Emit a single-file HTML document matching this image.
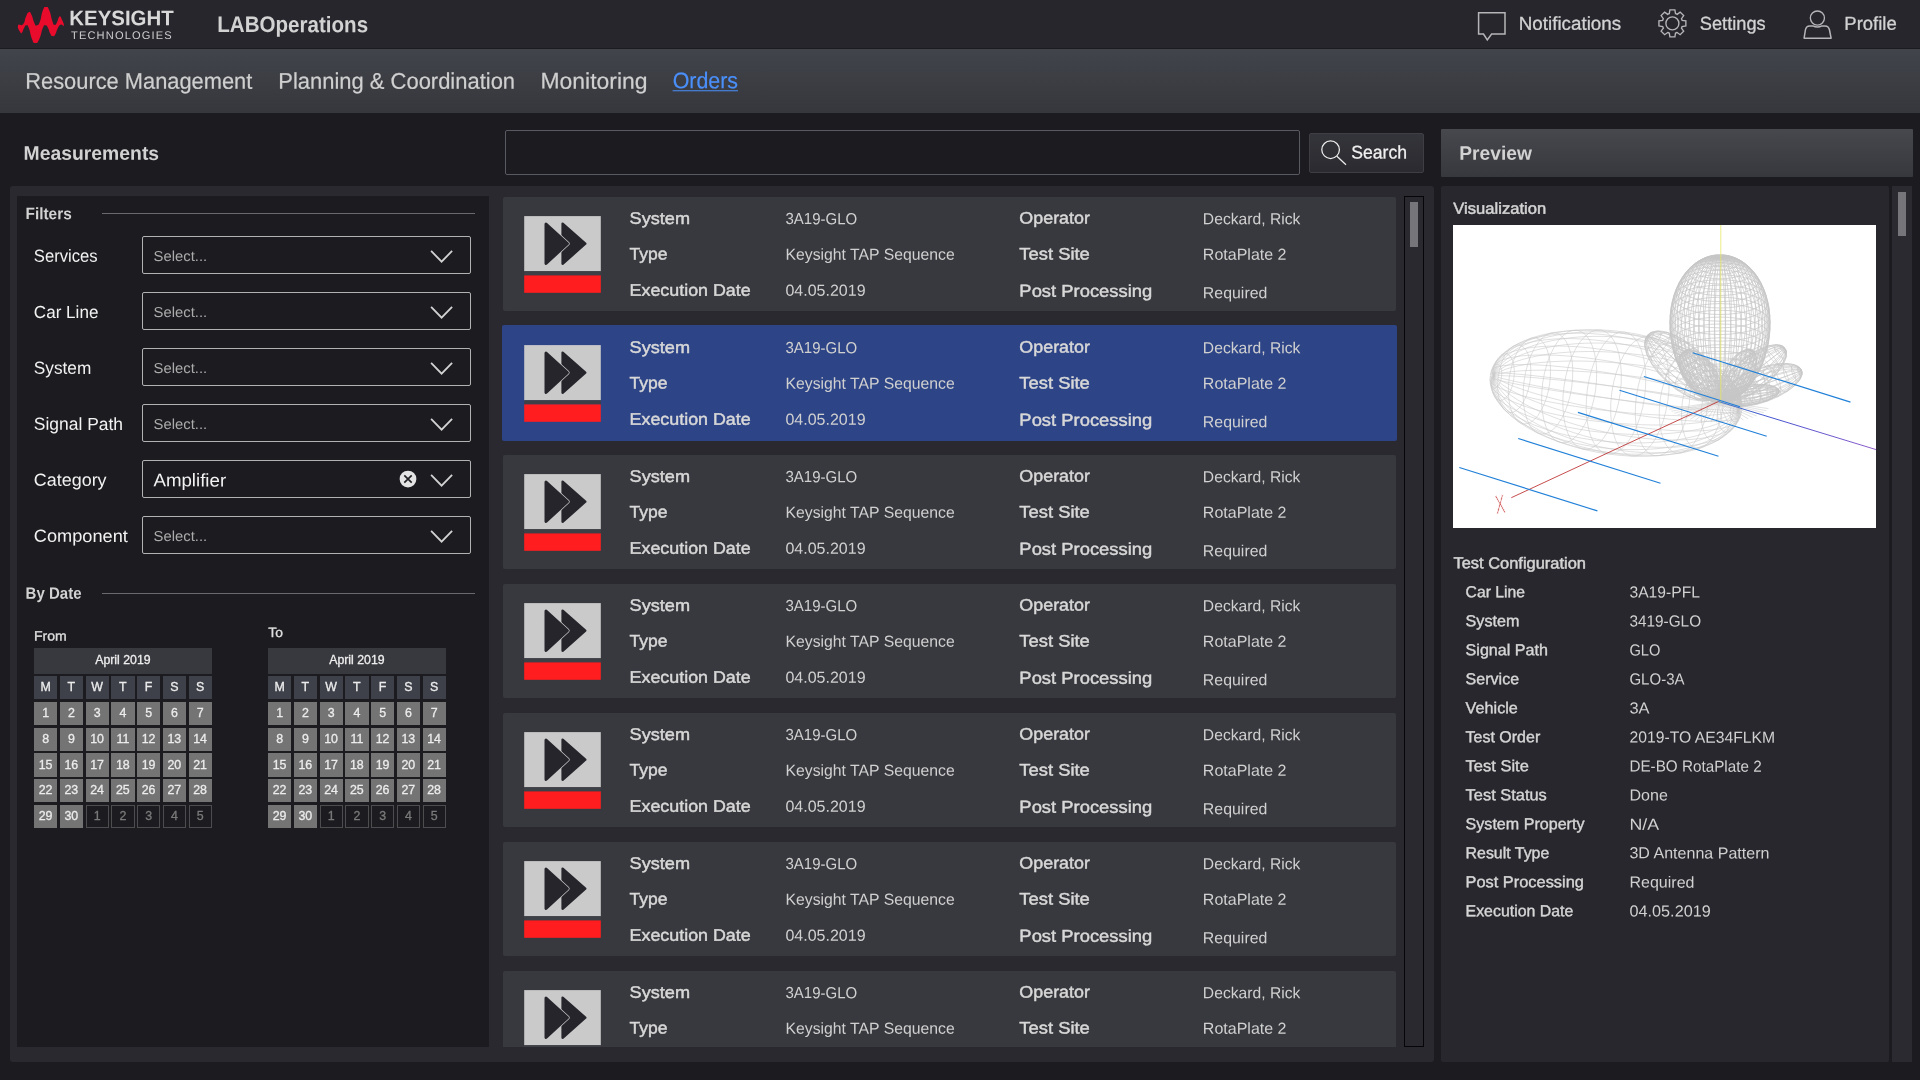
<!DOCTYPE html><html lang="en"><head><meta charset="utf-8"><title>LABOperations - Orders</title><style>
html,body{margin:0;padding:0}
body{width:1920px;height:1080px;background:#1c1b20;position:relative;overflow:hidden;font-family:"Liberation Sans",sans-serif;}
#app{position:absolute;left:0;top:0;width:1920px;height:1080px;will-change:transform;transform:translateZ(0)}
.a{position:absolute}
.t{position:absolute;white-space:pre;line-height:1;transform-origin:0 0;}
.sel{position:absolute;left:142px;width:327px;height:36px;border:1.2px solid #b2b2b2;border-radius:2px;box-sizing:content-box;background:#1c1b20}
.card{position:absolute;left:503px;width:893.3px;height:113.7px;background:#38393e;border-radius:2px}
.card.on{left:502px;width:895.2px;height:115.6px;background:#2d4486}
.cal{position:absolute;width:178px}
.cal .h{position:absolute;left:0;top:0;width:177.8px;height:25.8px;background:#38393e}
.cal .c{position:absolute;width:23.25px;height:23.25px;box-sizing:border-box}
.cal .w{background:#3e414a}
.cal .d{background:#747474}
.cal .o{background:#1c1b20;border:1px solid #4d4d50}
.cal span{position:absolute;left:-10px;right:-10px;text-align:center;top:5.3px;font-size:12.4px;line-height:1;color:#ececec;white-space:pre;-webkit-text-stroke:0.3px #ececec}
.cal .o span{color:#7a7a7a;top:4.3px;-webkit-text-stroke:0.3px #7a7a7a}
.cal .h span{top:6.2px;font-size:12.3px;color:#f0f0f0;left:0;right:0}
</style></head><body><div id="app">
<div class="a" style="left:0;top:0;width:1920px;height:48.4px;background:#27262d"></div>
<div class="a" style="left:0;top:48.4px;width:1920px;height:64.3px;background:linear-gradient(#1b1b20 0,#1b1b20 1px,#41444b 1.5px,#36373c 100%)"></div>
<svg class="a" style="left:0;top:0" width="70" height="48" viewBox="0 0 70 48"><path d="M17.97 25.50C18.81 23.05 20.73 26.77 23.12 24.19C25.52 21.60 24.25 20.42 25.94 16.87C27.62 13.33 27.12 13.08 28.75 12.37C30.38 11.67 29.63 11.21 31.37 14.53C33.12 17.85 32.82 20.20 34.56 23.44C36.31 26.67 35.56 25.93 37.19 25.31C38.82 24.69 38.31 25.82 40.00 21.37C41.69 16.93 40.98 14.80 42.81 10.50C44.64 6.20 44.12 7.03 46.09 7.03C48.06 7.03 47.49 6.20 49.37 10.50C51.26 14.80 50.83 17.07 52.37 21.37C53.92 25.68 53.18 24.51 54.53 24.84C55.88 25.18 55.61 24.66 56.87 22.50C58.14 20.33 57.76 19.45 58.75 17.62C59.73 15.80 59.31 16.07 60.15 16.41C61.00 16.74 60.44 16.02 61.56 18.75C62.69 21.48 64.19 23.70 63.90 25.50C63.62 27.30 62.45 23.91 60.62 24.75C58.80 25.59 59.44 25.39 57.81 28.31C56.18 31.24 56.73 32.16 55.19 34.50C53.64 36.83 54.12 36.32 52.65 36.09C51.19 35.87 51.80 36.36 50.31 33.75C48.82 31.13 49.23 29.91 47.69 27.37C46.14 24.84 46.62 25.09 45.16 25.31C43.69 25.54 44.58 23.96 42.81 28.12C41.04 32.29 41.50 34.74 39.25 39.19C37.00 43.63 37.48 42.88 35.31 42.94C33.15 42.99 33.94 43.76 32.03 39.37C30.12 34.99 30.62 32.53 28.94 28.31C27.25 24.09 27.87 25.42 26.41 25.31C24.94 25.20 25.38 25.74 24.06 27.94C22.74 30.13 23.12 31.30 22.00 32.62C20.87 33.95 21.52 34.48 20.31 32.34C19.10 30.21 17.12 27.95 17.97 25.50Z" fill="#e80b2c"/></svg>
<svg class="a" style="left:1470px;top:4px" width="60" height="42" viewBox="1470 4 60 42" fill="none" stroke="#b6b6b8" stroke-width="1.5" stroke-linejoin="miter"><path d="M1478.6 12.8H1505V34.1H1491.6L1487.3 40L1483.5 34.1H1478.6Z"/></svg>
<svg class="a" style="left:1650px;top:4px" width="60" height="42" viewBox="1650 4 60 42" fill="none" stroke="#b6b6b8" stroke-width="1.35" stroke-linejoin="miter"><path d="M1669.30 13.68L1669.90 9.93L1674.90 9.93L1675.50 13.68A10.2 10.2 0 0 1 1677.08 14.34L1680.16 12.11L1683.69 15.64L1681.46 18.72A10.2 10.2 0 0 1 1682.12 20.30L1685.87 20.90L1685.87 25.90L1682.12 26.50A10.2 10.2 0 0 1 1681.46 28.08L1683.69 31.16L1680.16 34.69L1677.08 32.46A10.2 10.2 0 0 1 1675.50 33.12L1674.90 36.87L1669.90 36.87L1669.30 33.12A10.2 10.2 0 0 1 1667.72 32.46L1664.64 34.69L1661.11 31.16L1663.34 28.08A10.2 10.2 0 0 1 1662.68 26.50L1658.93 25.90L1658.93 20.90L1662.68 20.30A10.2 10.2 0 0 1 1663.34 18.72L1661.11 15.64L1664.64 12.11L1667.72 14.34A10.2 10.2 0 0 1 1669.30 13.68Z"/><circle cx="1672.4" cy="23.4" r="6.5"/></svg>
<svg class="a" style="left:1790px;top:4px" width="60" height="42" viewBox="1790 4 60 42" fill="none" stroke="#b6b6b8" stroke-width="1.35" stroke-linejoin="round"><circle cx="1817.4" cy="18" r="7.05"/><path d="M1804.1 38.2H1831.1L1829.5 30C1828.9 27 1827.5 25.9 1825.1 25.9H1822C1819 27.4 1815.8 27.4 1812.8 25.9H1809.7C1807.3 25.9 1805.9 27 1805.4 30Z" stroke-width="1.5"/></svg>
<div class="a" style="left:9.5px;top:185.5px;width:1424px;height:876px;background:#2a292f;border-radius:3px"></div>
<div class="a" style="left:17px;top:196px;width:471.5px;height:850.5px;background:#1c1b20"></div>
<div class="a" style="left:505px;top:130px;width:793px;height:42.5px;border:1px solid #585963;border-radius:2px;background:#1c1b20"></div>
<div class="a" style="left:1309px;top:133px;width:113px;height:38px;border:1px solid #3e3e44;border-radius:2px;background:linear-gradient(#34353a,#2b2a30)"></div>
<svg class="a" style="left:1315px;top:136px" width="36" height="34" viewBox="1315 136 36 34" fill="none" stroke="#ededed" stroke-width="1.25"><circle cx="1330.6" cy="149.7" r="8.8"/><path d="M1336.9 156.2L1346 164.8" stroke-linecap="butt"/></svg>
<div class="a" style="left:1441px;top:128.7px;width:471.5px;height:48px;background:linear-gradient(#46484d,#37383d);border-radius:1px"></div>
<div class="a" style="left:1441px;top:185.5px;width:448px;height:876px;background:#28272d;border-radius:2px"></div>
<div class="a" style="left:1891.7px;top:185.5px;width:20.3px;height:876px;background:#2b2a30"></div>
<div class="a" style="left:1898.3px;top:192px;width:8px;height:44px;background:#76767a"></div>
<div class="a" style="left:102px;top:212.8px;width:373px;height:1px;background:#6a6a6e"></div>
<div class="a" style="left:102px;top:592.9px;width:373px;height:1px;background:#6a6a6e"></div>
<div class="sel" style="top:235.8px"></div>
<svg class="a" style="left:426px;top:246.4px" width="32" height="20" viewBox="0 0 32 20" fill="none" stroke="#d2d2d2" stroke-width="1.8"><path d="M5.1 4.9L15.6 15.7L26.1 4.9"/></svg>
<div class="sel" style="top:291.8px"></div>
<svg class="a" style="left:426px;top:302.4px" width="32" height="20" viewBox="0 0 32 20" fill="none" stroke="#d2d2d2" stroke-width="1.8"><path d="M5.1 4.9L15.6 15.7L26.1 4.9"/></svg>
<div class="sel" style="top:347.8px"></div>
<svg class="a" style="left:426px;top:358.4px" width="32" height="20" viewBox="0 0 32 20" fill="none" stroke="#d2d2d2" stroke-width="1.8"><path d="M5.1 4.9L15.6 15.7L26.1 4.9"/></svg>
<div class="sel" style="top:403.8px"></div>
<svg class="a" style="left:426px;top:414.4px" width="32" height="20" viewBox="0 0 32 20" fill="none" stroke="#d2d2d2" stroke-width="1.8"><path d="M5.1 4.9L15.6 15.7L26.1 4.9"/></svg>
<div class="sel" style="top:459.8px"></div>
<svg class="a" style="left:426px;top:470.4px" width="32" height="20" viewBox="0 0 32 20" fill="none" stroke="#d2d2d2" stroke-width="1.8"><path d="M5.1 4.9L15.6 15.7L26.1 4.9"/></svg>
<div class="sel" style="top:515.8px"></div>
<svg class="a" style="left:426px;top:526.4px" width="32" height="20" viewBox="0 0 32 20" fill="none" stroke="#d2d2d2" stroke-width="1.8"><path d="M5.1 4.9L15.6 15.7L26.1 4.9"/></svg>
<svg class="a" style="left:398px;top:469px" width="20" height="20" viewBox="398 469 20 20"><circle cx="408" cy="479.05" r="8.4" fill="#e4e4e4"/><path d="M404.3 475.4L411.7 482.7M411.7 475.4L404.3 482.7" stroke="#222126" stroke-width="1.7" fill="none"/></svg>
<div class="cal" style="left:34px;top:648px"><div class="h"><span>April 2019</span></div><div class="c w" style="left:0.00px;top:28.2px"><span>M</span></div><div class="c w" style="left:25.75px;top:28.2px"><span>T</span></div><div class="c w" style="left:51.50px;top:28.2px"><span>W</span></div><div class="c w" style="left:77.25px;top:28.2px"><span>T</span></div><div class="c w" style="left:103.00px;top:28.2px"><span>F</span></div><div class="c w" style="left:128.75px;top:28.2px"><span>S</span></div><div class="c w" style="left:154.50px;top:28.2px"><span>S</span></div><div class="c d" style="left:0.00px;top:53.95px"><span>1</span></div><div class="c d" style="left:25.75px;top:53.95px"><span>2</span></div><div class="c d" style="left:51.50px;top:53.95px"><span>3</span></div><div class="c d" style="left:77.25px;top:53.95px"><span>4</span></div><div class="c d" style="left:103.00px;top:53.95px"><span>5</span></div><div class="c d" style="left:128.75px;top:53.95px"><span>6</span></div><div class="c d" style="left:154.50px;top:53.95px"><span>7</span></div><div class="c d" style="left:0.00px;top:79.70px"><span>8</span></div><div class="c d" style="left:25.75px;top:79.70px"><span>9</span></div><div class="c d" style="left:51.50px;top:79.70px"><span>10</span></div><div class="c d" style="left:77.25px;top:79.70px"><span>11</span></div><div class="c d" style="left:103.00px;top:79.70px"><span>12</span></div><div class="c d" style="left:128.75px;top:79.70px"><span>13</span></div><div class="c d" style="left:154.50px;top:79.70px"><span>14</span></div><div class="c d" style="left:0.00px;top:105.45px"><span>15</span></div><div class="c d" style="left:25.75px;top:105.45px"><span>16</span></div><div class="c d" style="left:51.50px;top:105.45px"><span>17</span></div><div class="c d" style="left:77.25px;top:105.45px"><span>18</span></div><div class="c d" style="left:103.00px;top:105.45px"><span>19</span></div><div class="c d" style="left:128.75px;top:105.45px"><span>20</span></div><div class="c d" style="left:154.50px;top:105.45px"><span>21</span></div><div class="c d" style="left:0.00px;top:131.20px"><span>22</span></div><div class="c d" style="left:25.75px;top:131.20px"><span>23</span></div><div class="c d" style="left:51.50px;top:131.20px"><span>24</span></div><div class="c d" style="left:77.25px;top:131.20px"><span>25</span></div><div class="c d" style="left:103.00px;top:131.20px"><span>26</span></div><div class="c d" style="left:128.75px;top:131.20px"><span>27</span></div><div class="c d" style="left:154.50px;top:131.20px"><span>28</span></div><div class="c d" style="left:0.00px;top:156.95px"><span>29</span></div><div class="c d" style="left:25.75px;top:156.95px"><span>30</span></div><div class="c o" style="left:51.50px;top:156.95px"><span>1</span></div><div class="c o" style="left:77.25px;top:156.95px"><span>2</span></div><div class="c o" style="left:103.00px;top:156.95px"><span>3</span></div><div class="c o" style="left:128.75px;top:156.95px"><span>4</span></div><div class="c o" style="left:154.50px;top:156.95px"><span>5</span></div></div>
<div class="cal" style="left:268px;top:648px"><div class="h"><span>April 2019</span></div><div class="c w" style="left:0.00px;top:28.2px"><span>M</span></div><div class="c w" style="left:25.75px;top:28.2px"><span>T</span></div><div class="c w" style="left:51.50px;top:28.2px"><span>W</span></div><div class="c w" style="left:77.25px;top:28.2px"><span>T</span></div><div class="c w" style="left:103.00px;top:28.2px"><span>F</span></div><div class="c w" style="left:128.75px;top:28.2px"><span>S</span></div><div class="c w" style="left:154.50px;top:28.2px"><span>S</span></div><div class="c d" style="left:0.00px;top:53.95px"><span>1</span></div><div class="c d" style="left:25.75px;top:53.95px"><span>2</span></div><div class="c d" style="left:51.50px;top:53.95px"><span>3</span></div><div class="c d" style="left:77.25px;top:53.95px"><span>4</span></div><div class="c d" style="left:103.00px;top:53.95px"><span>5</span></div><div class="c d" style="left:128.75px;top:53.95px"><span>6</span></div><div class="c d" style="left:154.50px;top:53.95px"><span>7</span></div><div class="c d" style="left:0.00px;top:79.70px"><span>8</span></div><div class="c d" style="left:25.75px;top:79.70px"><span>9</span></div><div class="c d" style="left:51.50px;top:79.70px"><span>10</span></div><div class="c d" style="left:77.25px;top:79.70px"><span>11</span></div><div class="c d" style="left:103.00px;top:79.70px"><span>12</span></div><div class="c d" style="left:128.75px;top:79.70px"><span>13</span></div><div class="c d" style="left:154.50px;top:79.70px"><span>14</span></div><div class="c d" style="left:0.00px;top:105.45px"><span>15</span></div><div class="c d" style="left:25.75px;top:105.45px"><span>16</span></div><div class="c d" style="left:51.50px;top:105.45px"><span>17</span></div><div class="c d" style="left:77.25px;top:105.45px"><span>18</span></div><div class="c d" style="left:103.00px;top:105.45px"><span>19</span></div><div class="c d" style="left:128.75px;top:105.45px"><span>20</span></div><div class="c d" style="left:154.50px;top:105.45px"><span>21</span></div><div class="c d" style="left:0.00px;top:131.20px"><span>22</span></div><div class="c d" style="left:25.75px;top:131.20px"><span>23</span></div><div class="c d" style="left:51.50px;top:131.20px"><span>24</span></div><div class="c d" style="left:77.25px;top:131.20px"><span>25</span></div><div class="c d" style="left:103.00px;top:131.20px"><span>26</span></div><div class="c d" style="left:128.75px;top:131.20px"><span>27</span></div><div class="c d" style="left:154.50px;top:131.20px"><span>28</span></div><div class="c d" style="left:0.00px;top:156.95px"><span>29</span></div><div class="c d" style="left:25.75px;top:156.95px"><span>30</span></div><div class="c o" style="left:51.50px;top:156.95px"><span>1</span></div><div class="c o" style="left:77.25px;top:156.95px"><span>2</span></div><div class="c o" style="left:103.00px;top:156.95px"><span>3</span></div><div class="c o" style="left:128.75px;top:156.95px"><span>4</span></div><div class="c o" style="left:154.50px;top:156.95px"><span>5</span></div></div>
<div class="a" style="left:495px;top:190px;width:910px;height:857px;overflow:hidden">
<div class="card" style="left:8px;top:7px"></div>
<svg class="a" style="left:29px;top:26px" width="77" height="77" viewBox="0 0 77 77"><rect x="0.2" y="0.1" width="76.6" height="55.2" fill="#cacaca"/><rect x="0.2" y="55.2" width="76.6" height="4.3" fill="#3d4046"/><rect x="0.2" y="59.4" width="76.6" height="17.4" fill="#ff1d1f"/><path d="M38.6 7.6L61.3 27.7L38.6 47.8Z" fill="#26252c" stroke="#26252c" stroke-width="2.4" stroke-linejoin="round"/><path d="M22 8L43.4 27.7L22 47.4Z" fill="#26252c" stroke="#cacaca" stroke-width="4.4" stroke-linejoin="round"/><path d="M22 8L43.4 27.7L22 47.4Z" fill="#26252c" stroke="#26252c" stroke-width="3.0" stroke-linejoin="round"/></svg>
<div class="card on" style="left:7px;top:135px"></div>
<svg class="a" style="left:29px;top:155px" width="77" height="77" viewBox="0 0 77 77"><rect x="0.2" y="0.1" width="76.6" height="55.2" fill="#cacaca"/><rect x="0.2" y="55.2" width="76.6" height="4.3" fill="#3d4046"/><rect x="0.2" y="59.4" width="76.6" height="17.4" fill="#ff1d1f"/><path d="M38.6 7.6L61.3 27.7L38.6 47.8Z" fill="#26252c" stroke="#26252c" stroke-width="2.4" stroke-linejoin="round"/><path d="M22 8L43.4 27.7L22 47.4Z" fill="#26252c" stroke="#cacaca" stroke-width="4.4" stroke-linejoin="round"/><path d="M22 8L43.4 27.7L22 47.4Z" fill="#26252c" stroke="#26252c" stroke-width="3.0" stroke-linejoin="round"/></svg>
<div class="card" style="left:8px;top:265px"></div>
<svg class="a" style="left:29px;top:284px" width="77" height="77" viewBox="0 0 77 77"><rect x="0.2" y="0.1" width="76.6" height="55.2" fill="#cacaca"/><rect x="0.2" y="55.2" width="76.6" height="4.3" fill="#3d4046"/><rect x="0.2" y="59.4" width="76.6" height="17.4" fill="#ff1d1f"/><path d="M38.6 7.6L61.3 27.7L38.6 47.8Z" fill="#26252c" stroke="#26252c" stroke-width="2.4" stroke-linejoin="round"/><path d="M22 8L43.4 27.7L22 47.4Z" fill="#26252c" stroke="#cacaca" stroke-width="4.4" stroke-linejoin="round"/><path d="M22 8L43.4 27.7L22 47.4Z" fill="#26252c" stroke="#26252c" stroke-width="3.0" stroke-linejoin="round"/></svg>
<div class="card" style="left:8px;top:394px"></div>
<svg class="a" style="left:29px;top:413px" width="77" height="77" viewBox="0 0 77 77"><rect x="0.2" y="0.1" width="76.6" height="55.2" fill="#cacaca"/><rect x="0.2" y="55.2" width="76.6" height="4.3" fill="#3d4046"/><rect x="0.2" y="59.4" width="76.6" height="17.4" fill="#ff1d1f"/><path d="M38.6 7.6L61.3 27.7L38.6 47.8Z" fill="#26252c" stroke="#26252c" stroke-width="2.4" stroke-linejoin="round"/><path d="M22 8L43.4 27.7L22 47.4Z" fill="#26252c" stroke="#cacaca" stroke-width="4.4" stroke-linejoin="round"/><path d="M22 8L43.4 27.7L22 47.4Z" fill="#26252c" stroke="#26252c" stroke-width="3.0" stroke-linejoin="round"/></svg>
<div class="card" style="left:8px;top:523px"></div>
<svg class="a" style="left:29px;top:542px" width="77" height="77" viewBox="0 0 77 77"><rect x="0.2" y="0.1" width="76.6" height="55.2" fill="#cacaca"/><rect x="0.2" y="55.2" width="76.6" height="4.3" fill="#3d4046"/><rect x="0.2" y="59.4" width="76.6" height="17.4" fill="#ff1d1f"/><path d="M38.6 7.6L61.3 27.7L38.6 47.8Z" fill="#26252c" stroke="#26252c" stroke-width="2.4" stroke-linejoin="round"/><path d="M22 8L43.4 27.7L22 47.4Z" fill="#26252c" stroke="#cacaca" stroke-width="4.4" stroke-linejoin="round"/><path d="M22 8L43.4 27.7L22 47.4Z" fill="#26252c" stroke="#26252c" stroke-width="3.0" stroke-linejoin="round"/></svg>
<div class="card" style="left:8px;top:652px"></div>
<svg class="a" style="left:29px;top:671px" width="77" height="77" viewBox="0 0 77 77"><rect x="0.2" y="0.1" width="76.6" height="55.2" fill="#cacaca"/><rect x="0.2" y="55.2" width="76.6" height="4.3" fill="#3d4046"/><rect x="0.2" y="59.4" width="76.6" height="17.4" fill="#ff1d1f"/><path d="M38.6 7.6L61.3 27.7L38.6 47.8Z" fill="#26252c" stroke="#26252c" stroke-width="2.4" stroke-linejoin="round"/><path d="M22 8L43.4 27.7L22 47.4Z" fill="#26252c" stroke="#cacaca" stroke-width="4.4" stroke-linejoin="round"/><path d="M22 8L43.4 27.7L22 47.4Z" fill="#26252c" stroke="#26252c" stroke-width="3.0" stroke-linejoin="round"/></svg>
<div class="card" style="left:8px;top:781px"></div>
<svg class="a" style="left:29px;top:800px" width="77" height="77" viewBox="0 0 77 77"><rect x="0.2" y="0.1" width="76.6" height="55.2" fill="#cacaca"/><rect x="0.2" y="55.2" width="76.6" height="4.3" fill="#3d4046"/><rect x="0.2" y="59.4" width="76.6" height="17.4" fill="#ff1d1f"/><path d="M38.6 7.6L61.3 27.7L38.6 47.8Z" fill="#26252c" stroke="#26252c" stroke-width="2.4" stroke-linejoin="round"/><path d="M22 8L43.4 27.7L22 47.4Z" fill="#26252c" stroke="#cacaca" stroke-width="4.4" stroke-linejoin="round"/><path d="M22 8L43.4 27.7L22 47.4Z" fill="#26252c" stroke="#26252c" stroke-width="3.0" stroke-linejoin="round"/></svg>
<div class="t" style="left:134px;top:20px;font-size:16.6px;color:#d8d8d8;transform:matrix(1.0922,0.0006,0,1,0.58,0.87);-webkit-text-stroke:0.45px #d8d8d8;">System</div>
<div class="t" style="left:134px;top:56px;font-size:16.6px;color:#d8d8d8;transform:matrix(1.0573,0.0006,0,1,0.58,0.59);-webkit-text-stroke:0.45px #d8d8d8;">Type</div>
<div class="t" style="left:134px;top:92px;font-size:16.6px;color:#d8d8d8;transform:matrix(1.0762,0.0006,0,1,0.58,0.77);-webkit-text-stroke:0.45px #d8d8d8;">Execution Date</div>
<div class="t" style="left:290px;top:21px;font-size:16.0px;color:#d0d0d0;transform:matrix(0.9387,0.0006,0,1,0.47,0.11);">3A19-GLO</div>
<div class="t" style="left:290px;top:56px;font-size:16.0px;color:#d0d0d0;transform:matrix(0.9859,0.0006,0,1,0.47,0.75);">Keysight TAP Sequence</div>
<div class="t" style="left:290px;top:92px;font-size:16.0px;color:#d0d0d0;transform:matrix(0.9997,0.0006,0,1,0.47,0.71);">04.05.2019</div>
<div class="t" style="left:524px;top:20px;font-size:16.6px;color:#d8d8d8;transform:matrix(1.0768,0.0006,0,1,0.36,0.56);-webkit-text-stroke:0.45px #d8d8d8;">Operator</div>
<div class="t" style="left:524px;top:56px;font-size:16.6px;color:#d8d8d8;transform:matrix(1.1070,0.0006,0,1,0.36,0.49);-webkit-text-stroke:0.45px #d8d8d8;">Test Site</div>
<div class="t" style="left:524px;top:92px;font-size:17.0px;color:#d8d8d8;transform:matrix(1.0818,0.0006,0,1,0.36,0.62);-webkit-text-stroke:0.45px #d8d8d8;">Post Processing</div>
<div class="t" style="left:707px;top:21px;font-size:16.0px;color:#d0d0d0;transform:matrix(0.9793,0.0006,0,1,0.87,0.15);">Deckard, Rick</div>
<div class="t" style="left:707px;top:56px;font-size:16.0px;color:#d0d0d0;transform:matrix(1.0005,0.0006,0,1,0.87,0.75);">RotaPlate 2</div>
<div class="t" style="left:707px;top:95px;font-size:16.0px;color:#d0d0d0;transform:matrix(0.9931,0.0006,0,1,0.87,0.29);">Required</div>
<div class="t" style="left:134px;top:149px;font-size:16.6px;color:#d8d8d8;transform:matrix(1.0922,0.0006,0,1,0.58,0.87);-webkit-text-stroke:0.45px #d8d8d8;">System</div>
<div class="t" style="left:134px;top:185px;font-size:16.6px;color:#d8d8d8;transform:matrix(1.0573,0.0006,0,1,0.58,0.59);-webkit-text-stroke:0.45px #d8d8d8;">Type</div>
<div class="t" style="left:134px;top:221px;font-size:16.6px;color:#d8d8d8;transform:matrix(1.0762,0.0006,0,1,0.58,0.77);-webkit-text-stroke:0.45px #d8d8d8;">Execution Date</div>
<div class="t" style="left:290px;top:150px;font-size:16.0px;color:#d0d0d0;transform:matrix(0.9387,0.0006,0,1,0.47,0.11);">3A19-GLO</div>
<div class="t" style="left:290px;top:185px;font-size:16.0px;color:#d0d0d0;transform:matrix(0.9859,0.0006,0,1,0.47,0.75);">Keysight TAP Sequence</div>
<div class="t" style="left:290px;top:221px;font-size:16.0px;color:#d0d0d0;transform:matrix(0.9997,0.0006,0,1,0.47,0.71);">04.05.2019</div>
<div class="t" style="left:524px;top:149px;font-size:16.6px;color:#d8d8d8;transform:matrix(1.0768,0.0006,0,1,0.36,0.56);-webkit-text-stroke:0.45px #d8d8d8;">Operator</div>
<div class="t" style="left:524px;top:185px;font-size:16.6px;color:#d8d8d8;transform:matrix(1.1070,0.0006,0,1,0.36,0.49);-webkit-text-stroke:0.45px #d8d8d8;">Test Site</div>
<div class="t" style="left:524px;top:221px;font-size:17.0px;color:#d8d8d8;transform:matrix(1.0818,0.0006,0,1,0.36,0.62);-webkit-text-stroke:0.45px #d8d8d8;">Post Processing</div>
<div class="t" style="left:707px;top:150px;font-size:16.0px;color:#d0d0d0;transform:matrix(0.9793,0.0006,0,1,0.87,0.15);">Deckard, Rick</div>
<div class="t" style="left:707px;top:185px;font-size:16.0px;color:#d0d0d0;transform:matrix(1.0005,0.0006,0,1,0.87,0.75);">RotaPlate 2</div>
<div class="t" style="left:707px;top:224px;font-size:16.0px;color:#d0d0d0;transform:matrix(0.9931,0.0006,0,1,0.87,0.29);">Required</div>
<div class="t" style="left:134px;top:278px;font-size:16.6px;color:#d8d8d8;transform:matrix(1.0922,0.0006,0,1,0.58,0.87);-webkit-text-stroke:0.45px #d8d8d8;">System</div>
<div class="t" style="left:134px;top:314px;font-size:16.6px;color:#d8d8d8;transform:matrix(1.0573,0.0006,0,1,0.58,0.59);-webkit-text-stroke:0.45px #d8d8d8;">Type</div>
<div class="t" style="left:134px;top:350px;font-size:16.6px;color:#d8d8d8;transform:matrix(1.0762,0.0006,0,1,0.58,0.77);-webkit-text-stroke:0.45px #d8d8d8;">Execution Date</div>
<div class="t" style="left:290px;top:279px;font-size:16.0px;color:#d0d0d0;transform:matrix(0.9387,0.0006,0,1,0.47,0.11);">3A19-GLO</div>
<div class="t" style="left:290px;top:314px;font-size:16.0px;color:#d0d0d0;transform:matrix(0.9859,0.0006,0,1,0.47,0.75);">Keysight TAP Sequence</div>
<div class="t" style="left:290px;top:350px;font-size:16.0px;color:#d0d0d0;transform:matrix(0.9997,0.0006,0,1,0.47,0.71);">04.05.2019</div>
<div class="t" style="left:524px;top:278px;font-size:16.6px;color:#d8d8d8;transform:matrix(1.0768,0.0006,0,1,0.36,0.56);-webkit-text-stroke:0.45px #d8d8d8;">Operator</div>
<div class="t" style="left:524px;top:314px;font-size:16.6px;color:#d8d8d8;transform:matrix(1.1070,0.0006,0,1,0.36,0.49);-webkit-text-stroke:0.45px #d8d8d8;">Test Site</div>
<div class="t" style="left:524px;top:350px;font-size:17.0px;color:#d8d8d8;transform:matrix(1.0818,0.0006,0,1,0.36,0.62);-webkit-text-stroke:0.45px #d8d8d8;">Post Processing</div>
<div class="t" style="left:707px;top:279px;font-size:16.0px;color:#d0d0d0;transform:matrix(0.9793,0.0006,0,1,0.87,0.15);">Deckard, Rick</div>
<div class="t" style="left:707px;top:314px;font-size:16.0px;color:#d0d0d0;transform:matrix(1.0005,0.0006,0,1,0.87,0.75);">RotaPlate 2</div>
<div class="t" style="left:707px;top:353px;font-size:16.0px;color:#d0d0d0;transform:matrix(0.9931,0.0006,0,1,0.87,0.29);">Required</div>
<div class="t" style="left:134px;top:407px;font-size:16.6px;color:#d8d8d8;transform:matrix(1.0922,0.0006,0,1,0.58,0.87);-webkit-text-stroke:0.45px #d8d8d8;">System</div>
<div class="t" style="left:134px;top:443px;font-size:16.6px;color:#d8d8d8;transform:matrix(1.0573,0.0006,0,1,0.58,0.59);-webkit-text-stroke:0.45px #d8d8d8;">Type</div>
<div class="t" style="left:134px;top:479px;font-size:16.6px;color:#d8d8d8;transform:matrix(1.0762,0.0006,0,1,0.58,0.77);-webkit-text-stroke:0.45px #d8d8d8;">Execution Date</div>
<div class="t" style="left:290px;top:408px;font-size:16.0px;color:#d0d0d0;transform:matrix(0.9387,0.0006,0,1,0.47,0.11);">3A19-GLO</div>
<div class="t" style="left:290px;top:443px;font-size:16.0px;color:#d0d0d0;transform:matrix(0.9859,0.0006,0,1,0.47,0.75);">Keysight TAP Sequence</div>
<div class="t" style="left:290px;top:479px;font-size:16.0px;color:#d0d0d0;transform:matrix(0.9997,0.0006,0,1,0.47,0.71);">04.05.2019</div>
<div class="t" style="left:524px;top:407px;font-size:16.6px;color:#d8d8d8;transform:matrix(1.0768,0.0006,0,1,0.36,0.56);-webkit-text-stroke:0.45px #d8d8d8;">Operator</div>
<div class="t" style="left:524px;top:443px;font-size:16.6px;color:#d8d8d8;transform:matrix(1.1070,0.0006,0,1,0.36,0.49);-webkit-text-stroke:0.45px #d8d8d8;">Test Site</div>
<div class="t" style="left:524px;top:479px;font-size:17.0px;color:#d8d8d8;transform:matrix(1.0818,0.0006,0,1,0.36,0.62);-webkit-text-stroke:0.45px #d8d8d8;">Post Processing</div>
<div class="t" style="left:707px;top:408px;font-size:16.0px;color:#d0d0d0;transform:matrix(0.9793,0.0006,0,1,0.87,0.15);">Deckard, Rick</div>
<div class="t" style="left:707px;top:443px;font-size:16.0px;color:#d0d0d0;transform:matrix(1.0005,0.0006,0,1,0.87,0.75);">RotaPlate 2</div>
<div class="t" style="left:707px;top:482px;font-size:16.0px;color:#d0d0d0;transform:matrix(0.9931,0.0006,0,1,0.87,0.29);">Required</div>
<div class="t" style="left:134px;top:536px;font-size:16.6px;color:#d8d8d8;transform:matrix(1.0922,0.0006,0,1,0.58,0.87);-webkit-text-stroke:0.45px #d8d8d8;">System</div>
<div class="t" style="left:134px;top:572px;font-size:16.6px;color:#d8d8d8;transform:matrix(1.0573,0.0006,0,1,0.58,0.59);-webkit-text-stroke:0.45px #d8d8d8;">Type</div>
<div class="t" style="left:134px;top:608px;font-size:16.6px;color:#d8d8d8;transform:matrix(1.0762,0.0006,0,1,0.58,0.77);-webkit-text-stroke:0.45px #d8d8d8;">Execution Date</div>
<div class="t" style="left:290px;top:537px;font-size:16.0px;color:#d0d0d0;transform:matrix(0.9387,0.0006,0,1,0.47,0.11);">3A19-GLO</div>
<div class="t" style="left:290px;top:572px;font-size:16.0px;color:#d0d0d0;transform:matrix(0.9859,0.0006,0,1,0.47,0.75);">Keysight TAP Sequence</div>
<div class="t" style="left:290px;top:608px;font-size:16.0px;color:#d0d0d0;transform:matrix(0.9997,0.0006,0,1,0.47,0.71);">04.05.2019</div>
<div class="t" style="left:524px;top:536px;font-size:16.6px;color:#d8d8d8;transform:matrix(1.0768,0.0006,0,1,0.36,0.56);-webkit-text-stroke:0.45px #d8d8d8;">Operator</div>
<div class="t" style="left:524px;top:572px;font-size:16.6px;color:#d8d8d8;transform:matrix(1.1070,0.0006,0,1,0.36,0.49);-webkit-text-stroke:0.45px #d8d8d8;">Test Site</div>
<div class="t" style="left:524px;top:608px;font-size:17.0px;color:#d8d8d8;transform:matrix(1.0818,0.0006,0,1,0.36,0.62);-webkit-text-stroke:0.45px #d8d8d8;">Post Processing</div>
<div class="t" style="left:707px;top:537px;font-size:16.0px;color:#d0d0d0;transform:matrix(0.9793,0.0006,0,1,0.87,0.15);">Deckard, Rick</div>
<div class="t" style="left:707px;top:572px;font-size:16.0px;color:#d0d0d0;transform:matrix(1.0005,0.0006,0,1,0.87,0.75);">RotaPlate 2</div>
<div class="t" style="left:707px;top:611px;font-size:16.0px;color:#d0d0d0;transform:matrix(0.9931,0.0006,0,1,0.87,0.29);">Required</div>
<div class="t" style="left:134px;top:665px;font-size:16.6px;color:#d8d8d8;transform:matrix(1.0922,0.0006,0,1,0.58,0.87);-webkit-text-stroke:0.45px #d8d8d8;">System</div>
<div class="t" style="left:134px;top:701px;font-size:16.6px;color:#d8d8d8;transform:matrix(1.0573,0.0006,0,1,0.58,0.59);-webkit-text-stroke:0.45px #d8d8d8;">Type</div>
<div class="t" style="left:134px;top:737px;font-size:16.6px;color:#d8d8d8;transform:matrix(1.0762,0.0006,0,1,0.58,0.77);-webkit-text-stroke:0.45px #d8d8d8;">Execution Date</div>
<div class="t" style="left:290px;top:666px;font-size:16.0px;color:#d0d0d0;transform:matrix(0.9387,0.0006,0,1,0.47,0.11);">3A19-GLO</div>
<div class="t" style="left:290px;top:701px;font-size:16.0px;color:#d0d0d0;transform:matrix(0.9859,0.0006,0,1,0.47,0.75);">Keysight TAP Sequence</div>
<div class="t" style="left:290px;top:737px;font-size:16.0px;color:#d0d0d0;transform:matrix(0.9997,0.0006,0,1,0.47,0.71);">04.05.2019</div>
<div class="t" style="left:524px;top:665px;font-size:16.6px;color:#d8d8d8;transform:matrix(1.0768,0.0006,0,1,0.36,0.56);-webkit-text-stroke:0.45px #d8d8d8;">Operator</div>
<div class="t" style="left:524px;top:701px;font-size:16.6px;color:#d8d8d8;transform:matrix(1.1070,0.0006,0,1,0.36,0.49);-webkit-text-stroke:0.45px #d8d8d8;">Test Site</div>
<div class="t" style="left:524px;top:737px;font-size:17.0px;color:#d8d8d8;transform:matrix(1.0818,0.0006,0,1,0.36,0.62);-webkit-text-stroke:0.45px #d8d8d8;">Post Processing</div>
<div class="t" style="left:707px;top:666px;font-size:16.0px;color:#d0d0d0;transform:matrix(0.9793,0.0006,0,1,0.87,0.15);">Deckard, Rick</div>
<div class="t" style="left:707px;top:701px;font-size:16.0px;color:#d0d0d0;transform:matrix(1.0005,0.0006,0,1,0.87,0.75);">RotaPlate 2</div>
<div class="t" style="left:707px;top:740px;font-size:16.0px;color:#d0d0d0;transform:matrix(0.9931,0.0006,0,1,0.87,0.29);">Required</div>
<div class="t" style="left:134px;top:794px;font-size:16.6px;color:#d8d8d8;transform:matrix(1.0922,0.0006,0,1,0.58,0.87);-webkit-text-stroke:0.45px #d8d8d8;">System</div>
<div class="t" style="left:134px;top:830px;font-size:16.6px;color:#d8d8d8;transform:matrix(1.0573,0.0006,0,1,0.58,0.59);-webkit-text-stroke:0.45px #d8d8d8;">Type</div>
<div class="t" style="left:134px;top:866px;font-size:16.6px;color:#d8d8d8;transform:matrix(1.0762,0.0006,0,1,0.58,0.77);-webkit-text-stroke:0.45px #d8d8d8;">Execution Date</div>
<div class="t" style="left:290px;top:795px;font-size:16.0px;color:#d0d0d0;transform:matrix(0.9387,0.0006,0,1,0.47,0.11);">3A19-GLO</div>
<div class="t" style="left:290px;top:830px;font-size:16.0px;color:#d0d0d0;transform:matrix(0.9859,0.0006,0,1,0.47,0.75);">Keysight TAP Sequence</div>
<div class="t" style="left:290px;top:866px;font-size:16.0px;color:#d0d0d0;transform:matrix(0.9997,0.0006,0,1,0.47,0.71);">04.05.2019</div>
<div class="t" style="left:524px;top:794px;font-size:16.6px;color:#d8d8d8;transform:matrix(1.0768,0.0006,0,1,0.36,0.56);-webkit-text-stroke:0.45px #d8d8d8;">Operator</div>
<div class="t" style="left:524px;top:830px;font-size:16.6px;color:#d8d8d8;transform:matrix(1.1070,0.0006,0,1,0.36,0.49);-webkit-text-stroke:0.45px #d8d8d8;">Test Site</div>
<div class="t" style="left:524px;top:866px;font-size:17.0px;color:#d8d8d8;transform:matrix(1.0818,0.0006,0,1,0.36,0.62);-webkit-text-stroke:0.45px #d8d8d8;">Post Processing</div>
<div class="t" style="left:707px;top:795px;font-size:16.0px;color:#d0d0d0;transform:matrix(0.9793,0.0006,0,1,0.87,0.15);">Deckard, Rick</div>
<div class="t" style="left:707px;top:830px;font-size:16.0px;color:#d0d0d0;transform:matrix(1.0005,0.0006,0,1,0.87,0.75);">RotaPlate 2</div>
<div class="t" style="left:707px;top:869px;font-size:16.0px;color:#d0d0d0;transform:matrix(0.9931,0.0006,0,1,0.87,0.29);">Required</div>
</div>
<div class="a" style="left:1403.8px;top:196px;width:18px;height:848.6px;border:1px solid #060608;background:#2a292f"></div>
<div class="a" style="left:1409.6px;top:201.8px;width:8.5px;height:45px;background:#76767a"></div>
<div class="a" style="left:1453px;top:225px;width:423.3px;height:303px;overflow:hidden;background:#fff"><svg width="423.3" height="303" viewBox="0 0 423.3 303" style="position:absolute;left:0;top:0"><rect width="423.3" height="303" fill="#ffffff"/><path d="M281.4 196.8L280.4 196.4 279.6 195.8 278.8 194.8 278.2 193.5 277.7 191.9 277.4 190.1 277.2 188.2 277.3 186.2 277.5 184.1 277.9 182.0 278.4 180.1 279.1 178.3 279.9 176.6 280.8 175.3 281.7 174.2 282.7 173.4 283.7 173.0 284.7 173.0 285.7 173.3 286.5 174.0 287.3 175.0 287.9 176.3 288.4 177.8 288.7 179.6 288.9 181.5 288.8 183.6 288.6 185.7 288.3 187.7 287.7 189.7 287.1 191.5 286.3 193.1 285.4 194.5 284.4 195.6 283.4 196.3 282.4 196.7 281.4 196.8M272.8 207.2L271.0 206.6 269.3 205.3 267.8 203.3 266.5 200.8 265.6 197.7 265.0 194.2 264.7 190.4 264.7 186.4 265.2 182.4 265.9 178.3 266.9 174.5 268.3 170.9 269.8 167.7 271.6 165.1 273.5 162.9 275.4 161.5 277.4 160.7 279.4 160.6 281.2 161.2 282.9 162.5 284.4 164.5 285.6 167.0 286.6 170.1 287.2 173.6 287.5 177.4 287.4 181.4 287.0 185.4 286.3 189.5 285.3 193.3 283.9 196.9 282.4 200.1 280.6 202.7 278.7 204.8 276.8 206.3 274.8 207.1 272.8 207.2M260.0 216.1L257.3 215.2 254.9 213.3 252.7 210.5 250.9 206.8 249.6 202.3 248.6 197.3 248.2 191.8 248.3 186.0 248.9 180.1 250.0 174.2 251.5 168.6 253.4 163.5 255.7 158.8 258.2 155.0 261.0 151.9 263.8 149.7 266.7 148.6 269.5 148.5 272.2 149.4 274.7 151.3 276.8 154.1 278.6 157.8 280.0 162.3 280.9 167.3 281.3 172.8 281.2 178.6 280.7 184.5 279.6 190.4 278.1 196.0 276.2 201.2 273.9 205.8 271.3 209.7 268.6 212.7 265.7 214.9 262.9 216.0 260.0 216.1M243.5 223.2L240.1 222.1 237.0 219.7 234.2 216.0 231.9 211.3 230.2 205.7 229.0 199.2 228.5 192.2 228.6 184.8 229.3 177.3 230.7 169.9 232.6 162.8 235.1 156.2 238.0 150.3 241.2 145.3 244.7 141.4 248.3 138.7 252.0 137.3 255.6 137.1 259.0 138.2 262.2 140.7 264.9 144.3 267.2 149.0 268.9 154.7 270.1 161.1 270.6 168.1 270.5 175.5 269.8 183.0 268.4 190.4 266.5 197.6 264.0 204.2 261.2 210.0 257.9 215.0 254.4 218.9 250.8 221.6 247.1 223.1 243.5 223.2M223.9 228.2L219.9 226.8 216.2 224.0 213.0 219.7 210.3 214.2 208.2 207.5 206.9 200.0 206.2 191.7 206.4 183.1 207.2 174.2 208.8 165.5 211.1 157.1 214.0 149.3 217.4 142.4 221.2 136.6 225.3 132.0 229.6 128.8 233.9 127.1 238.1 126.9 242.1 128.3 245.8 131.1 249.1 135.4 251.7 140.9 253.8 147.6 255.2 155.1 255.8 163.4 255.7 172.1 254.8 180.9 253.2 189.6 250.9 198.0 248.0 205.8 244.6 212.7 240.8 218.5 236.7 223.1 232.5 226.3 228.1 228.0 223.9 228.2M201.9 230.8L197.5 229.3 193.4 226.2 189.8 221.5 186.8 215.3 184.5 207.9 183.0 199.5 182.3 190.3 182.5 180.7 183.4 170.9 185.2 161.2 187.7 151.9 190.9 143.2 194.7 135.6 198.9 129.1 203.5 124.0 208.2 120.4 213.0 118.5 217.8 118.3 222.2 119.8 226.3 123.0 229.9 127.7 232.9 133.9 235.2 141.3 236.7 149.7 237.4 158.8 237.2 168.5 236.3 178.3 234.5 188.0 232.0 197.3 228.8 205.9 225.0 213.6 220.8 220.1 216.2 225.2 211.4 228.7 206.6 230.6 201.9 230.8M178.5 231.1L173.7 229.5 169.4 226.1 165.6 221.1 162.4 214.6 160.0 206.7 158.4 197.8 157.7 188.1 157.8 177.8 158.8 167.4 160.7 157.1 163.4 147.2 166.8 138.1 170.8 129.9 175.3 123.1 180.1 117.7 185.2 113.9 190.3 111.8 195.3 111.6 200.0 113.2 204.4 116.6 208.2 121.6 211.3 128.1 213.8 136.0 215.4 144.9 216.1 154.6 216.0 164.9 214.9 175.3 213.0 185.6 210.4 195.5 207.0 204.6 203.0 212.8 198.5 219.6 193.6 225.1 188.6 228.8 183.5 230.9 178.5 231.1M154.4 228.9L149.6 227.3 145.2 223.9 141.3 218.7 138.1 212.1 135.6 204.1 134.0 195.0 133.2 185.1 133.4 174.6 134.4 164.0 136.3 153.5 139.1 143.4 142.5 134.1 146.6 125.8 151.2 118.8 156.1 113.2 161.3 109.4 166.5 107.3 171.6 107.1 176.4 108.7 180.8 112.1 184.7 117.3 187.9 123.9 190.4 131.9 192.0 141.0 192.8 150.9 192.6 161.4 191.6 172.0 189.7 182.5 186.9 192.6 183.5 201.9 179.4 210.2 174.8 217.2 169.9 222.8 164.7 226.6 159.5 228.7 154.4 228.9M130.7 224.4L126.0 222.8 121.6 219.4 117.8 214.4 114.7 207.9 112.2 200.0 110.6 191.1 109.9 181.4 110.0 171.1 111.1 160.7 113.0 150.4 115.6 140.5 119.0 131.4 123.0 123.2 127.5 116.4 132.4 110.9 137.4 107.2 142.5 105.1 147.5 104.9 152.3 106.5 156.6 109.9 160.4 114.9 163.6 121.4 166.0 129.3 167.6 138.2 168.3 147.9 168.2 158.2 167.2 168.6 165.3 178.9 162.6 188.8 159.2 197.9 155.2 206.1 150.7 212.9 145.9 218.3 140.8 222.1 135.7 224.2 130.7 224.4M108.2 217.7L103.8 216.2 99.7 213.0 96.1 208.3 93.1 202.1 90.8 194.7 89.3 186.3 88.6 177.2 88.8 167.5 89.7 157.7 91.5 148.0 94.0 138.7 97.2 130.1 101.0 122.4 105.2 115.9 109.8 110.8 114.6 107.3 119.4 105.4 124.1 105.2 128.5 106.7 132.6 109.8 136.2 114.5 139.2 120.7 141.5 128.1 143.0 136.5 143.7 145.7 143.5 155.3 142.6 165.1 140.8 174.8 138.3 184.1 135.1 192.8 131.3 200.4 127.1 206.9 122.5 212.0 117.8 215.6 113.0 217.5 108.2 217.7M87.9 209.1L83.9 207.7 80.2 204.9 76.9 200.6 74.3 195.1 72.2 188.4 70.8 180.9 70.2 172.6 70.3 163.9 71.2 155.1 72.8 146.4 75.1 138.0 78.0 130.2 81.4 123.3 85.2 117.5 89.3 112.9 93.5 109.7 97.9 108.0 102.1 107.8 106.1 109.2 109.8 112.0 113.0 116.3 115.7 121.8 117.8 128.5 119.1 136.0 119.8 144.3 119.6 152.9 118.8 161.8 117.2 170.5 114.9 178.9 112.0 186.7 108.6 193.6 104.8 199.4 100.7 204.0 96.4 207.2 92.1 208.9 87.9 209.1M70.4 198.9L67.0 197.8 63.8 195.3 61.1 191.7 58.8 187.0 57.1 181.3 55.9 174.9 55.4 167.9 55.5 160.5 56.2 153.0 57.6 145.6 59.5 138.4 62.0 131.8 64.8 126.0 68.1 121.0 71.6 117.1 75.2 114.4 78.9 112.9 82.5 112.8 85.9 113.9 89.0 116.3 91.8 120.0 94.1 124.7 95.8 130.3 97.0 136.8 97.5 143.8 97.4 151.2 96.7 158.7 95.3 166.1 93.4 173.2 90.9 179.8 88.0 185.7 84.8 190.7 81.3 194.6 77.7 197.3 74.0 198.7 70.4 198.9M56.5 187.5L53.8 186.6 51.3 184.7 49.2 181.9 47.4 178.2 46.0 173.7 45.1 168.7 44.7 163.2 44.8 157.4 45.3 151.5 46.4 145.6 47.9 140.0 49.8 134.8 52.1 130.2 54.7 126.3 57.4 123.3 60.3 121.1 63.1 120.0 66.0 119.9 68.7 120.8 71.1 122.7 73.3 125.5 75.1 129.2 76.4 133.7 77.4 138.7 77.8 144.2 77.7 150.0 77.1 155.9 76.0 161.8 74.5 167.4 72.6 172.5 70.3 177.2 67.8 181.0 65.0 184.1 62.2 186.3 59.3 187.4 56.5 187.5M46.6 175.4L44.8 174.8 43.1 173.5 41.6 171.5 40.4 169.0 39.4 165.9 38.8 162.4 38.5 158.6 38.6 154.6 39.0 150.6 39.7 146.5 40.7 142.7 42.1 139.1 43.6 135.9 45.4 133.3 47.3 131.2 49.2 129.7 51.2 128.9 53.2 128.8 55.0 129.4 56.7 130.7 58.2 132.7 59.5 135.2 60.4 138.3 61.0 141.8 61.3 145.6 61.3 149.6 60.8 153.6 60.1 157.7 59.1 161.5 57.7 165.1 56.2 168.3 54.4 170.9 52.5 173.1 50.6 174.5 48.6 175.3 46.6 175.4M41.3 163.0L40.3 162.7 39.5 162.0 38.7 161.0 38.1 159.7 37.6 158.2 37.3 156.4 37.1 154.5 37.2 152.4 37.4 150.3 37.7 148.3 38.3 146.3 38.9 144.5 39.7 142.9 40.6 141.5 41.6 140.4 42.6 139.7 43.6 139.3 44.6 139.2 45.6 139.6 46.4 140.2 47.2 141.2 47.8 142.5 48.3 144.1 48.6 145.9 48.8 147.8 48.7 149.8 48.5 151.9 48.1 154.0 47.6 155.9 46.9 157.7 46.1 159.4 45.2 160.7 44.3 161.8 43.3 162.6 42.3 163.0 41.3 163.0M285.4 185.2L284.2 190.4 282.1 195.5 279.0 200.4 275.1 205.0 270.3 209.3 264.7 213.3 258.4 217.0 251.3 220.3 243.5 223.2 235.1 225.7 226.2 227.8 216.8 229.3 207.0 230.5 196.8 231.1 186.4 231.3 175.8 231.0 165.1 230.2 154.4 228.9 143.8 227.2 133.3 225.0 123.1 222.4 113.1 219.3 103.5 215.9 94.4 212.1 85.8 208.0 77.8 203.6 70.4 198.9 63.7 194.0 57.8 188.8 52.7 183.6 48.4 178.1 45.0 172.7 42.5 167.1 41.0 161.6 40.3 156.2 40.6 150.8M285.4 185.2L283.7 190.3 281.1 195.1 277.5 199.8 273.1 204.3 267.9 208.4 261.9 212.3 255.1 215.8 247.6 218.9 239.4 221.7 230.7 224.1 221.5 226.0 211.8 227.5 201.8 228.5 191.4 229.1 180.9 229.2 170.2 228.8 159.4 228.0 148.7 226.7 138.1 225.0 127.6 222.9 117.5 220.3 107.7 217.3 98.3 214.0 89.4 210.3 81.1 206.2 73.3 201.9 66.3 197.4 60.0 192.6 54.5 187.6 49.8 182.5 46.0 177.2 43.1 171.9 41.1 166.6 40.0 161.3 39.8 156.0 40.6 150.8M285.4 185.2L283.2 189.8 280.2 194.3 276.2 198.6 271.4 202.6 265.7 206.4 259.3 209.9 252.1 213.1 244.3 215.9 235.8 218.3 226.8 220.4 217.3 222.1 207.4 223.4 197.1 224.2 186.6 224.6 175.9 224.6 165.1 224.2 154.3 223.3 143.6 222.0 133.0 220.3 122.6 218.2 112.5 215.7 102.9 212.9 93.6 209.7 85.0 206.2 76.9 202.4 69.4 198.3 62.7 194.0 56.7 189.5 51.6 184.9 47.3 180.1 43.8 175.2 41.3 170.3 39.7 165.4 39.1 160.4 39.4 155.6 40.6 150.8M285.4 185.2L282.9 189.2 279.4 193.1 275.1 196.8 269.9 200.2 263.9 203.4 257.1 206.4 249.7 209.0 241.5 211.3 232.8 213.3 223.5 215.0 213.8 216.3 203.7 217.2 193.2 217.8 182.6 218.0 171.8 217.8 160.9 217.2 150.0 216.2 139.3 214.9 128.7 213.2 118.4 211.2 108.4 208.9 98.8 206.2 89.8 203.2 81.2 200.0 73.4 196.6 66.1 192.9 59.7 189.0 54.0 185.0 49.1 180.8 45.1 176.6 42.0 172.2 39.9 167.9 38.6 163.5 38.3 159.2 39.0 155.0 40.6 150.8M285.4 185.2L282.6 188.4 278.9 191.5 274.3 194.4 268.8 197.1 262.5 199.6 255.5 201.8 247.8 203.8 239.4 205.5 230.5 206.9 221.0 208.0 211.1 208.8 200.8 209.3 190.3 209.5 179.5 209.4 168.6 208.9 157.7 208.2 146.8 207.1 136.0 205.8 125.5 204.1 115.2 202.2 105.3 200.0 95.8 197.6 86.8 195.0 78.4 192.1 70.7 189.1 63.7 185.9 57.4 182.5 51.9 179.1 47.3 175.6 43.5 172.0 40.7 168.4 38.7 164.8 37.8 161.2 37.8 157.6 38.7 154.2 40.6 150.8M285.4 185.2L282.4 187.5 278.5 189.6 273.7 191.6 268.1 193.4 261.7 195.0 254.5 196.4 246.6 197.6 238.1 198.5 229.0 199.2 219.4 199.7 209.4 200.0 199.1 200.0 188.4 199.7 177.6 199.2 166.6 198.5 155.7 197.5 144.7 196.4 134.0 195.0 123.4 193.4 113.1 191.6 103.3 189.6 93.8 187.5 84.9 185.2 76.6 182.8 69.0 180.2 62.1 177.6 55.9 174.9 50.6 172.2 46.1 169.4 42.5 166.6 39.8 163.8 38.0 161.1 37.2 158.4 37.4 155.7 38.5 153.2 40.6 150.8M285.4 185.2L282.3 186.4 278.4 187.5 273.5 188.5 267.8 189.3 261.3 189.9 254.1 190.4 246.2 190.7 237.6 190.8 228.5 190.8 218.8 190.5 208.8 190.2 198.4 189.6 187.7 188.9 176.8 188.0 165.9 186.9 154.9 185.8 143.9 184.4 133.2 183.0 122.6 181.4 112.4 179.8 102.5 178.0 93.1 176.2 84.2 174.3 76.0 172.4 68.3 170.4 61.5 168.4 55.3 166.4 50.0 164.5 45.6 162.5 42.1 160.6 39.4 158.7 37.8 157.0 37.0 155.3 37.3 153.7 38.5 152.2 40.6 150.8M285.4 185.2L282.4 185.3 278.5 185.4 273.6 185.2 268.0 185.0 261.5 184.6 254.3 184.1 246.4 183.5 237.9 182.7 228.8 181.8 219.2 180.9 209.2 179.8 198.8 178.7 188.2 177.4 177.3 176.1 166.4 174.7 155.4 173.3 144.5 171.9 133.7 170.4 123.1 168.9 112.9 167.3 103.0 165.8 93.6 164.3 84.7 162.9 76.4 161.5 68.8 160.1 61.8 158.8 55.7 157.5 50.4 156.3 45.9 155.3 42.3 154.3 39.7 153.4 37.9 152.6 37.2 152.0 37.4 151.5 38.5 151.1 40.6 150.8M285.4 185.2L282.5 184.2 278.8 183.1 274.1 181.9 268.6 180.6 262.3 179.2 255.2 177.7 247.5 176.1 239.1 174.5 230.1 172.8 220.6 171.1 210.7 169.4 200.4 167.6 189.8 165.9 179.0 164.1 168.1 162.4 157.1 160.8 146.2 159.2 135.5 157.6 124.9 156.2 114.6 154.8 104.7 153.5 95.3 152.4 86.3 151.3 77.9 150.4 70.2 149.6 63.2 149.0 57.0 148.5 51.5 148.2 46.9 148.0 43.2 147.9 40.4 148.0 38.6 148.3 37.6 148.7 37.7 149.3 38.7 150.0 40.6 150.8M285.4 185.2L282.8 183.2 279.3 181.0 274.9 178.8 269.6 176.4 263.6 174.0 256.7 171.6 249.2 169.1 241.0 166.6 232.2 164.2 222.9 161.7 213.1 159.3 202.9 157.0 192.5 154.8 181.8 152.6 171.0 150.6 160.1 148.7 149.2 146.9 138.5 145.4 127.9 143.9 117.6 142.7 107.6 141.7 98.1 140.8 89.0 140.2 80.5 139.8 72.7 139.6 65.5 139.6 59.1 139.8 53.5 140.3 48.6 140.9 44.7 141.8 41.7 142.8 39.6 144.1 38.4 145.5 38.2 147.1 38.9 148.9 40.6 150.8M285.4 185.2L283.2 182.2 280.0 179.1 275.9 175.8 271.0 172.6 265.3 169.3 258.8 165.9 251.5 162.6 243.6 159.4 235.1 156.2 226.0 153.1 216.4 150.1 206.5 147.2 196.2 144.5 185.6 142.0 174.9 139.7 164.1 137.6 153.3 135.7 142.5 134.1 131.9 132.7 121.6 131.6 111.5 130.8 101.9 130.2 92.7 130.0 84.1 130.0 76.0 130.3 68.6 130.9 62.0 131.8 56.1 133.0 51.0 134.4 46.7 136.1 43.4 138.1 41.0 140.2 39.5 142.6 38.9 145.2 39.3 147.9 40.6 150.8M285.4 185.2L283.6 181.3 280.9 177.3 277.2 173.3 272.7 169.2 267.4 165.1 261.2 161.0 254.4 157.0 246.8 153.1 238.6 149.2 229.8 145.6 220.5 142.0 210.8 138.7 200.7 135.6 190.3 132.8 179.7 130.2 169.0 127.9 158.2 125.9 147.5 124.3 136.9 122.9 126.5 121.9 116.3 121.3 106.5 121.0 97.2 121.1 88.4 121.5 80.1 122.3 72.4 123.4 65.5 124.9 59.3 126.7 53.8 128.8 49.2 131.2 45.5 133.9 42.7 136.9 40.7 140.1 39.8 143.5 39.7 147.0 40.6 150.8M285.4 185.2L284.1 180.6 281.8 176.0 278.7 171.3 274.6 166.5 269.8 161.8 264.1 157.1 257.6 152.5 250.4 148.0 242.6 143.7 234.1 139.5 225.1 135.6 215.6 131.9 205.8 128.5 195.6 125.4 185.1 122.6 174.5 120.1 163.8 118.1 153.1 116.4 142.5 115.1 132.0 114.2 121.8 113.7 111.8 113.6 102.3 113.9 93.2 114.7 84.7 115.8 76.7 117.4 69.5 119.3 62.9 121.6 57.1 124.3 52.0 127.3 47.9 130.6 44.6 134.2 42.2 138.0 40.7 142.1 40.2 146.4 40.6 150.8M285.4 185.2L284.6 180.1 282.9 175.0 280.3 169.8 276.7 164.6 272.3 159.4 267.1 154.3 261.1 149.2 254.3 144.4 246.9 139.7 238.8 135.2 230.1 131.0 220.9 127.0 211.3 123.4 201.3 120.1 191.0 117.1 180.5 114.6 169.9 112.4 159.2 110.7 148.5 109.4 138.0 108.6 127.6 108.2 117.6 108.3 107.8 108.8 98.5 109.8 89.7 111.2 81.4 113.1 73.7 115.3 66.8 118.0 60.5 121.1 55.1 124.5 50.4 128.2 46.7 132.2 43.8 136.6 41.8 141.1 40.7 145.9 40.6 150.8M285.4 185.2L285.2 179.9 284.0 174.5 281.9 169.0 278.9 163.5 275.0 158.1 270.2 152.7 264.7 147.4 258.3 142.4 251.3 137.5 243.5 132.8 235.2 128.4 226.3 124.3 216.9 120.5 207.1 117.1 197.0 114.1 186.6 111.5 176.1 109.3 165.4 107.6 154.7 106.3 144.1 105.5 133.7 105.2 123.4 105.4 113.5 106.0 103.9 107.1 94.8 108.7 86.2 110.7 78.2 113.1 70.8 116.0 64.1 119.3 58.2 122.9 53.1 126.9 48.8 131.2 45.4 135.7 42.9 140.6 41.3 145.6 40.6 150.8M285.4 185.2L285.7 179.8 285.0 174.4 283.5 168.9 281.0 163.3 277.6 157.9 273.3 152.4 268.2 147.2 262.3 142.0 255.6 137.1 248.2 132.4 240.2 128.0 231.6 123.9 222.5 120.1 212.9 116.7 202.9 113.6 192.7 111.0 182.2 108.8 171.6 107.1 160.9 105.8 150.2 105.0 139.6 104.7 129.2 104.9 119.0 105.5 109.2 106.7 99.8 108.2 90.9 110.3 82.5 112.8 74.7 115.7 67.6 119.0 61.3 122.7 55.7 126.7 50.9 131.0 47.0 135.6 43.9 140.5 41.8 145.6 40.6 150.8M285.4 185.2L286.2 180.0 286.0 174.7 284.9 169.4 282.9 164.1 280.0 158.8 276.2 153.5 271.5 148.4 266.0 143.4 259.7 138.6 252.7 134.1 244.9 129.8 236.6 125.7 227.7 122.0 218.3 118.7 208.5 115.7 198.4 113.1 187.9 111.0 177.3 109.3 166.6 108.0 155.8 107.2 145.1 106.8 134.6 106.9 124.2 107.5 114.2 108.5 104.5 110.0 95.3 111.9 86.6 114.3 78.4 117.1 70.9 120.2 64.1 123.7 58.1 127.6 52.9 131.7 48.5 136.2 44.9 140.9 42.3 145.7 40.6 150.8M285.4 185.2L286.6 180.4 286.9 175.6 286.3 170.6 284.7 165.7 282.2 160.8 278.7 155.9 274.4 151.1 269.3 146.5 263.3 142.0 256.6 137.7 249.1 133.6 241.0 129.8 232.4 126.3 223.1 123.1 213.5 120.3 203.4 117.8 193.0 115.7 182.4 114.0 171.7 112.7 160.9 111.8 150.1 111.4 139.4 111.4 128.9 111.8 118.6 112.6 108.7 113.9 99.2 115.6 90.2 117.7 81.7 120.1 73.9 122.9 66.7 126.1 60.3 129.6 54.6 133.4 49.8 137.4 45.8 141.7 42.8 146.2 40.6 150.8M285.4 185.2L287.0 181.0 287.7 176.8 287.4 172.5 286.1 168.1 284.0 163.8 280.9 159.4 276.9 155.2 272.0 151.0 266.3 147.0 259.9 143.1 252.6 139.4 244.8 136.0 236.2 132.8 227.2 129.8 217.6 127.1 207.6 124.8 197.3 122.8 186.7 121.1 176.0 119.8 165.1 118.8 154.2 118.2 143.4 118.0 132.8 118.2 122.3 118.8 112.2 119.7 102.5 121.0 93.2 122.7 84.5 124.7 76.3 127.0 68.9 129.6 62.1 132.6 56.1 135.8 50.9 139.2 46.6 142.9 43.1 146.8 40.6 150.8M285.4 185.2L287.3 181.8 288.2 178.4 288.2 174.8 287.3 171.2 285.3 167.6 282.5 164.0 278.7 160.4 274.1 156.9 268.6 153.5 262.3 150.1 255.3 146.9 247.6 143.9 239.2 141.0 230.2 138.4 220.7 136.0 210.8 133.8 200.5 131.9 190.0 130.2 179.2 128.9 168.3 127.8 157.4 127.1 146.5 126.6 135.7 126.5 125.2 126.7 114.9 127.2 105.0 128.0 95.5 129.1 86.6 130.5 78.2 132.2 70.5 134.2 63.5 136.4 57.2 138.9 51.7 141.6 47.1 144.5 43.4 147.6 40.6 150.8M285.4 185.2L287.5 182.8 288.6 180.3 288.8 177.6 288.0 174.9 286.2 172.2 283.5 169.4 279.9 166.6 275.4 163.8 270.1 161.1 263.9 158.4 257.0 155.8 249.4 153.2 241.1 150.8 232.2 148.5 222.7 146.4 212.9 144.4 202.6 142.6 192.0 141.0 181.3 139.6 170.3 138.5 159.4 137.5 148.4 136.8 137.6 136.3 126.9 136.0 116.6 136.0 106.6 136.3 97.0 136.8 87.9 137.5 79.4 138.4 71.5 139.6 64.3 141.0 57.9 142.6 52.3 144.4 47.5 146.4 43.6 148.5 40.6 150.8M285.4 185.2L287.5 183.8 288.7 182.3 289.0 180.7 288.2 179.0 286.6 177.3 283.9 175.4 280.4 173.5 276.0 171.5 270.7 169.6 264.5 167.6 257.7 165.6 250.0 163.6 241.8 161.7 232.9 159.8 223.5 158.0 213.6 156.2 203.4 154.6 192.8 153.0 182.1 151.6 171.1 150.2 160.1 149.1 149.2 148.0 138.3 147.1 127.6 146.4 117.2 145.8 107.2 145.5 97.5 145.2 88.4 145.2 79.8 145.3 71.9 145.6 64.7 146.1 58.2 146.7 52.5 147.5 47.6 148.5 43.7 149.6 40.6 150.8M285.4 185.2L287.5 184.9 288.6 184.5 288.8 184.0 288.1 183.4 286.3 182.6 283.7 181.7 280.1 180.7 275.6 179.7 270.3 178.5 264.2 177.2 257.2 175.9 249.6 174.5 241.3 173.1 232.4 171.7 223.0 170.2 213.1 168.7 202.9 167.1 192.3 165.6 181.5 164.1 170.6 162.7 159.6 161.3 148.7 159.9 137.8 158.6 127.2 157.3 116.8 156.2 106.8 155.1 97.2 154.2 88.1 153.3 79.6 152.5 71.7 151.9 64.5 151.4 58.0 151.0 52.4 150.8 47.5 150.6 43.6 150.7 40.6 150.8M285.4 185.2L287.3 186.0 288.3 186.7 288.4 187.3 287.4 187.7 285.6 188.0 282.8 188.1 279.1 188.0 274.5 187.8 269.0 187.5 262.8 187.0 255.8 186.4 248.1 185.6 239.7 184.7 230.7 183.6 221.3 182.5 211.4 181.2 201.1 179.8 190.5 178.4 179.8 176.8 168.9 175.2 157.9 173.6 147.0 171.9 136.2 170.1 125.6 168.4 115.3 166.6 105.4 164.9 95.9 163.2 86.9 161.5 78.5 159.9 70.8 158.3 63.7 156.8 57.4 155.4 51.9 154.1 47.2 152.9 43.5 151.8 40.6 150.8M285.4 185.2L287.1 187.1 287.8 188.9 287.6 190.5 286.4 191.9 284.3 193.2 281.3 194.2 277.4 195.1 272.5 195.7 266.9 196.2 260.5 196.4 253.3 196.4 245.5 196.2 237.0 195.8 227.9 195.2 218.4 194.3 208.4 193.3 198.1 192.1 187.5 190.6 176.8 189.1 165.9 187.3 155.0 185.4 144.2 183.4 133.5 181.2 123.1 179.0 112.9 176.7 103.1 174.3 93.8 171.8 85.0 169.4 76.8 166.9 69.3 164.4 62.4 162.0 56.4 159.6 51.1 157.2 46.7 155.0 43.2 152.8 40.6 150.8M285.4 185.2L286.7 188.1 287.1 190.8 286.5 193.4 285.0 195.8 282.6 197.9 279.3 199.9 275.0 201.6 269.9 203.0 264.0 204.2 257.4 205.1 250.0 205.7 241.9 206.0 233.3 206.0 224.1 205.8 214.5 205.2 204.4 204.4 194.1 203.3 183.5 201.9 172.7 200.3 161.9 198.4 151.1 196.3 140.4 194.0 129.8 191.5 119.5 188.8 109.6 185.9 100.0 182.9 90.9 179.8 82.4 176.6 74.5 173.4 67.2 170.1 60.7 166.7 55.0 163.4 50.1 160.2 46.0 156.9 42.8 153.8 40.6 150.8M285.4 185.2L286.3 189.0 286.2 192.5 285.3 195.9 283.3 199.1 280.5 202.1 276.8 204.8 272.2 207.2 266.7 209.3 260.5 211.1 253.6 212.6 245.9 213.7 237.6 214.5 228.8 214.9 219.5 215.0 209.7 214.7 199.5 214.1 189.1 213.1 178.5 211.7 167.8 210.1 157.0 208.1 146.3 205.8 135.7 203.2 125.3 200.4 115.2 197.3 105.5 194.0 96.2 190.4 87.4 186.8 79.2 182.9 71.6 179.0 64.8 175.0 58.6 170.9 53.3 166.8 48.8 162.7 45.1 158.7 42.4 154.7 40.6 150.8M285.4 185.2L285.8 189.6 285.3 193.9 283.8 198.0 281.4 201.8 278.1 205.4 274.0 208.7 268.9 211.7 263.1 214.4 256.5 216.7 249.3 218.6 241.3 220.2 232.8 221.3 223.7 222.1 214.2 222.4 204.2 222.3 194.0 221.8 183.5 220.9 172.9 219.6 162.2 217.9 151.5 215.9 140.9 213.4 130.4 210.6 120.2 207.5 110.4 204.1 100.9 200.4 91.9 196.5 83.4 192.3 75.6 188.0 68.4 183.5 61.9 178.9 56.2 174.2 51.4 169.5 47.3 164.7 44.2 160.0 41.9 155.4 40.6 150.8M285.4 185.2L285.3 190.1 284.2 194.9 282.2 199.4 279.3 203.8 275.6 207.8 270.9 211.5 265.5 214.9 259.2 218.0 252.3 220.7 244.6 222.9 236.3 224.8 227.5 226.2 218.2 227.2 208.4 227.7 198.4 227.8 188.0 227.4 177.5 226.6 166.8 225.3 156.1 223.6 145.5 221.4 135.0 218.9 124.7 215.9 114.7 212.6 105.1 209.0 95.9 205.0 87.2 200.8 79.1 196.3 71.7 191.6 64.9 186.8 58.9 181.7 53.7 176.6 49.3 171.4 45.7 166.2 43.1 161.0 41.4 155.9 40.6 150.8M285.4 185.2L284.7 190.4 283.1 195.4 280.6 200.3 277.2 204.8 272.9 209.1 267.8 213.1 261.9 216.7 255.2 220.0 247.8 222.9 239.8 225.3 231.2 227.3 222.1 228.9 212.5 230.0 202.6 230.6 192.3 230.8 181.9 230.5 171.3 229.7 160.6 228.4 149.9 226.7 139.4 224.5 129.0 221.9 118.9 218.9 109.1 215.5 99.7 211.7 90.8 207.6 82.5 203.2 74.7 198.5 67.7 193.6 61.3 188.6 55.8 183.3 51.0 177.9 47.1 172.5 44.1 167.0 42.0 161.5 40.8 156.1 40.6 150.8" fill="none" stroke="#cbcbcb" stroke-width="0.6"/><path d="M262.8 175.1L262.8 174.8 263.1 174.5 263.5 174.2 264.0 174.0 264.6 173.8 265.4 173.6 266.2 173.5 267.0 173.5 267.8 173.5 268.6 173.6 269.4 173.8 270.0 174.0 270.5 174.2 270.9 174.5 271.2 174.8 271.2 175.1 271.2 175.4 270.9 175.7 270.5 176.0 270.0 176.2 269.4 176.4 268.6 176.6 267.8 176.6 267.0 176.7 266.2 176.6 265.4 176.6 264.6 176.4 264.0 176.2 263.5 176.0 263.1 175.7 262.8 175.4 262.8 175.1M258.5 174.2L258.7 173.6 259.2 173.0 260.0 172.4 261.0 171.9 262.3 171.5 263.8 171.2 265.3 171.1 267.0 171.0 268.7 171.1 270.2 171.2 271.7 171.5 273.0 171.9 274.0 172.4 274.8 173.0 275.3 173.6 275.5 174.2 275.3 174.8 274.8 175.4 274.0 175.9 273.0 176.4 271.7 176.8 270.2 177.1 268.7 177.3 267.0 177.3 265.3 177.3 263.8 177.1 262.3 176.8 261.0 176.4 260.0 175.9 259.2 175.4 258.7 174.8 258.5 174.2M254.4 172.7L254.6 171.7 255.3 170.9 256.5 170.0 258.1 169.3 260.0 168.7 262.2 168.3 264.5 168.0 267.0 167.9 269.5 168.0 271.8 168.3 274.0 168.7 275.9 169.3 277.5 170.0 278.7 170.9 279.4 171.7 279.6 172.7 279.4 173.6 278.7 174.5 277.5 175.3 275.9 176.0 274.0 176.6 271.8 177.0 269.5 177.3 267.0 177.4 264.5 177.3 262.2 177.0 260.0 176.6 258.1 176.0 256.5 175.3 255.3 174.5 254.6 173.6 254.4 172.7M250.3 170.6L250.6 169.4 251.6 168.2 253.1 167.1 255.2 166.1 257.7 165.4 260.6 164.8 263.7 164.4 267.0 164.3 270.3 164.4 273.4 164.8 276.3 165.4 278.8 166.1 280.9 167.1 282.4 168.2 283.4 169.4 283.7 170.6 283.4 171.8 282.4 173.0 280.9 174.1 278.8 175.0 276.3 175.8 273.4 176.4 270.3 176.7 267.0 176.8 263.7 176.7 260.6 176.4 257.7 175.8 255.2 175.0 253.1 174.1 251.6 173.0 250.6 171.8 250.3 170.6M246.3 167.9L246.7 166.4 247.9 164.9 249.8 163.6 252.4 162.4 255.5 161.5 259.1 160.7 263.0 160.3 267.0 160.2 271.0 160.3 274.9 160.7 278.5 161.5 281.6 162.4 284.2 163.6 286.1 164.9 287.3 166.4 287.7 167.9 287.3 169.4 286.1 170.9 284.2 172.2 281.6 173.4 278.5 174.4 274.9 175.1 271.0 175.5 267.0 175.7 263.0 175.5 259.1 175.1 255.5 174.4 252.4 173.4 249.8 172.2 247.9 170.9 246.7 169.4 246.3 167.9M242.5 164.7L242.9 162.9 244.3 161.2 246.6 159.6 249.7 158.2 253.4 157.1 257.6 156.2 262.2 155.7 267.0 155.5 271.8 155.7 276.4 156.2 280.6 157.1 284.3 158.2 287.4 159.6 289.7 161.2 291.1 162.9 291.5 164.7 291.1 166.5 289.7 168.2 287.4 169.8 284.3 171.2 280.6 172.3 276.4 173.2 271.8 173.7 267.0 173.9 262.2 173.7 257.6 173.2 253.4 172.3 249.7 171.2 246.6 169.8 244.3 168.2 242.9 166.5 242.5 164.7M238.8 161.0L239.3 158.9 240.9 156.9 243.5 155.1 247.1 153.5 251.3 152.2 256.2 151.2 261.5 150.6 267.0 150.4 272.5 150.6 277.8 151.2 282.7 152.2 286.9 153.5 290.5 155.1 293.1 156.9 294.7 158.9 295.2 161.0 294.7 163.0 293.1 165.0 290.5 166.8 286.9 168.4 282.7 169.8 277.8 170.7 272.5 171.3 267.0 171.5 261.5 171.3 256.2 170.7 251.3 169.8 247.1 168.4 243.5 166.8 240.9 165.0 239.3 163.0 238.8 161.0M235.3 156.8L235.9 154.4 237.7 152.2 240.6 150.2 244.6 148.4 249.4 146.9 254.9 145.8 260.8 145.1 267.0 144.9 273.2 145.1 279.1 145.8 284.6 146.9 289.4 148.4 293.4 150.2 296.3 152.2 298.1 154.4 298.7 156.8 298.1 159.1 296.3 161.3 293.4 163.4 289.4 165.2 284.6 166.6 279.1 167.7 273.2 168.4 267.0 168.6 260.8 168.4 254.9 167.7 249.4 166.6 244.6 165.2 240.6 163.4 237.7 161.3 235.9 159.1 235.3 156.8M232.0 152.1L232.7 149.5 234.7 147.1 237.9 144.8 242.3 142.8 247.6 141.2 253.6 140.0 260.2 139.3 267.0 139.0 273.8 139.3 280.4 140.0 286.4 141.2 291.7 142.8 296.1 144.8 299.3 147.1 301.3 149.5 302.0 152.1 301.3 154.7 299.3 157.1 296.1 159.4 291.7 161.4 286.4 163.0 280.4 164.2 273.8 164.9 267.0 165.2 260.2 164.9 253.6 164.2 247.6 163.0 242.3 161.4 237.9 159.4 234.7 157.1 232.7 154.7 232.0 152.1M229.0 147.0L229.8 144.2 231.9 141.6 235.4 139.1 240.1 137.0 245.9 135.2 252.5 133.9 259.6 133.1 267.0 132.8 274.4 133.1 281.5 133.9 288.1 135.2 293.9 137.0 298.6 139.1 302.1 141.6 304.2 144.2 305.0 147.0 304.2 149.8 302.1 152.5 298.6 154.9 293.9 157.1 288.1 158.9 281.5 160.2 274.4 161.0 267.0 161.3 259.6 161.0 252.5 160.2 245.9 158.9 240.1 157.1 235.4 154.9 231.9 152.5 229.8 149.8 229.0 147.0M226.3 141.6L227.1 138.6 229.4 135.7 233.1 133.1 238.2 130.8 244.4 128.9 251.4 127.5 259.1 126.6 267.0 126.3 274.9 126.6 282.6 127.5 289.6 128.9 295.8 130.8 300.9 133.1 304.6 135.7 306.9 138.6 307.7 141.6 306.9 144.6 304.6 147.4 300.9 150.1 295.8 152.4 289.6 154.3 282.6 155.7 274.9 156.5 267.0 156.8 259.1 156.5 251.4 155.7 244.4 154.3 238.2 152.4 233.1 150.1 229.4 147.4 227.1 144.6 226.3 141.6M223.8 135.8L224.7 132.7 227.1 129.6 231.1 126.8 236.5 124.4 243.0 122.4 250.5 120.9 258.6 120.0 267.0 119.7 275.4 120.0 283.5 120.9 291.0 122.4 297.5 124.4 302.9 126.8 306.9 129.6 309.3 132.7 310.2 135.8 309.3 139.0 306.9 142.0 302.9 144.8 297.5 147.3 291.0 149.3 283.5 150.8 275.4 151.7 267.0 152.0 258.6 151.7 250.5 150.8 243.0 149.3 236.5 147.3 231.1 144.8 227.1 142.0 224.7 139.0 223.8 135.8M221.7 129.8L222.6 126.5 225.2 123.3 229.4 120.4 235.0 117.8 241.8 115.7 249.7 114.1 258.2 113.2 267.0 112.8 275.8 113.2 284.3 114.1 292.2 115.7 299.0 117.8 304.6 120.4 308.8 123.3 311.4 126.5 312.3 129.8 311.4 133.1 308.8 136.3 304.6 139.2 299.0 141.8 292.2 143.9 284.3 145.5 275.8 146.4 267.0 146.8 258.2 146.4 249.7 145.5 241.8 143.9 235.0 141.8 229.4 139.2 225.2 136.3 222.6 133.1 221.7 129.8M220.0 123.5L220.9 120.1 223.5 116.8 227.9 113.7 233.7 111.1 240.9 108.9 249.0 107.3 257.8 106.3 267.0 105.9 276.2 106.3 285.0 107.3 293.1 108.9 300.3 111.1 306.1 113.7 310.5 116.8 313.1 120.1 314.0 123.5 313.1 127.0 310.5 130.3 306.1 133.3 300.3 136.0 293.1 138.2 285.0 139.8 276.2 140.8 267.0 141.2 257.8 140.8 249.0 139.8 240.9 138.2 233.7 136.0 227.9 133.3 223.5 130.3 220.9 127.0 220.0 123.5M218.6 117.1L219.5 113.6 222.3 110.2 226.7 107.0 232.8 104.3 240.1 102.0 248.5 100.4 257.6 99.3 267.0 99.0 276.4 99.3 285.5 100.4 293.9 102.0 301.2 104.3 307.3 107.0 311.7 110.2 314.5 113.6 315.4 117.1 314.5 120.7 311.7 124.1 307.3 127.2 301.2 129.9 293.9 132.2 285.5 133.9 276.4 134.9 267.0 135.3 257.6 134.9 248.5 133.9 240.1 132.2 232.8 129.9 226.7 127.2 222.3 124.1 219.5 120.7 218.6 117.1M217.6 110.6L218.5 107.0 221.3 103.5 225.9 100.3 232.1 97.5 239.5 95.2 248.1 93.5 257.4 92.4 267.0 92.1 276.6 92.4 285.9 93.5 294.5 95.2 301.9 97.5 308.1 100.3 312.7 103.5 315.5 107.0 316.4 110.6 315.5 114.2 312.7 117.7 308.1 120.9 301.9 123.7 294.5 126.0 285.9 127.7 276.6 128.7 267.0 129.1 257.4 128.7 248.1 127.7 239.5 126.0 232.1 123.7 225.9 120.9 221.3 117.7 218.5 114.2 217.6 110.6M217.0 104.0L218.0 100.3 220.8 96.8 225.4 93.6 231.6 90.8 239.2 88.4 247.9 86.7 257.2 85.6 267.0 85.3 276.8 85.6 286.1 86.7 294.8 88.4 302.4 90.8 308.6 93.6 313.2 96.8 316.0 100.3 317.0 104.0 316.0 107.7 313.2 111.2 308.6 114.4 302.4 117.2 294.8 119.6 286.1 121.3 276.8 122.4 267.0 122.7 257.2 122.4 247.9 121.3 239.2 119.6 231.6 117.2 225.4 114.4 220.8 111.2 218.0 107.7 217.0 104.0M216.8 97.4L217.8 93.7 220.7 90.2 225.3 87.0 231.5 84.1 239.1 81.8 247.8 80.1 257.2 79.0 267.0 78.6 276.8 79.0 286.2 80.1 294.9 81.8 302.5 84.1 308.7 87.0 313.3 90.2 316.2 93.7 317.2 97.4 316.2 101.1 313.3 104.6 308.7 107.9 302.5 110.7 294.9 113.0 286.2 114.8 276.8 115.8 267.0 116.2 257.2 115.8 247.8 114.8 239.1 113.0 231.5 110.7 225.3 107.9 220.7 104.6 217.8 101.1 216.8 97.4M217.1 90.9L218.1 87.2 220.9 83.7 225.5 80.5 231.7 77.7 239.3 75.3 247.9 73.6 257.3 72.6 267.0 72.2 276.7 72.6 286.1 73.6 294.7 75.3 302.3 77.7 308.5 80.5 313.1 83.7 315.9 87.2 316.9 90.9 315.9 94.5 313.1 98.0 308.5 101.3 302.3 104.1 294.7 106.4 286.1 108.1 276.7 109.2 267.0 109.6 257.3 109.2 247.9 108.1 239.3 106.4 231.7 104.1 225.5 101.3 220.9 98.0 218.1 94.5 217.1 90.9M217.9 84.5L218.8 80.9 221.6 77.4 226.1 74.2 232.2 71.4 239.7 69.2 248.2 67.5 257.4 66.4 267.0 66.1 276.6 66.4 285.8 67.5 294.3 69.2 301.8 71.4 307.9 74.2 312.4 77.4 315.2 80.9 316.1 84.5 315.2 88.1 312.4 91.5 307.9 94.7 301.8 97.5 294.3 99.8 285.8 101.5 276.6 102.5 267.0 102.9 257.4 102.5 248.2 101.5 239.7 99.8 232.2 97.5 226.1 94.7 221.6 91.5 218.8 88.1 217.9 84.5M219.0 78.2L220.0 74.7 222.7 71.3 227.1 68.2 233.1 65.5 240.3 63.3 248.6 61.6 257.6 60.6 267.0 60.2 276.4 60.6 285.4 61.6 293.7 63.3 300.9 65.5 306.9 68.2 311.3 71.3 314.0 74.7 315.0 78.2 314.0 81.7 311.3 85.1 306.9 88.2 300.9 90.9 293.7 93.2 285.4 94.8 276.4 95.8 267.0 96.2 257.6 95.8 248.6 94.8 240.3 93.2 233.1 90.9 227.1 88.2 222.7 85.1 220.0 81.7 219.0 78.2M220.6 72.2L221.5 68.8 224.2 65.5 228.5 62.5 234.2 59.9 241.2 57.7 249.3 56.1 258.0 55.1 267.0 54.8 276.0 55.1 284.7 56.1 292.8 57.7 299.8 59.9 305.5 62.5 309.8 65.5 312.5 68.8 313.4 72.2 312.5 75.6 309.8 78.8 305.5 81.8 299.8 84.5 292.8 86.6 284.7 88.2 276.0 89.2 267.0 89.5 258.0 89.2 249.3 88.2 241.2 86.6 234.2 84.5 228.5 81.8 224.2 78.8 221.5 75.6 220.6 72.2M222.7 66.4L223.6 63.2 226.1 60.1 230.2 57.2 235.7 54.7 242.4 52.6 250.0 51.1 258.4 50.1 267.0 49.8 275.6 50.1 284.0 51.1 291.6 52.6 298.3 54.7 303.8 57.2 307.9 60.1 310.4 63.2 311.3 66.4 310.4 69.7 307.9 72.8 303.8 75.6 298.3 78.2 291.6 80.2 284.0 81.7 275.6 82.7 267.0 83.0 258.4 82.7 250.0 81.7 242.4 80.2 235.7 78.2 230.2 75.6 226.1 72.8 223.6 69.7 222.7 66.4M225.2 61.0L226.0 57.9 228.4 55.0 232.2 52.3 237.4 49.9 243.8 47.9 251.0 46.5 258.8 45.6 267.0 45.3 275.2 45.6 283.0 46.5 290.2 47.9 296.6 49.9 301.8 52.3 305.6 55.0 308.0 57.9 308.8 61.0 308.0 64.0 305.6 67.0 301.8 69.7 296.6 72.1 290.2 74.0 283.0 75.5 275.2 76.3 267.0 76.6 258.8 76.3 251.0 75.5 243.8 74.0 237.4 72.1 232.2 69.7 228.4 67.0 226.0 64.0 225.2 61.0M228.1 55.9L228.8 53.1 231.0 50.3 234.6 47.8 239.5 45.6 245.4 43.8 252.1 42.4 259.4 41.6 267.0 41.3 274.6 41.6 281.9 42.4 288.6 43.8 294.5 45.6 299.4 47.8 303.0 50.3 305.2 53.1 305.9 55.9 305.2 58.7 303.0 61.5 299.4 64.0 294.5 66.2 288.6 68.0 281.9 69.4 274.6 70.2 267.0 70.5 259.4 70.2 252.1 69.4 245.4 68.0 239.5 66.2 234.6 64.0 231.0 61.5 228.8 58.7 228.1 55.9M231.3 51.2L232.0 48.6 234.0 46.1 237.3 43.8 241.8 41.8 247.2 40.1 253.3 38.9 260.0 38.1 267.0 37.9 274.0 38.1 280.7 38.9 286.8 40.1 292.2 41.8 296.7 43.8 300.0 46.1 302.0 48.6 302.7 51.2 302.0 53.8 300.0 56.4 296.7 58.7 292.2 60.7 286.8 62.4 280.7 63.6 274.0 64.3 267.0 64.6 260.0 64.3 253.3 63.6 247.2 62.4 241.8 60.7 237.3 58.7 234.0 56.4 232.0 53.8 231.3 51.2M234.9 47.0L235.6 44.7 237.4 42.4 240.3 40.4 244.3 38.5 249.2 37.0 254.7 35.9 260.7 35.2 267.0 35.0 273.3 35.2 279.3 35.9 284.8 37.0 289.7 38.5 293.7 40.4 296.6 42.4 298.4 44.7 299.1 47.0 298.4 49.4 296.6 51.6 293.7 53.7 289.7 55.5 284.8 57.0 279.3 58.1 273.3 58.8 267.0 59.0 260.7 58.8 254.7 58.1 249.2 57.0 244.3 55.5 240.3 53.7 237.4 51.6 235.6 49.4 234.9 47.0M238.9 43.3L239.4 41.2 241.0 39.3 243.6 37.4 247.1 35.9 251.4 34.5 256.2 33.6 261.5 33.0 267.0 32.8 272.5 33.0 277.8 33.6 282.6 34.5 286.9 35.9 290.4 37.4 293.0 39.3 294.6 41.2 295.1 43.3 294.6 45.4 293.0 47.3 290.4 49.2 286.9 50.7 282.6 52.1 277.8 53.0 272.5 53.6 267.0 53.8 261.5 53.6 256.2 53.0 251.4 52.1 247.1 50.7 243.6 49.2 241.0 47.3 239.4 45.4 238.9 43.3M243.1 40.1L243.6 38.3 244.9 36.7 247.1 35.1 250.1 33.8 253.7 32.7 257.9 31.8 262.3 31.3 267.0 31.1 271.7 31.3 276.1 31.8 280.3 32.7 283.9 33.8 286.9 35.1 289.1 36.7 290.4 38.3 290.9 40.1 290.4 41.8 289.1 43.5 286.9 45.1 283.9 46.4 280.3 47.5 276.1 48.4 271.7 48.9 267.0 49.0 262.3 48.9 257.9 48.4 253.7 47.5 250.1 46.4 247.1 45.1 244.9 43.5 243.6 41.8 243.1 40.1M247.6 37.4L248.0 36.0 249.1 34.6 250.9 33.4 253.3 32.3 256.2 31.4 259.6 30.7 263.2 30.3 267.0 30.2 270.8 30.3 274.4 30.7 277.8 31.4 280.7 32.3 283.1 33.4 284.9 34.6 286.0 36.0 286.4 37.4 286.0 38.8 284.9 40.2 283.1 41.5 280.7 42.6 277.8 43.5 274.4 44.1 270.8 44.6 267.0 44.7 263.2 44.6 259.6 44.1 256.2 43.5 253.3 42.6 250.9 41.5 249.1 40.2 248.0 38.8 247.6 37.4M252.3 35.3L252.5 34.3 253.4 33.2 254.7 32.3 256.6 31.4 258.8 30.7 261.4 30.2 264.1 29.9 267.0 29.8 269.9 29.9 272.6 30.2 275.2 30.7 277.4 31.4 279.3 32.3 280.6 33.2 281.5 34.3 281.7 35.3 281.5 36.4 280.6 37.4 279.3 38.4 277.4 39.2 275.2 39.9 272.6 40.4 269.9 40.7 267.0 40.9 264.1 40.7 261.4 40.4 258.8 39.9 256.6 39.2 254.7 38.4 253.4 37.4 252.5 36.4 252.3 35.3M257.1 33.8L257.3 33.1 257.8 32.4 258.8 31.8 260.0 31.2 261.5 30.7 263.2 30.4 265.1 30.2 267.0 30.1 268.9 30.2 270.8 30.4 272.5 30.7 274.0 31.2 275.2 31.8 276.2 32.4 276.7 33.1 276.9 33.8 276.7 34.5 276.2 35.2 275.2 35.9 274.0 36.4 272.5 36.9 270.8 37.3 268.9 37.5 267.0 37.5 265.1 37.5 263.2 37.3 261.5 36.9 260.0 36.4 258.8 35.9 257.8 35.2 257.3 34.5 257.1 33.8M262.0 32.9L262.1 32.5 262.4 32.2 262.9 31.9 263.5 31.6 264.2 31.4 265.1 31.2 266.0 31.1 267.0 31.0 268.0 31.1 268.9 31.2 269.8 31.4 270.5 31.6 271.1 31.9 271.6 32.2 271.9 32.5 272.0 32.9 271.9 33.3 271.6 33.6 271.1 33.9 270.5 34.2 269.8 34.5 268.9 34.6 268.0 34.7 267.0 34.8 266.0 34.7 265.1 34.6 264.2 34.5 263.5 34.2 262.9 33.9 262.4 33.6 262.1 33.3 262.0 32.9M267.0 175.4L262.5 175.0 258.0 174.0 253.6 172.3 249.3 170.0 245.1 167.0 241.1 163.4 237.2 159.2 233.6 154.5 230.3 149.3 227.3 143.7 224.6 137.7 222.2 131.3 220.3 124.7 218.7 117.9 217.6 111.0 217.0 104.0 216.9 97.0 217.2 90.1 218.0 83.3 219.4 76.7 221.2 70.3 223.6 64.3 226.4 58.7 229.6 53.5 233.3 48.8 237.4 44.6 241.8 41.0 246.5 38.0 251.4 35.7 256.5 34.0 261.7 33.0 267.0 32.6M267.0 175.4L262.5 174.9 258.1 173.6 253.7 171.8 249.4 169.2 245.2 166.0 241.2 162.3 237.4 157.9 233.9 153.1 230.5 147.8 227.5 142.0 224.8 135.9 222.5 129.4 220.6 122.8 219.0 115.9 217.9 108.9 217.3 101.9 217.2 94.9 217.5 88.0 218.3 81.2 219.7 74.7 221.5 68.4 223.9 62.5 226.6 57.0 229.9 52.0 233.5 47.4 237.6 43.4 241.9 40.0 246.6 37.2 251.5 35.0 256.5 33.5 261.7 32.7 267.0 32.6M267.0 175.4L262.6 174.7 258.2 173.3 253.9 171.2 249.7 168.5 245.6 165.1 241.7 161.2 238.0 156.7 234.5 151.7 231.2 146.2 228.3 140.4 225.6 134.1 223.3 127.6 221.4 120.8 219.9 113.9 218.9 106.9 218.3 99.8 218.1 92.8 218.4 85.9 219.3 79.2 220.6 72.7 222.4 66.5 224.7 60.7 227.4 55.3 230.6 50.4 234.2 46.0 238.1 42.2 242.4 38.9 247.0 36.3 251.8 34.4 256.7 33.1 261.8 32.5 267.0 32.6M267.0 175.4L262.7 174.5 258.5 172.9 254.3 170.7 250.3 167.8 246.3 164.3 242.5 160.2 238.9 155.5 235.5 150.4 232.4 144.8 229.5 138.7 226.9 132.4 224.7 125.8 222.9 118.9 221.4 112.0 220.4 104.9 219.8 97.8 219.7 90.8 220.0 83.9 220.8 77.2 222.1 70.8 223.8 64.7 226.0 59.0 228.7 53.7 231.7 48.9 235.2 44.6 239.0 41.0 243.2 37.9 247.6 35.5 252.3 33.7 257.1 32.7 262.0 32.3 267.0 32.6M267.0 175.4L262.9 174.3 258.9 172.6 254.9 170.1 251.0 167.1 247.3 163.4 243.6 159.1 240.2 154.4 236.9 149.1 233.9 143.3 231.2 137.2 228.8 130.8 226.7 124.0 224.9 117.1 223.5 110.1 222.5 103.0 222.0 95.9 221.8 88.9 222.1 82.0 222.9 75.3 224.1 68.9 225.8 62.9 227.9 57.3 230.4 52.1 233.3 47.4 236.7 43.3 240.3 39.8 244.3 36.9 248.5 34.7 252.9 33.1 257.5 32.3 262.2 32.1 267.0 32.6M267.0 175.4L263.2 174.2 259.4 172.2 255.7 169.6 252.0 166.4 248.5 162.6 245.0 158.2 241.8 153.3 238.8 147.8 235.9 142.0 233.4 135.7 231.1 129.2 229.1 122.4 227.4 115.4 226.1 108.3 225.2 101.2 224.7 94.0 224.5 87.0 224.8 80.1 225.5 73.5 226.7 67.2 228.3 61.2 230.2 55.7 232.6 50.6 235.4 46.1 238.5 42.1 241.9 38.7 245.6 36.0 249.6 33.9 253.8 32.6 258.1 31.9 262.5 31.9 267.0 32.6M267.0 175.4L263.5 174.0 260.0 171.9 256.5 169.2 253.1 165.8 249.9 161.8 246.7 157.3 243.7 152.2 240.9 146.7 238.3 140.7 235.9 134.4 233.8 127.7 232.0 120.9 230.5 113.8 229.3 106.7 228.4 99.5 227.9 92.3 227.8 85.3 228.1 78.4 228.7 71.8 229.8 65.6 231.2 59.7 233.1 54.2 235.2 49.2 237.8 44.8 240.7 40.9 243.8 37.7 247.3 35.1 250.9 33.2 254.8 32.0 258.8 31.5 262.9 31.7 267.0 32.6M267.0 175.4L263.8 173.9 260.6 171.6 257.5 168.8 254.5 165.3 251.5 161.2 248.7 156.5 246.0 151.3 243.4 145.6 241.1 139.6 238.9 133.1 237.0 126.4 235.3 119.5 234.0 112.3 232.9 105.1 232.1 97.9 231.6 90.8 231.5 83.7 231.8 76.9 232.4 70.3 233.3 64.1 234.6 58.2 236.3 52.8 238.3 48.0 240.6 43.6 243.2 39.9 246.1 36.8 249.2 34.4 252.5 32.6 256.0 31.5 259.6 31.2 263.3 31.5 267.0 32.6M267.0 175.4L264.2 173.7 261.4 171.4 258.6 168.4 256.0 164.8 253.3 160.5 250.8 155.8 248.4 150.5 246.2 144.7 244.1 138.5 242.2 132.0 240.5 125.2 239.1 118.2 237.9 111.0 236.9 103.8 236.2 96.5 235.8 89.4 235.7 82.3 235.9 75.5 236.5 68.9 237.3 62.7 238.5 56.9 239.9 51.6 241.7 46.8 243.7 42.6 246.0 38.9 248.5 36.0 251.3 33.6 254.2 32.0 257.3 31.1 260.4 30.9 263.7 31.4 267.0 32.6M267.0 175.4L264.6 173.6 262.2 171.2 259.9 168.1 257.6 164.3 255.3 160.0 253.2 155.1 251.2 149.7 249.3 143.9 247.5 137.7 245.9 131.1 244.4 124.2 243.2 117.1 242.1 109.9 241.3 102.6 240.7 95.3 240.4 88.1 240.3 81.1 240.5 74.3 241.0 67.7 241.7 61.6 242.7 55.8 243.9 50.6 245.4 45.8 247.1 41.7 249.1 38.1 251.2 35.2 253.6 33.0 256.1 31.5 258.7 30.7 261.4 30.6 264.2 31.3 267.0 32.6M267.0 175.4L265.0 173.5 263.1 171.0 261.2 167.8 259.3 164.0 257.5 159.6 255.7 154.6 254.1 149.1 252.5 143.2 251.1 136.9 249.8 130.3 248.6 123.3 247.6 116.2 246.7 109.0 246.1 101.6 245.6 94.3 245.3 87.1 245.2 80.1 245.4 73.3 245.8 66.8 246.3 60.6 247.1 54.9 248.2 49.7 249.4 45.0 250.8 40.9 252.4 37.4 254.1 34.6 256.1 32.5 258.1 31.1 260.2 30.4 262.4 30.4 264.7 31.2 267.0 32.6M267.0 175.4L265.5 173.5 264.0 170.8 262.6 167.6 261.1 163.7 259.8 159.2 258.4 154.2 257.2 148.7 256.0 142.7 254.9 136.3 253.9 129.6 253.0 122.7 252.2 115.5 251.6 108.2 251.1 100.9 250.7 93.5 250.5 86.3 250.4 79.3 250.6 72.5 250.8 66.0 251.3 59.8 251.9 54.2 252.7 49.0 253.6 44.3 254.7 40.3 255.9 36.9 257.2 34.2 258.7 32.1 260.2 30.8 261.8 30.2 263.5 30.3 265.3 31.1 267.0 32.6M267.0 175.4L266.0 173.4 265.0 170.7 264.0 167.4 263.1 163.5 262.1 159.0 261.2 153.9 260.4 148.3 259.6 142.3 258.8 135.9 258.2 129.2 257.6 122.2 257.0 115.0 256.6 107.7 256.3 100.3 256.0 93.0 255.9 85.7 255.8 78.7 255.9 71.9 256.1 65.4 256.4 59.3 256.8 53.6 257.3 48.5 258.0 43.9 258.7 39.9 259.5 36.5 260.4 33.8 261.4 31.8 262.4 30.5 263.5 30.0 264.7 30.1 265.8 31.0 267.0 32.6M267.0 175.4L266.5 173.4 266.0 170.7 265.5 167.3 265.0 163.4 264.5 158.8 264.1 153.7 263.7 148.1 263.3 142.1 262.9 135.6 262.6 128.9 262.2 121.9 262.0 114.7 261.8 107.3 261.6 100.0 261.5 92.6 261.4 85.4 261.4 78.3 261.4 71.5 261.5 65.1 261.7 59.0 261.9 53.3 262.1 48.2 262.5 43.6 262.8 39.6 263.2 36.3 263.7 33.6 264.2 31.6 264.7 30.4 265.3 29.9 265.8 30.1 266.4 31.0 267.0 32.6M267.0 175.4L267.0 173.4 267.0 170.7 267.0 167.3 267.0 163.3 267.0 158.8 267.0 153.6 267.0 148.0 267.0 142.0 267.0 135.5 267.0 128.8 267.0 121.8 267.0 114.5 267.0 107.2 267.0 99.8 267.0 92.5 267.0 85.3 267.0 78.2 267.0 71.4 267.0 64.9 267.0 58.8 267.0 53.2 267.0 48.1 267.0 43.5 267.0 39.5 267.0 36.2 267.0 33.5 267.0 31.6 267.0 30.3 267.0 29.8 267.0 30.0 267.0 31.0 267.0 32.6M267.0 175.4L267.5 173.4 268.0 170.7 268.5 167.3 269.0 163.4 269.5 158.8 269.9 153.7 270.3 148.1 270.7 142.1 271.1 135.6 271.4 128.9 271.8 121.9 272.0 114.7 272.2 107.3 272.4 100.0 272.5 92.6 272.6 85.4 272.6 78.3 272.6 71.5 272.5 65.1 272.3 59.0 272.1 53.3 271.9 48.2 271.5 43.6 271.2 39.6 270.8 36.3 270.3 33.6 269.8 31.6 269.3 30.4 268.7 29.9 268.2 30.1 267.6 31.0 267.0 32.6M267.0 175.4L268.0 173.4 269.0 170.7 270.0 167.4 270.9 163.5 271.9 159.0 272.8 153.9 273.6 148.3 274.4 142.3 275.2 135.9 275.8 129.2 276.4 122.2 277.0 115.0 277.4 107.7 277.7 100.3 278.0 93.0 278.1 85.7 278.2 78.7 278.1 71.9 277.9 65.4 277.6 59.3 277.2 53.6 276.7 48.5 276.0 43.9 275.3 39.9 274.5 36.5 273.6 33.8 272.6 31.8 271.6 30.5 270.5 30.0 269.3 30.1 268.2 31.0 267.0 32.6M267.0 175.4L268.5 173.5 270.0 170.8 271.4 167.6 272.9 163.7 274.2 159.2 275.6 154.2 276.8 148.7 278.0 142.7 279.1 136.3 280.1 129.6 281.0 122.7 281.8 115.5 282.4 108.2 282.9 100.9 283.3 93.5 283.5 86.3 283.6 79.3 283.4 72.5 283.2 66.0 282.7 59.8 282.1 54.2 281.3 49.0 280.4 44.3 279.3 40.3 278.1 36.9 276.8 34.2 275.3 32.1 273.8 30.8 272.2 30.2 270.5 30.3 268.7 31.1 267.0 32.6M267.0 175.4L269.0 173.5 270.9 171.0 272.8 167.8 274.7 164.0 276.5 159.6 278.3 154.6 279.9 149.1 281.5 143.2 282.9 136.9 284.2 130.3 285.4 123.3 286.4 116.2 287.3 109.0 287.9 101.6 288.4 94.3 288.7 87.1 288.8 80.1 288.6 73.3 288.2 66.8 287.7 60.6 286.9 54.9 285.8 49.7 284.6 45.0 283.2 40.9 281.6 37.4 279.9 34.6 277.9 32.5 275.9 31.1 273.8 30.4 271.6 30.4 269.3 31.2 267.0 32.6M267.0 175.4L269.4 173.6 271.8 171.2 274.1 168.1 276.4 164.3 278.7 160.0 280.8 155.1 282.8 149.7 284.7 143.9 286.5 137.7 288.1 131.1 289.6 124.2 290.8 117.1 291.9 109.9 292.7 102.6 293.3 95.3 293.6 88.1 293.7 81.1 293.5 74.3 293.0 67.7 292.3 61.6 291.3 55.8 290.1 50.6 288.6 45.8 286.9 41.7 284.9 38.1 282.8 35.2 280.4 33.0 277.9 31.5 275.3 30.7 272.6 30.6 269.8 31.3 267.0 32.6M267.0 175.4L269.8 173.7 272.6 171.4 275.4 168.4 278.0 164.8 280.7 160.5 283.2 155.8 285.6 150.5 287.8 144.7 289.9 138.5 291.8 132.0 293.5 125.2 294.9 118.2 296.1 111.0 297.1 103.8 297.8 96.5 298.2 89.4 298.3 82.3 298.1 75.5 297.5 68.9 296.7 62.7 295.5 56.9 294.1 51.6 292.3 46.8 290.3 42.6 288.0 38.9 285.5 36.0 282.7 33.6 279.8 32.0 276.7 31.1 273.6 30.9 270.3 31.4 267.0 32.6M267.0 175.4L270.2 173.9 273.4 171.6 276.5 168.8 279.5 165.3 282.5 161.2 285.3 156.5 288.0 151.3 290.6 145.6 292.9 139.6 295.1 133.1 297.0 126.4 298.7 119.5 300.0 112.3 301.1 105.1 301.9 97.9 302.4 90.8 302.5 83.7 302.2 76.9 301.6 70.3 300.7 64.1 299.4 58.2 297.7 52.8 295.7 48.0 293.4 43.6 290.8 39.9 287.9 36.8 284.8 34.4 281.5 32.6 278.0 31.5 274.4 31.2 270.7 31.5 267.0 32.6M267.0 175.4L270.5 174.0 274.0 171.9 277.5 169.2 280.9 165.8 284.1 161.8 287.3 157.3 290.3 152.2 293.1 146.7 295.7 140.7 298.1 134.4 300.2 127.7 302.0 120.9 303.5 113.8 304.7 106.7 305.6 99.5 306.1 92.3 306.2 85.3 305.9 78.4 305.3 71.8 304.2 65.6 302.8 59.7 300.9 54.2 298.8 49.2 296.2 44.8 293.3 40.9 290.2 37.7 286.7 35.1 283.1 33.2 279.2 32.0 275.2 31.5 271.1 31.7 267.0 32.6M267.0 175.4L270.8 174.2 274.6 172.2 278.3 169.6 282.0 166.4 285.5 162.6 289.0 158.2 292.2 153.3 295.2 147.8 298.1 142.0 300.6 135.7 302.9 129.2 304.9 122.4 306.6 115.4 307.9 108.3 308.8 101.2 309.3 94.0 309.5 87.0 309.2 80.1 308.5 73.5 307.3 67.2 305.7 61.2 303.8 55.7 301.4 50.6 298.6 46.1 295.5 42.1 292.1 38.7 288.4 36.0 284.4 33.9 280.2 32.6 275.9 31.9 271.5 31.9 267.0 32.6M267.0 175.4L271.1 174.3 275.1 172.6 279.1 170.1 283.0 167.1 286.7 163.4 290.4 159.1 293.8 154.4 297.1 149.1 300.1 143.3 302.8 137.2 305.2 130.8 307.3 124.0 309.1 117.1 310.5 110.1 311.5 103.0 312.0 95.9 312.2 88.9 311.9 82.0 311.1 75.3 309.9 68.9 308.2 62.9 306.1 57.3 303.6 52.1 300.7 47.4 297.3 43.3 293.7 39.8 289.7 36.9 285.5 34.7 281.1 33.1 276.5 32.3 271.8 32.1 267.0 32.6M267.0 175.4L271.3 174.5 275.5 172.9 279.7 170.7 283.7 167.8 287.7 164.3 291.5 160.2 295.1 155.5 298.5 150.4 301.6 144.8 304.5 138.7 307.1 132.4 309.3 125.8 311.1 118.9 312.6 112.0 313.6 104.9 314.2 97.8 314.3 90.8 314.0 83.9 313.2 77.2 311.9 70.8 310.2 64.7 308.0 59.0 305.3 53.7 302.3 48.9 298.8 44.6 295.0 41.0 290.8 37.9 286.4 35.5 281.7 33.7 276.9 32.7 272.0 32.3 267.0 32.6M267.0 175.4L271.4 174.7 275.8 173.3 280.1 171.2 284.3 168.5 288.4 165.1 292.3 161.2 296.0 156.7 299.5 151.7 302.8 146.2 305.7 140.4 308.4 134.1 310.7 127.6 312.6 120.8 314.1 113.9 315.1 106.9 315.7 99.8 315.9 92.8 315.6 85.9 314.7 79.2 313.4 72.7 311.6 66.5 309.3 60.7 306.6 55.3 303.4 50.4 299.8 46.0 295.9 42.2 291.6 38.9 287.0 36.3 282.2 34.4 277.3 33.1 272.2 32.5 267.0 32.6M267.0 175.4L271.5 174.9 275.9 173.6 280.3 171.8 284.6 169.2 288.8 166.0 292.8 162.3 296.6 157.9 300.1 153.1 303.5 147.8 306.5 142.0 309.2 135.9 311.5 129.4 313.4 122.8 315.0 115.9 316.1 108.9 316.7 101.9 316.8 94.9 316.5 88.0 315.7 81.2 314.3 74.7 312.5 68.4 310.1 62.5 307.4 57.0 304.1 52.0 300.5 47.4 296.4 43.4 292.1 40.0 287.4 37.2 282.5 35.0 277.5 33.5 272.3 32.7 267.0 32.6M267.0 175.4L271.5 175.0 276.0 174.0 280.4 172.3 284.7 170.0 288.9 167.0 292.9 163.4 296.8 159.2 300.4 154.5 303.7 149.3 306.7 143.7 309.4 137.7 311.8 131.3 313.7 124.7 315.3 117.9 316.4 111.0 317.0 104.0 317.1 97.0 316.8 90.1 316.0 83.3 314.6 76.7 312.8 70.3 310.4 64.3 307.6 58.7 304.4 53.5 300.7 48.8 296.6 44.6 292.2 41.0 287.5 38.0 282.6 35.7 277.5 34.0 272.3 33.0 267.0 32.6M267.0 175.4L271.5 175.2 275.9 174.4 280.3 172.9 284.6 170.7 288.8 167.9 292.8 164.4 296.6 160.4 300.1 155.9 303.5 150.8 306.5 145.3 309.2 139.4 311.5 133.2 313.4 126.7 315.0 120.0 316.1 113.1 316.7 106.1 316.8 99.1 316.5 92.2 315.7 85.3 314.3 78.7 312.5 72.3 310.1 66.2 307.4 60.4 304.1 55.1 300.5 50.2 296.4 45.9 292.1 42.1 287.4 38.9 282.5 36.3 277.5 34.4 272.3 33.2 267.0 32.6M267.0 175.4L271.4 175.4 275.8 174.8 280.1 173.4 284.3 171.4 288.4 168.8 292.3 165.5 296.0 161.7 299.5 157.3 302.8 152.3 305.7 147.0 308.4 141.2 310.7 135.1 312.6 128.6 314.1 122.0 315.1 115.1 315.7 108.2 315.9 101.2 315.6 94.2 314.7 87.4 313.4 80.6 311.6 74.2 309.3 68.0 306.6 62.1 303.4 56.6 299.8 51.6 295.9 47.1 291.6 43.1 287.0 39.8 282.2 37.0 277.3 34.9 272.2 33.4 267.0 32.6M267.0 175.4L271.3 175.6 275.5 175.1 279.7 174.0 283.7 172.2 287.7 169.7 291.5 166.6 295.1 162.9 298.5 158.6 301.6 153.8 304.5 148.6 307.1 142.9 309.3 136.9 311.1 130.5 312.6 123.9 313.6 117.1 314.2 110.2 314.3 103.2 314.0 96.2 313.2 89.3 311.9 82.6 310.2 76.0 308.0 69.7 305.3 63.7 302.3 58.1 298.8 53.0 295.0 48.3 290.8 44.2 286.4 40.6 281.7 37.6 276.9 35.3 272.0 33.6 267.0 32.6M267.0 175.4L271.1 175.8 275.1 175.5 279.1 174.5 283.0 172.8 286.7 170.5 290.4 167.6 293.8 164.0 297.1 159.9 300.1 155.3 302.8 150.1 305.2 144.6 307.3 138.6 309.1 132.3 310.5 125.8 311.5 119.0 312.0 112.1 312.2 105.2 311.9 98.2 311.1 91.2 309.9 84.4 308.2 77.8 306.1 71.4 303.6 65.3 300.7 59.6 297.3 54.3 293.7 49.5 289.7 45.1 285.5 41.4 281.1 38.2 276.5 35.7 271.8 33.8 267.0 32.6M267.0 175.4L270.8 175.9 274.6 175.8 278.3 175.0 282.0 173.5 285.5 171.3 289.0 168.5 292.2 165.1 295.2 161.1 298.1 156.6 300.6 151.6 302.9 146.1 304.9 140.2 306.6 134.0 307.9 127.5 308.8 120.8 309.3 114.0 309.5 107.0 309.2 100.0 308.5 93.0 307.3 86.2 305.7 79.5 303.8 73.0 301.4 66.8 298.6 61.0 295.5 55.5 292.1 50.5 288.4 46.1 284.4 42.1 280.2 38.8 275.9 36.1 271.5 34.0 267.0 32.6M267.0 175.4L270.5 176.1 274.0 176.1 277.5 175.4 280.9 174.1 284.1 172.1 287.3 169.4 290.3 166.1 293.1 162.3 295.7 157.9 298.1 152.9 300.2 147.6 302.0 141.8 303.5 135.6 304.7 129.2 305.6 122.5 306.1 115.7 306.2 108.7 305.9 101.7 305.3 94.7 304.2 87.8 302.8 81.0 300.9 74.5 298.8 68.2 296.2 62.2 293.3 56.7 290.2 51.6 286.7 46.9 283.1 42.8 279.2 39.3 275.2 36.4 271.1 34.2 267.0 32.6M267.0 175.4L270.2 176.2 273.4 176.4 276.5 175.9 279.5 174.7 282.5 172.8 285.3 170.2 288.0 167.1 290.6 163.3 292.9 159.0 295.1 154.2 297.0 148.9 298.7 143.2 300.0 137.1 301.1 130.7 301.9 124.1 302.4 117.2 302.5 110.3 302.2 103.3 301.6 96.2 300.7 89.3 299.4 82.5 297.7 75.8 295.7 69.5 293.4 63.4 290.8 57.7 287.9 52.5 284.8 47.7 281.5 43.5 278.0 39.8 274.4 36.8 270.7 34.4 267.0 32.6M267.0 175.4L269.8 176.4 272.6 176.7 275.4 176.2 278.0 175.1 280.7 173.4 283.2 171.0 285.6 167.9 287.8 164.3 289.9 160.0 291.8 155.3 293.5 150.1 294.9 144.4 296.1 138.4 297.1 132.1 297.8 125.5 298.2 118.6 298.3 111.7 298.1 104.7 297.5 97.6 296.7 90.6 295.5 83.7 294.1 77.1 292.3 70.6 290.3 64.5 288.0 58.7 285.5 53.3 282.7 48.4 279.8 44.1 276.7 40.3 273.6 37.1 270.3 34.5 267.0 32.6M267.0 175.4L269.4 176.5 271.8 176.9 274.1 176.6 276.4 175.6 278.7 173.9 280.8 171.6 282.8 168.6 284.7 165.1 286.5 160.9 288.1 156.3 289.6 151.1 290.8 145.5 291.9 139.5 292.7 133.2 293.3 126.7 293.6 119.9 293.7 112.9 293.5 105.9 293.0 98.8 292.3 91.8 291.3 84.9 290.1 78.1 288.6 71.6 286.9 65.4 284.9 59.5 282.8 54.0 280.4 49.0 277.9 44.6 275.3 40.6 272.6 37.3 269.8 34.6 267.0 32.6M267.0 175.4L269.0 176.6 270.9 177.1 272.8 176.8 274.7 175.9 276.5 174.4 278.3 172.1 279.9 169.2 281.5 165.7 282.9 161.7 284.2 157.1 285.4 152.0 286.4 146.4 287.3 140.5 287.9 134.2 288.4 127.7 288.7 120.9 288.8 113.9 288.6 106.9 288.2 99.8 287.7 92.7 286.9 85.8 285.8 79.0 284.6 72.4 283.2 66.1 281.6 60.2 279.9 54.6 277.9 49.6 275.9 45.0 273.8 41.0 271.6 37.5 269.3 34.7 267.0 32.6M267.0 175.4L268.5 176.6 270.0 177.2 271.4 177.1 272.9 176.2 274.2 174.7 275.6 172.5 276.8 169.7 278.0 166.3 279.1 162.3 280.1 157.7 281.0 152.7 281.8 147.2 282.4 141.2 282.9 135.0 283.3 128.5 283.5 121.7 283.6 114.7 283.4 107.7 283.2 100.6 282.7 93.5 282.1 86.5 281.3 79.7 280.4 73.1 279.3 66.7 278.1 60.7 276.8 55.1 275.3 50.0 273.8 45.3 272.2 41.2 270.5 37.7 268.7 34.8 267.0 32.6M267.0 175.4L268.0 176.7 269.0 177.3 270.0 177.2 270.9 176.4 271.9 175.0 272.8 172.8 273.6 170.1 274.4 166.7 275.2 162.7 275.8 158.2 276.4 153.2 277.0 147.7 277.4 141.8 277.7 135.6 278.0 129.0 278.1 122.3 278.2 115.3 278.1 108.3 277.9 101.2 277.6 94.1 277.2 87.1 276.7 80.2 276.0 73.5 275.3 67.2 274.5 61.1 273.6 55.5 272.6 50.3 271.6 45.5 270.5 41.4 269.3 37.8 268.2 34.9 267.0 32.6M267.0 175.4L267.5 176.7 268.0 177.4 268.5 177.3 269.0 176.6 269.5 175.1 269.9 173.0 270.3 170.3 270.7 166.9 271.1 162.9 271.4 158.5 271.8 153.5 272.0 148.0 272.2 142.1 272.4 135.9 272.5 129.4 272.6 122.6 272.6 115.7 272.6 108.6 272.5 101.5 272.3 94.4 272.1 87.4 271.9 80.5 271.5 73.8 271.2 67.4 270.8 61.4 270.3 55.7 269.8 50.4 269.3 45.7 268.7 41.5 268.2 37.9 267.6 34.9 267.0 32.6M267.0 175.4L267.0 176.7 267.0 177.4 267.0 177.3 267.0 176.6 267.0 175.2 267.0 173.1 267.0 170.3 267.0 167.0 267.0 163.0 267.0 158.5 267.0 153.6 267.0 148.1 267.0 142.2 267.0 136.0 267.0 129.5 267.0 122.7 267.0 115.8 267.0 108.7 267.0 101.6 267.0 94.5 267.0 87.5 267.0 80.6 267.0 73.9 267.0 67.5 267.0 61.4 267.0 55.7 267.0 50.5 267.0 45.7 267.0 41.5 267.0 37.9 267.0 34.9 267.0 32.6M267.0 175.4L266.5 176.7 266.0 177.4 265.5 177.3 265.0 176.6 264.5 175.1 264.1 173.0 263.7 170.3 263.3 166.9 262.9 162.9 262.6 158.5 262.2 153.5 262.0 148.0 261.8 142.1 261.6 135.9 261.5 129.4 261.4 122.6 261.4 115.7 261.4 108.6 261.5 101.5 261.7 94.4 261.9 87.4 262.1 80.5 262.5 73.8 262.8 67.4 263.2 61.4 263.7 55.7 264.2 50.4 264.7 45.7 265.3 41.5 265.8 37.9 266.4 34.9 267.0 32.6M267.0 175.4L266.0 176.7 265.0 177.3 264.0 177.2 263.1 176.4 262.1 175.0 261.2 172.8 260.4 170.1 259.6 166.7 258.8 162.7 258.2 158.2 257.6 153.2 257.0 147.7 256.6 141.8 256.3 135.6 256.0 129.0 255.9 122.3 255.8 115.3 255.9 108.3 256.1 101.2 256.4 94.1 256.8 87.1 257.3 80.2 258.0 73.5 258.7 67.2 259.5 61.1 260.4 55.5 261.4 50.3 262.4 45.5 263.5 41.4 264.7 37.8 265.8 34.9 267.0 32.6M267.0 175.4L265.5 176.6 264.0 177.2 262.6 177.1 261.1 176.2 259.8 174.7 258.4 172.5 257.2 169.7 256.0 166.3 254.9 162.3 253.9 157.7 253.0 152.7 252.2 147.2 251.6 141.2 251.1 135.0 250.7 128.5 250.5 121.7 250.4 114.7 250.6 107.7 250.8 100.6 251.3 93.5 251.9 86.5 252.7 79.7 253.6 73.1 254.7 66.7 255.9 60.7 257.2 55.1 258.7 50.0 260.2 45.3 261.8 41.2 263.5 37.7 265.3 34.8 267.0 32.6M267.0 175.4L265.0 176.6 263.1 177.1 261.2 176.8 259.3 175.9 257.5 174.4 255.7 172.1 254.1 169.2 252.5 165.7 251.1 161.7 249.8 157.1 248.6 152.0 247.6 146.4 246.7 140.5 246.1 134.2 245.6 127.7 245.3 120.9 245.2 113.9 245.4 106.9 245.8 99.8 246.3 92.7 247.1 85.8 248.2 79.0 249.4 72.4 250.8 66.1 252.4 60.2 254.1 54.6 256.1 49.6 258.1 45.0 260.2 41.0 262.4 37.5 264.7 34.7 267.0 32.6M267.0 175.4L264.6 176.5 262.2 176.9 259.9 176.6 257.6 175.6 255.3 173.9 253.2 171.6 251.2 168.6 249.3 165.1 247.5 160.9 245.9 156.3 244.4 151.1 243.2 145.5 242.1 139.5 241.3 133.2 240.7 126.7 240.4 119.9 240.3 112.9 240.5 105.9 241.0 98.8 241.7 91.8 242.7 84.9 243.9 78.1 245.4 71.6 247.1 65.4 249.1 59.5 251.2 54.0 253.6 49.0 256.1 44.6 258.7 40.6 261.4 37.3 264.2 34.6 267.0 32.6M267.0 175.4L264.2 176.4 261.4 176.7 258.6 176.2 256.0 175.1 253.3 173.4 250.8 171.0 248.4 167.9 246.2 164.3 244.1 160.0 242.2 155.3 240.5 150.1 239.1 144.4 237.9 138.4 236.9 132.1 236.2 125.5 235.8 118.6 235.7 111.7 235.9 104.7 236.5 97.6 237.3 90.6 238.5 83.7 239.9 77.1 241.7 70.6 243.7 64.5 246.0 58.7 248.5 53.3 251.3 48.4 254.2 44.1 257.3 40.3 260.4 37.1 263.7 34.5 267.0 32.6M267.0 175.4L263.8 176.2 260.6 176.4 257.5 175.9 254.5 174.7 251.5 172.8 248.7 170.2 246.0 167.1 243.4 163.3 241.1 159.0 238.9 154.2 237.0 148.9 235.3 143.2 234.0 137.1 232.9 130.7 232.1 124.1 231.6 117.2 231.5 110.3 231.8 103.3 232.4 96.2 233.3 89.3 234.6 82.5 236.3 75.8 238.3 69.5 240.6 63.4 243.2 57.7 246.1 52.5 249.2 47.7 252.5 43.5 256.0 39.8 259.6 36.8 263.3 34.4 267.0 32.6M267.0 175.4L263.5 176.1 260.0 176.1 256.5 175.4 253.1 174.1 249.9 172.1 246.7 169.4 243.7 166.1 240.9 162.3 238.3 157.9 235.9 152.9 233.8 147.6 232.0 141.8 230.5 135.6 229.3 129.2 228.4 122.5 227.9 115.7 227.8 108.7 228.1 101.7 228.7 94.7 229.8 87.8 231.2 81.0 233.1 74.5 235.2 68.2 237.8 62.2 240.7 56.7 243.8 51.6 247.3 46.9 250.9 42.8 254.8 39.3 258.8 36.4 262.9 34.2 267.0 32.6M267.0 175.4L263.2 175.9 259.4 175.8 255.7 175.0 252.0 173.5 248.5 171.3 245.0 168.5 241.8 165.1 238.8 161.1 235.9 156.6 233.4 151.6 231.1 146.1 229.1 140.2 227.4 134.0 226.1 127.5 225.2 120.8 224.7 114.0 224.5 107.0 224.8 100.0 225.5 93.0 226.7 86.2 228.3 79.5 230.2 73.0 232.6 66.8 235.4 61.0 238.5 55.5 241.9 50.5 245.6 46.1 249.6 42.1 253.8 38.8 258.1 36.1 262.5 34.0 267.0 32.6M267.0 175.4L262.9 175.8 258.9 175.5 254.9 174.5 251.0 172.8 247.3 170.5 243.6 167.6 240.2 164.0 236.9 159.9 233.9 155.3 231.2 150.1 228.8 144.6 226.7 138.6 224.9 132.3 223.5 125.8 222.5 119.0 222.0 112.1 221.8 105.2 222.1 98.2 222.9 91.2 224.1 84.4 225.8 77.8 227.9 71.4 230.4 65.3 233.3 59.6 236.7 54.3 240.3 49.5 244.3 45.1 248.5 41.4 252.9 38.2 257.5 35.7 262.2 33.8 267.0 32.6M267.0 175.4L262.7 175.6 258.5 175.1 254.3 174.0 250.3 172.2 246.3 169.7 242.5 166.6 238.9 162.9 235.5 158.6 232.4 153.8 229.5 148.6 226.9 142.9 224.7 136.9 222.9 130.5 221.4 123.9 220.4 117.1 219.8 110.2 219.7 103.2 220.0 96.2 220.8 89.3 222.1 82.6 223.8 76.0 226.0 69.7 228.7 63.7 231.7 58.1 235.2 53.0 239.0 48.3 243.2 44.2 247.6 40.6 252.3 37.6 257.1 35.3 262.0 33.6 267.0 32.6M267.0 175.4L262.6 175.4 258.2 174.8 253.9 173.4 249.7 171.4 245.6 168.8 241.7 165.5 238.0 161.7 234.5 157.3 231.2 152.3 228.3 147.0 225.6 141.2 223.3 135.1 221.4 128.6 219.9 122.0 218.9 115.1 218.3 108.2 218.1 101.2 218.4 94.2 219.3 87.4 220.6 80.6 222.4 74.2 224.7 68.0 227.4 62.1 230.6 56.6 234.2 51.6 238.1 47.1 242.4 43.1 247.0 39.8 251.8 37.0 256.7 34.9 261.8 33.4 267.0 32.6M267.0 175.4L262.5 175.2 258.1 174.4 253.7 172.9 249.4 170.7 245.2 167.9 241.2 164.4 237.4 160.4 233.9 155.9 230.5 150.8 227.5 145.3 224.8 139.4 222.5 133.2 220.6 126.7 219.0 120.0 217.9 113.1 217.3 106.1 217.2 99.1 217.5 92.2 218.3 85.3 219.7 78.7 221.5 72.3 223.9 66.2 226.6 60.4 229.9 55.1 233.5 50.2 237.6 45.9 241.9 42.1 246.6 38.9 251.5 36.3 256.5 34.4 261.7 33.2 267.0 32.6" fill="none" stroke="#c6c6c6" stroke-width="0.7"/><path d="M200.3 107.5L200.6 107.9 200.7 108.6 200.6 109.4 200.2 110.3 199.7 111.3 199.1 112.3 198.3 113.3 197.4 114.2 196.4 115.0 195.5 115.6 194.6 116.0 193.8 116.2 193.2 116.2 192.7 115.9 192.4 115.5 192.3 114.8 192.4 114.0 192.7 113.1 193.2 112.1 193.9 111.1 194.7 110.1 195.6 109.2 196.5 108.4 197.4 107.8 198.3 107.4 199.1 107.2 199.8 107.2 200.3 107.5M207.2 106.6L207.8 107.5 208.0 108.7 207.7 110.3 207.1 112.1 206.1 114.0 204.8 116.0 203.3 117.9 201.6 119.6 199.8 121.1 197.9 122.3 196.2 123.1 194.7 123.5 193.4 123.4 192.5 122.9 191.9 122.0 191.7 120.8 191.9 119.2 192.5 117.4 193.5 115.5 194.8 113.5 196.4 111.6 198.1 109.9 199.9 108.4 201.7 107.2 203.4 106.4 205.0 106.0 206.2 106.1 207.2 106.6M215.6 108.0L216.4 109.3 216.7 111.1 216.4 113.3 215.5 115.8 214.1 118.5 212.3 121.3 210.1 124.0 207.6 126.4 205.1 128.5 202.5 130.2 200.1 131.3 197.9 131.9 196.1 131.8 194.8 131.1 194.0 129.9 193.7 128.1 194.0 125.9 194.9 123.3 196.3 120.6 198.1 117.8 200.3 115.2 202.7 112.7 205.3 110.6 207.9 108.9 210.3 107.8 212.4 107.2 214.2 107.3 215.6 108.0M224.9 111.7L225.9 113.2 226.2 115.4 225.9 118.1 224.8 121.2 223.1 124.6 220.8 127.9 218.1 131.2 215.2 134.2 212.0 136.8 208.9 138.9 205.9 140.3 203.3 140.9 201.1 140.8 199.4 140.0 198.4 138.4 198.1 136.3 198.5 133.5 199.5 130.5 201.2 127.1 203.5 123.7 206.2 120.5 209.2 117.4 212.3 114.8 215.4 112.8 218.4 111.4 221.1 110.7 223.3 110.8 224.9 111.7M234.5 117.4L235.6 119.1 236.0 121.5 235.6 124.6 234.4 128.0 232.5 131.7 230.0 135.5 227.0 139.2 223.6 142.5 220.1 145.4 216.6 147.7 213.3 149.2 210.4 150.0 207.9 149.9 206.1 148.9 204.9 147.2 204.6 144.8 205.0 141.8 206.2 138.3 208.1 134.6 210.6 130.8 213.6 127.1 216.9 123.8 220.4 120.9 223.9 118.6 227.2 117.1 230.2 116.3 232.7 116.4 234.5 117.4M243.7 124.7L244.9 126.4 245.3 129.0 244.8 132.1 243.6 135.7 241.6 139.5 239.0 143.4 235.9 147.2 232.5 150.7 228.8 153.7 225.2 156.1 221.8 157.7 218.7 158.4 216.2 158.3 214.3 157.3 213.1 155.6 212.7 153.0 213.2 149.9 214.4 146.3 216.4 142.5 219.0 138.6 222.1 134.8 225.5 131.3 229.2 128.3 232.8 125.9 236.2 124.3 239.3 123.6 241.8 123.7 243.7 124.7M251.9 133.1L253.1 134.8 253.4 137.2 253.0 140.2 251.8 143.7 249.9 147.4 247.4 151.2 244.4 154.9 241.1 158.2 237.6 161.1 234.1 163.4 230.8 164.9 227.8 165.7 225.3 165.6 223.5 164.6 222.4 162.9 222.0 160.5 222.4 157.4 223.6 154.0 225.5 150.3 228.0 146.5 231.0 142.8 234.4 139.5 237.9 136.6 241.4 134.3 244.7 132.8 247.6 132.0 250.1 132.1 251.9 133.1M258.6 142.0L259.6 143.6 259.9 145.7 259.5 148.5 258.5 151.5 256.8 154.9 254.5 158.3 251.8 161.5 248.8 164.6 245.7 167.2 242.6 169.2 239.6 170.6 236.9 171.3 234.7 171.2 233.1 170.3 232.1 168.8 231.8 166.6 232.1 163.9 233.2 160.8 234.9 157.4 237.2 154.1 239.9 150.8 242.8 147.8 246.0 145.2 249.1 143.1 252.1 141.7 254.7 141.1 256.9 141.2 258.6 142.0M263.2 150.9L264.0 152.1 264.3 153.9 264.0 156.1 263.1 158.7 261.7 161.4 259.9 164.2 257.7 166.8 255.3 169.3 252.7 171.4 250.1 173.1 247.7 174.2 245.6 174.8 243.8 174.7 242.4 174.0 241.6 172.7 241.3 170.9 241.6 168.7 242.5 166.2 243.9 163.5 245.7 160.7 247.9 158.0 250.4 155.6 252.9 153.5 255.5 151.8 257.9 150.7 260.1 150.1 261.9 150.2 263.2 150.9M265.5 159.1L266.1 160.0 266.3 161.2 266.1 162.8 265.5 164.6 264.5 166.5 263.2 168.5 261.6 170.4 259.9 172.1 258.1 173.6 256.3 174.8 254.6 175.6 253.0 176.0 251.8 175.9 250.8 175.4 250.2 174.5 250.0 173.3 250.3 171.7 250.9 169.9 251.9 168.0 253.2 166.0 254.7 164.1 256.4 162.4 258.2 160.9 260.1 159.7 261.8 158.9 263.3 158.5 264.6 158.6 265.5 159.1M265.3 166.1L265.6 166.5 265.7 167.2 265.6 168.0 265.3 168.9 264.8 169.9 264.1 170.9 263.3 171.9 262.4 172.8 261.5 173.6 260.6 174.2 259.7 174.6 258.9 174.8 258.2 174.8 257.7 174.5 257.4 174.1 257.3 173.4 257.4 172.6 257.8 171.7 258.3 170.7 258.9 169.7 259.7 168.7 260.6 167.8 261.6 167.0 262.5 166.4 263.4 166.0 264.2 165.8 264.8 165.8 265.3 166.1M195.3 110.7L197.2 109.0 199.4 107.8 202.1 107.0 205.0 106.6 208.3 106.6 211.8 107.1 215.6 108.0 219.5 109.3 223.5 111.0 227.7 113.1 231.8 115.6 235.9 118.3 239.9 121.4 243.7 124.7 247.4 128.1 250.8 131.8 254.0 135.6 256.9 139.4 259.4 143.3 261.5 147.1 263.2 150.9 264.5 154.5 265.3 158.0 265.7 161.2 265.6 164.2 265.1 166.9 264.1 169.3 262.7 171.3M195.3 110.7L197.3 109.3 199.8 108.4 202.5 107.9 205.7 107.8 209.1 108.1 212.7 108.8 216.6 109.9 220.6 111.4 224.7 113.3 228.9 115.6 233.1 118.1 237.2 121.0 241.3 124.1 245.1 127.4 248.8 130.9 252.2 134.5 255.4 138.2 258.1 141.9 260.6 145.6 262.6 149.3 264.2 152.8 265.4 156.2 266.1 159.4 266.3 162.4 266.1 165.1 265.4 167.5 264.3 169.6 262.7 171.3M195.3 110.7L197.3 109.8 199.7 109.3 202.5 109.2 205.6 109.5 209.0 110.2 212.6 111.3 216.5 112.8 220.5 114.6 224.6 116.8 228.8 119.2 233.0 122.0 237.1 124.9 241.1 128.1 245.0 131.4 248.6 134.9 252.1 138.4 255.2 142.0 258.0 145.5 260.4 149.0 262.5 152.4 264.1 155.7 265.3 158.7 266.0 161.6 266.3 164.2 266.1 166.5 265.4 168.4 264.3 170.1 262.7 171.3M195.3 110.7L197.1 110.4 199.3 110.4 201.9 110.9 204.8 111.7 208.1 112.9 211.6 114.4 215.3 116.3 219.1 118.5 223.1 121.0 227.2 123.7 231.3 126.7 235.4 129.8 239.4 133.1 243.2 136.4 246.9 139.8 250.4 143.3 253.6 146.7 256.4 150.0 259.0 153.3 261.1 156.3 262.9 159.2 264.2 161.9 265.1 164.2 265.5 166.3 265.5 168.1 265.0 169.5 264.1 170.6 262.7 171.3M195.3 110.7L196.8 111.0 198.6 111.6 200.9 112.7 203.5 114.1 206.4 115.8 209.6 117.8 213.1 120.2 216.7 122.8 220.5 125.6 224.4 128.6 228.4 131.8 232.3 135.1 236.3 138.5 240.1 141.9 243.8 145.3 247.3 148.6 250.6 151.8 253.6 154.9 256.3 157.9 258.7 160.6 260.7 163.1 262.3 165.2 263.4 167.1 264.2 168.7 264.5 169.9 264.3 170.8 263.7 171.2 262.7 171.3M195.3 110.7L196.3 111.6 197.7 112.8 199.5 114.4 201.7 116.4 204.2 118.6 207.0 121.2 210.1 124.0 213.4 127.0 216.9 130.1 220.6 133.4 224.4 136.9 228.2 140.3 232.1 143.8 235.9 147.2 239.6 150.6 243.2 153.8 246.6 156.9 249.8 159.8 252.8 162.4 255.4 164.8 257.7 166.8 259.6 168.6 261.2 170.0 262.3 171.0 263.1 171.7 263.4 171.9 263.2 171.8 262.7 171.3M195.3 110.7L195.8 112.1 196.6 113.9 197.9 116.0 199.5 118.4 201.6 121.2 203.9 124.1 206.6 127.3 209.6 130.7 212.8 134.2 216.2 137.7 219.8 141.3 223.5 144.9 227.2 148.5 231.0 152.0 234.8 155.3 238.5 158.4 242.0 161.4 245.4 164.0 248.6 166.4 251.6 168.5 254.2 170.2 256.6 171.5 258.6 172.5 260.2 173.1 261.5 173.2 262.3 173.0 262.7 172.4 262.7 171.3M195.3 110.7L195.2 112.5 195.5 114.7 196.2 117.2 197.3 120.0 198.9 123.1 200.8 126.4 203.0 129.9 205.6 133.5 208.5 137.3 211.6 141.0 215.0 144.8 218.5 148.5 222.2 152.2 225.9 155.6 229.7 158.9 233.5 162.0 237.2 164.8 240.9 167.3 244.3 169.5 247.6 171.4 250.6 172.8 253.4 173.8 255.9 174.5 258.0 174.7 259.8 174.5 261.2 173.8 262.1 172.8 262.7 171.3M195.3 110.7L194.7 112.8 194.4 115.2 194.6 118.0 195.3 121.0 196.3 124.3 197.8 127.8 199.6 131.5 201.9 135.3 204.4 139.2 207.3 143.1 210.5 146.9 213.9 150.7 217.4 154.4 221.2 157.9 225.0 161.2 228.8 164.2 232.7 167.0 236.5 169.4 240.3 171.4 243.9 173.1 247.3 174.4 250.4 175.2 253.3 175.7 255.9 175.6 258.2 175.2 260.1 174.3 261.6 173.0 262.7 171.3M195.3 110.7L194.2 112.8 193.5 115.3 193.3 118.2 193.5 121.3 194.2 124.6 195.3 128.2 196.8 131.9 198.7 135.8 201.0 139.7 203.7 143.6 206.7 147.5 209.9 151.3 213.4 155.0 217.1 158.5 221.0 161.8 224.9 164.8 228.9 167.5 232.9 169.9 236.9 171.9 240.7 173.6 244.4 174.8 247.9 175.6 251.2 176.0 254.2 175.9 256.9 175.4 259.2 174.4 261.1 173.1 262.7 171.3M195.3 110.7L193.9 112.7 192.9 115.1 192.4 117.8 192.3 120.8 192.7 124.0 193.5 127.5 194.8 131.1 196.5 134.9 198.6 138.7 201.1 142.6 204.0 146.4 207.2 150.2 210.6 153.9 214.3 157.3 218.1 160.6 222.1 163.7 226.2 166.4 230.3 168.9 234.5 171.0 238.5 172.7 242.4 174.0 246.2 174.9 249.7 175.4 253.0 175.4 255.9 175.0 258.6 174.2 260.8 173.0 262.7 171.3M195.3 110.7L193.7 112.4 192.6 114.5 191.9 116.9 191.7 119.6 191.9 122.6 192.6 125.8 193.8 129.2 195.4 132.7 197.4 136.4 199.9 140.1 202.6 143.8 205.8 147.5 209.2 151.1 212.9 154.6 216.7 157.9 220.8 161.0 224.9 163.9 229.1 166.4 233.3 168.7 237.4 170.6 241.4 172.1 245.3 173.2 248.9 173.9 252.3 174.2 255.5 174.1 258.2 173.6 260.7 172.7 262.7 171.3M195.3 110.7L193.7 111.9 192.6 113.6 191.9 115.5 191.7 117.8 192.0 120.4 192.7 123.3 193.9 126.3 195.5 129.6 197.6 133.0 200.0 136.5 202.8 140.0 205.9 143.6 209.4 147.1 213.0 150.6 216.9 153.9 220.9 157.1 225.0 160.0 229.2 162.8 233.4 165.2 237.5 167.4 241.5 169.2 245.4 170.7 249.0 171.8 252.4 172.5 255.5 172.8 258.3 172.7 260.7 172.2 262.7 171.3M195.3 110.7L193.9 111.4 193.0 112.5 192.5 113.9 192.5 115.7 192.9 117.8 193.8 120.1 195.1 122.8 196.9 125.7 199.0 128.7 201.6 132.0 204.4 135.3 207.6 138.7 211.1 142.2 214.8 145.6 218.6 148.9 222.6 152.2 226.7 155.3 230.8 158.3 234.9 161.0 238.9 163.5 242.7 165.7 246.4 167.6 249.9 169.1 253.2 170.3 256.1 171.1 258.7 171.6 260.9 171.6 262.7 171.3M195.3 110.7L194.3 110.8 193.7 111.2 193.5 112.1 193.8 113.3 194.6 114.9 195.7 116.8 197.3 118.9 199.3 121.4 201.7 124.1 204.4 127.1 207.4 130.2 210.7 133.4 214.2 136.7 217.9 140.1 221.7 143.5 225.7 146.9 229.6 150.2 233.6 153.4 237.5 156.4 241.3 159.2 244.9 161.8 248.4 164.2 251.6 166.2 254.5 167.9 257.1 169.3 259.4 170.4 261.2 171.0 262.7 171.3M195.3 110.7L194.8 110.2 194.6 110.1 194.9 110.3 195.7 111.0 196.8 112.0 198.4 113.4 200.3 115.2 202.6 117.2 205.2 119.6 208.2 122.2 211.4 125.1 214.8 128.2 218.4 131.4 222.1 134.8 225.9 138.2 229.8 141.7 233.6 145.1 237.4 148.6 241.1 151.9 244.6 155.0 247.9 158.0 251.0 160.8 253.8 163.4 256.3 165.6 258.5 167.6 260.3 169.2 261.7 170.4 262.7 171.3M195.3 110.7L195.3 109.6 195.7 109.0 196.5 108.8 197.8 108.9 199.4 109.5 201.4 110.5 203.8 111.8 206.4 113.5 209.4 115.6 212.6 118.0 216.0 120.6 219.5 123.6 223.2 126.7 227.0 130.0 230.8 133.5 234.5 137.1 238.2 140.7 241.8 144.3 245.2 147.8 248.4 151.3 251.4 154.7 254.1 157.9 256.4 160.8 258.5 163.6 260.1 166.0 261.4 168.1 262.2 169.9 262.7 171.3M195.3 110.7L195.9 109.2 196.8 108.2 198.2 107.5 200.0 107.3 202.1 107.5 204.6 108.2 207.4 109.2 210.4 110.6 213.7 112.5 217.1 114.7 220.8 117.2 224.5 120.0 228.3 123.1 232.1 126.4 235.8 129.8 239.5 133.5 243.0 137.2 246.4 141.0 249.5 144.7 252.4 148.5 255.0 152.1 257.2 155.6 259.1 158.9 260.7 162.0 261.8 164.8 262.5 167.3 262.8 169.5 262.7 171.3M195.3 110.7L196.4 109.0 197.9 107.7 199.8 106.8 202.1 106.4 204.7 106.3 207.6 106.8 210.7 107.6 214.1 108.9 217.7 110.6 221.5 112.6 225.3 115.0 229.2 117.8 233.0 120.8 236.8 124.1 240.6 127.6 244.1 131.3 247.5 135.1 250.7 138.9 253.6 142.8 256.1 146.7 258.4 150.5 260.2 154.2 261.7 157.7 262.7 161.0 263.4 164.0 263.6 166.8 263.3 169.2 262.7 171.3M195.3 110.7L196.9 108.9 198.8 107.6 201.1 106.6 203.8 106.1 206.8 106.0 210.1 106.4 213.6 107.2 217.3 108.4 221.1 110.1 225.1 112.1 229.1 114.5 233.1 117.2 237.0 120.2 240.9 123.5 244.6 127.0 248.1 130.7 251.3 134.5 254.3 138.4 257.0 142.3 259.3 146.2 261.2 150.1 262.7 153.8 263.8 157.4 264.5 160.7 264.7 163.8 264.5 166.7 263.8 169.2 262.7 171.3" fill="none" stroke="#c6c6c6" stroke-width="0.6"/><path d="M266.9 168.2L267.3 168.1 267.8 168.1 268.4 168.3 269.1 168.7 269.8 169.2 270.5 169.8 271.1 170.6 271.7 171.4 272.1 172.2 272.5 173.0 272.7 173.7 272.7 174.3 272.6 174.8 272.4 175.2 272.0 175.3 271.5 175.3 270.9 175.1 270.2 174.8 269.5 174.3 268.8 173.6 268.2 172.9 267.6 172.1 267.2 171.2 266.8 170.4 266.6 169.7 266.6 169.1 266.7 168.6 266.9 168.2M267.6 162.6L268.3 162.2 269.3 162.3 270.5 162.6 271.7 163.4 273.1 164.4 274.4 165.6 275.6 167.1 276.7 168.6 277.6 170.2 278.3 171.7 278.6 173.1 278.7 174.3 278.5 175.3 278.0 176.0 277.3 176.3 276.3 176.3 275.1 175.9 273.8 175.2 272.5 174.2 271.2 172.9 270.0 171.5 268.9 169.9 268.0 168.3 267.3 166.8 266.9 165.4 266.8 164.2 267.1 163.2 267.6 162.6M270.4 155.9L271.5 155.4 272.8 155.5 274.5 156.0 276.3 157.0 278.2 158.4 280.0 160.2 281.8 162.2 283.3 164.4 284.6 166.7 285.5 168.8 286.1 170.8 286.2 172.5 285.9 173.9 285.2 174.8 284.1 175.3 282.7 175.3 281.1 174.7 279.3 173.7 277.4 172.3 275.5 170.5 273.8 168.5 272.2 166.3 271.0 164.1 270.0 161.9 269.5 159.9 269.4 158.2 269.7 156.8 270.4 155.9M275.2 148.7L276.5 148.1 278.2 148.2 280.3 148.8 282.5 150.0 284.8 151.8 287.1 154.0 289.2 156.4 291.1 159.1 292.6 161.9 293.8 164.5 294.4 167.0 294.6 169.1 294.2 170.7 293.4 171.9 292.0 172.4 290.3 172.4 288.3 171.7 286.1 170.5 283.8 168.8 281.5 166.6 279.4 164.1 277.5 161.4 275.9 158.7 274.8 156.0 274.1 153.6 274.0 151.5 274.4 149.8 275.2 148.7M281.8 141.4L283.2 140.8 285.1 140.8 287.4 141.6 289.8 142.9 292.4 144.9 294.9 147.3 297.3 150.1 299.4 153.1 301.2 156.1 302.4 159.1 303.2 161.8 303.3 164.2 302.9 166.0 302.0 167.3 300.5 167.9 298.6 167.9 296.4 167.1 293.9 165.8 291.3 163.8 288.8 161.4 286.4 158.6 284.3 155.6 282.6 152.6 281.3 149.6 280.6 146.9 280.4 144.5 280.8 142.7 281.8 141.4M289.5 134.6L291.1 134.0 293.0 134.0 295.3 134.8 297.9 136.2 300.6 138.2 303.2 140.7 305.7 143.6 307.8 146.7 309.6 149.8 311.0 152.9 311.7 155.7 311.9 158.2 311.5 160.1 310.5 161.4 308.9 162.0 307.0 162.0 304.7 161.2 302.1 159.8 299.4 157.8 296.8 155.3 294.3 152.4 292.2 149.3 290.4 146.2 289.0 143.1 288.3 140.3 288.1 137.8 288.5 135.9 289.5 134.6M298.0 128.7L299.5 128.1 301.4 128.1 303.6 128.9 306.1 130.2 308.7 132.2 311.2 134.6 313.6 137.4 315.7 140.4 317.4 143.4 318.7 146.4 319.4 149.1 319.6 151.5 319.2 153.3 318.2 154.6 316.8 155.2 314.9 155.2 312.6 154.4 310.2 153.1 307.6 151.1 305.1 148.7 302.7 145.9 300.6 142.9 298.8 139.9 297.6 136.9 296.8 134.2 296.7 131.8 297.1 130.0 298.0 128.7M306.6 124.1L308.0 123.6 309.7 123.6 311.7 124.3 313.9 125.5 316.2 127.2 318.5 129.4 320.6 131.9 322.5 134.6 324.1 137.3 325.2 140.0 325.9 142.4 326.0 144.5 325.6 146.2 324.8 147.3 323.5 147.9 321.8 147.8 319.7 147.2 317.5 146.0 315.2 144.2 312.9 142.0 310.8 139.6 308.9 136.9 307.4 134.1 306.2 131.5 305.6 129.0 305.4 126.9 305.8 125.3 306.6 124.1M314.8 121.2L315.9 120.7 317.3 120.7 318.9 121.3 320.7 122.3 322.6 123.7 324.5 125.5 326.2 127.5 327.8 129.7 329.0 131.9 330.0 134.1 330.5 136.1 330.6 137.8 330.3 139.2 329.6 140.1 328.5 140.6 327.2 140.5 325.5 140.0 323.7 139.0 321.8 137.6 320.0 135.8 318.2 133.8 316.7 131.6 315.4 129.3 314.5 127.2 313.9 125.2 313.8 123.5 314.1 122.1 314.8 121.2M322.0 120.0L322.7 119.7 323.7 119.7 324.9 120.1 326.2 120.8 327.5 121.8 328.8 123.1 330.0 124.5 331.1 126.1 332.0 127.7 332.7 129.2 333.1 130.6 333.2 131.8 332.9 132.8 332.4 133.4 331.7 133.8 330.7 133.7 329.5 133.4 328.3 132.6 326.9 131.6 325.6 130.4 324.4 128.9 323.3 127.4 322.4 125.8 321.7 124.3 321.4 122.9 321.3 121.7 321.5 120.7 322.0 120.0M327.6 120.8L328.0 120.7 328.5 120.7 329.1 120.9 329.8 121.2 330.5 121.7 331.2 122.4 331.8 123.1 332.4 123.9 332.8 124.8 333.2 125.6 333.4 126.3 333.4 126.9 333.3 127.4 333.1 127.8 332.7 127.9 332.2 127.9 331.6 127.7 330.9 127.3 330.2 126.8 329.5 126.2 328.9 125.4 328.3 124.6 327.9 123.8 327.5 123.0 327.3 122.3 327.3 121.7 327.4 121.2 327.6 120.8M268.6 172.6L267.6 170.9 267.0 169.0 266.9 166.7 267.1 164.3 267.8 161.7 268.9 158.8 270.4 155.9 272.2 152.8 274.4 149.7 276.9 146.6 279.7 143.5 282.8 140.4 286.1 137.4 289.5 134.6 293.1 131.9 296.8 129.5 300.5 127.2 304.2 125.3 307.9 123.6 311.4 122.2 314.8 121.2 318.0 120.5 321.0 120.1 323.8 120.1 326.2 120.4 328.3 121.1 330.1 122.1 331.4 123.4M268.6 172.6L267.9 170.8 267.5 168.8 267.6 166.5 268.1 164.0 269.0 161.3 270.3 158.4 272.0 155.4 274.0 152.3 276.3 149.1 279.0 145.9 281.9 142.8 285.0 139.7 288.3 136.7 291.8 133.9 295.4 131.2 299.0 128.8 302.6 126.6 306.2 124.6 309.8 123.0 313.2 121.7 316.4 120.7 319.5 120.0 322.2 119.7 324.8 119.8 327.0 120.2 328.8 120.9 330.3 122.0 331.4 123.4M268.6 172.6L268.2 170.9 268.2 168.9 268.6 166.7 269.5 164.3 270.7 161.6 272.2 158.8 274.1 155.9 276.4 152.8 278.9 149.7 281.7 146.5 284.8 143.4 288.0 140.4 291.4 137.4 294.9 134.6 298.4 131.9 302.0 129.4 305.5 127.2 309.0 125.2 312.4 123.6 315.6 122.2 318.6 121.1 321.4 120.4 323.9 120.1 326.1 120.0 328.0 120.4 329.5 121.1 330.7 122.1 331.4 123.4M268.6 172.6L268.6 171.1 269.0 169.4 269.8 167.4 271.0 165.2 272.6 162.7 274.5 160.1 276.7 157.3 279.2 154.4 282.0 151.4 284.9 148.3 288.1 145.3 291.5 142.3 294.9 139.4 298.4 136.5 302.0 133.9 305.5 131.4 308.9 129.1 312.2 127.0 315.4 125.2 318.4 123.7 321.1 122.5 323.6 121.7 325.8 121.1 327.6 120.9 329.1 121.0 330.3 121.5 331.1 122.3 331.4 123.4M268.6 172.6L269.0 171.5 269.8 170.1 271.0 168.4 272.6 166.5 274.5 164.3 276.8 162.0 279.3 159.5 282.1 156.8 285.1 154.0 288.3 151.1 291.7 148.2 295.1 145.3 298.6 142.5 302.2 139.7 305.7 137.0 309.1 134.4 312.4 132.0 315.6 129.8 318.5 127.9 321.3 126.2 323.7 124.7 325.9 123.6 327.8 122.8 329.2 122.3 330.4 122.1 331.1 122.2 331.5 122.7 331.4 123.4M268.6 172.6L269.4 171.9 270.6 171.0 272.2 169.7 274.1 168.2 276.4 166.4 279.0 164.4 281.8 162.2 284.8 159.8 288.1 157.3 291.5 154.7 295.0 151.9 298.5 149.2 302.1 146.4 305.7 143.6 309.1 140.9 312.5 138.2 315.7 135.7 318.7 133.4 321.5 131.2 324.0 129.2 326.2 127.5 328.1 126.0 329.6 124.9 330.8 124.0 331.5 123.4 331.9 123.1 331.9 123.1 331.4 123.4M268.6 172.6L269.7 172.4 271.3 171.9 273.2 171.2 275.4 170.1 278.0 168.8 280.8 167.2 283.9 165.3 287.1 163.3 290.6 161.0 294.1 158.6 297.8 156.0 301.4 153.4 305.0 150.7 308.6 147.9 312.1 145.2 315.4 142.5 318.5 139.8 321.4 137.3 324.0 134.9 326.3 132.6 328.3 130.6 329.9 128.8 331.2 127.2 332.1 125.9 332.5 124.8 332.6 124.0 332.2 123.6 331.4 123.4M268.6 172.6L270.0 172.9 271.8 172.9 273.9 172.6 276.3 172.0 279.1 171.1 282.1 169.9 285.4 168.4 288.8 166.7 292.4 164.7 296.0 162.5 299.8 160.2 303.5 157.7 307.1 155.0 310.7 152.3 314.2 149.5 317.5 146.7 320.5 143.9 323.3 141.2 325.8 138.6 328.0 136.1 329.8 133.7 331.3 131.5 332.3 129.5 333.0 127.7 333.2 126.2 333.0 125.0 332.4 124.1 331.4 123.4M268.6 172.6L270.1 173.3 272.0 173.8 274.2 173.9 276.8 173.7 279.7 173.2 282.8 172.3 286.1 171.2 289.6 169.7 293.3 168.0 297.0 166.1 300.8 163.9 304.5 161.5 308.2 158.9 311.8 156.2 315.2 153.4 318.5 150.6 321.5 147.7 324.3 144.8 326.7 141.9 328.8 139.1 330.6 136.5 331.9 133.9 332.9 131.6 333.4 129.5 333.6 127.5 333.3 125.9 332.5 124.5 331.4 123.4M268.6 172.6L270.1 173.7 272.0 174.5 274.2 174.9 276.8 175.1 279.6 174.8 282.7 174.3 286.1 173.4 289.6 172.2 293.2 170.7 296.9 168.9 300.7 166.8 304.4 164.6 308.1 162.1 311.7 159.4 315.1 156.6 318.4 153.6 321.4 150.6 324.2 147.6 326.6 144.6 328.7 141.6 330.5 138.7 331.9 135.9 332.8 133.3 333.4 130.8 333.5 128.6 333.2 126.6 332.5 124.9 331.4 123.4M268.6 172.6L269.9 173.9 271.7 174.9 273.8 175.6 276.2 175.9 279.0 175.9 282.0 175.5 285.2 174.8 288.6 173.8 292.1 172.4 295.8 170.7 299.5 168.8 303.2 166.5 306.9 164.1 310.5 161.4 313.9 158.6 317.2 155.6 320.3 152.5 323.1 149.4 325.6 146.3 327.8 143.2 329.6 140.1 331.1 137.2 332.2 134.3 332.9 131.7 333.1 129.3 333.0 127.0 332.4 125.1 331.4 123.4M268.6 172.6L269.7 174.0 271.2 175.1 273.0 175.8 275.2 176.2 277.8 176.3 280.5 176.0 283.6 175.3 286.8 174.3 290.2 173.0 293.8 171.4 297.4 169.4 301.0 167.2 304.6 164.8 308.2 162.1 311.7 159.3 315.0 156.3 318.1 153.2 321.0 150.1 323.7 146.9 326.0 143.7 328.0 140.6 329.7 137.6 331.0 134.7 331.9 132.0 332.4 129.5 332.5 127.2 332.1 125.2 331.4 123.4M268.6 172.6L269.3 173.9 270.5 174.9 272.0 175.6 273.9 176.0 276.1 175.9 278.6 175.6 281.4 174.9 284.4 173.8 287.6 172.4 291.0 170.8 294.5 168.8 298.0 166.6 301.6 164.1 305.1 161.4 308.6 158.6 312.0 155.6 315.2 152.6 318.3 149.5 321.1 146.3 323.6 143.2 325.9 140.1 327.8 137.2 329.3 134.4 330.5 131.7 331.4 129.3 331.8 127.1 331.8 125.1 331.4 123.4M268.6 172.6L268.9 173.7 269.7 174.5 270.9 175.0 272.4 175.1 274.2 174.9 276.4 174.3 278.9 173.5 281.6 172.3 284.6 170.8 287.8 169.0 291.1 166.9 294.5 164.6 298.0 162.1 301.6 159.5 305.1 156.6 308.5 153.7 311.9 150.7 315.1 147.7 318.0 144.6 320.8 141.6 323.3 138.7 325.5 135.9 327.4 133.3 329.0 130.8 330.2 128.6 331.0 126.6 331.4 124.9 331.4 123.4M268.6 172.6L268.5 173.3 268.9 173.8 269.6 173.9 270.8 173.7 272.2 173.2 274.1 172.4 276.3 171.3 278.7 169.8 281.5 168.1 284.4 166.2 287.6 164.0 290.9 161.6 294.3 159.0 297.8 156.3 301.4 153.5 304.9 150.7 308.3 147.8 311.7 144.9 314.9 142.0 317.9 139.2 320.7 136.5 323.2 134.0 325.5 131.7 327.4 129.5 329.0 127.6 330.2 125.9 331.0 124.5 331.4 123.4M268.6 172.6L268.1 172.9 268.1 172.9 268.5 172.6 269.2 172.0 270.4 171.1 271.9 170.0 273.8 168.5 276.0 166.8 278.5 164.8 281.3 162.6 284.3 160.3 287.5 157.8 290.9 155.1 294.3 152.4 297.9 149.6 301.5 146.8 305.0 144.1 308.5 141.3 311.9 138.7 315.2 136.2 318.2 133.8 321.0 131.6 323.6 129.6 325.9 127.8 327.8 126.3 329.4 125.0 330.6 124.1 331.4 123.4M268.6 172.6L267.8 172.4 267.4 172.0 267.5 171.2 267.9 170.1 268.8 168.8 270.1 167.2 271.7 165.4 273.7 163.4 276.0 161.1 278.6 158.7 281.5 156.2 284.6 153.5 287.9 150.8 291.4 148.1 295.0 145.3 298.6 142.6 302.2 140.0 305.9 137.4 309.4 135.0 312.9 132.7 316.1 130.7 319.2 128.8 322.0 127.2 324.6 125.9 326.8 124.8 328.7 124.1 330.3 123.6 331.4 123.4M268.6 172.6L267.6 171.9 267.0 171.0 266.8 169.8 267.0 168.3 267.7 166.5 268.7 164.5 270.2 162.3 272.0 159.9 274.2 157.4 276.7 154.8 279.5 152.1 282.5 149.3 285.8 146.5 289.3 143.7 292.9 141.0 296.5 138.3 300.2 135.8 304.0 133.5 307.6 131.3 311.2 129.3 314.6 127.6 317.9 126.1 320.9 124.9 323.7 124.0 326.1 123.4 328.2 123.1 330.0 123.1 331.4 123.4M268.6 172.6L267.5 171.5 266.7 170.1 266.4 168.5 266.6 166.5 267.1 164.4 268.1 162.1 269.4 159.5 271.2 156.9 273.3 154.1 275.7 151.2 278.5 148.3 281.5 145.4 284.8 142.6 288.2 139.8 291.8 137.1 295.5 134.5 299.2 132.1 303.0 129.9 306.7 128.0 310.4 126.3 313.9 124.8 317.2 123.7 320.3 122.8 323.2 122.3 325.8 122.1 328.0 122.2 329.9 122.7 331.4 123.4M268.6 172.6L267.5 171.1 266.8 169.4 266.5 167.4 266.6 165.2 267.2 162.7 268.1 160.1 269.5 157.3 271.3 154.4 273.4 151.4 275.8 148.4 278.6 145.4 281.6 142.4 284.9 139.4 288.3 136.6 291.9 133.9 295.6 131.4 299.3 129.2 303.1 127.1 306.8 125.3 310.4 123.8 313.9 122.6 317.3 121.7 320.4 121.2 323.2 120.9 325.8 121.1 328.0 121.5 329.9 122.3 331.4 123.4" fill="none" stroke="#c6c6c6" stroke-width="0.6"/><path d="M269.7 169.6L270.1 169.6 270.6 169.8 271.1 170.1 271.6 170.7 272.1 171.4 272.5 172.2 272.9 173.1 273.2 174.1 273.4 175.0 273.5 175.9 273.4 176.6 273.3 177.2 273.0 177.7 272.7 177.9 272.2 177.9 271.8 177.8 271.2 177.4 270.7 176.8 270.2 176.1 269.8 175.3 269.4 174.4 269.1 173.5 268.9 172.6 268.9 171.7 268.9 170.9 269.0 170.3 269.3 169.9 269.7 169.6M272.2 164.4L273.0 164.3 273.9 164.6 274.9 165.3 275.9 166.4 276.9 167.8 277.7 169.4 278.4 171.1 279.0 172.9 279.4 174.7 279.5 176.4 279.5 177.8 279.2 179.0 278.7 179.9 278.0 180.3 277.2 180.4 276.2 180.1 275.2 179.4 274.2 178.3 273.3 176.9 272.4 175.3 271.7 173.6 271.1 171.8 270.8 170.0 270.6 168.3 270.7 166.9 271.0 165.7 271.5 164.8 272.2 164.4M277.2 158.8L278.4 158.7 279.7 159.2 281.1 160.2 282.5 161.7 283.8 163.6 285.0 165.9 286.1 168.3 286.9 170.9 287.4 173.4 287.6 175.8 287.5 177.8 287.1 179.5 286.4 180.7 285.4 181.4 284.2 181.5 282.9 181.0 281.5 180.0 280.1 178.5 278.8 176.5 277.6 174.3 276.5 171.8 275.7 169.3 275.2 166.7 275.0 164.4 275.1 162.3 275.5 160.7 276.2 159.5 277.2 158.8M284.4 153.3L285.8 153.2 287.4 153.7 289.1 155.0 290.8 156.8 292.5 159.2 294.0 162.0 295.3 165.0 296.2 168.1 296.9 171.2 297.1 174.1 297.0 176.6 296.5 178.7 295.6 180.1 294.4 181.0 293.0 181.1 291.4 180.5 289.7 179.3 288.0 177.4 286.3 175.0 284.8 172.3 283.6 169.3 282.6 166.1 282.0 163.0 281.7 160.2 281.8 157.6 282.3 155.6 283.2 154.1 284.4 153.3M293.2 148.3L294.8 148.1 296.6 148.8 298.5 150.1 300.5 152.2 302.3 154.9 304.0 157.9 305.4 161.3 306.5 164.8 307.2 168.2 307.5 171.5 307.3 174.3 306.8 176.6 305.8 178.2 304.5 179.1 302.9 179.3 301.1 178.6 299.2 177.2 297.3 175.2 295.4 172.5 293.8 169.4 292.3 166.1 291.3 162.6 290.5 159.1 290.3 155.9 290.4 153.1 291.0 150.8 291.9 149.2 293.2 148.3M303.2 144.0L304.8 143.9 306.7 144.5 308.7 146.0 310.7 148.1 312.6 150.9 314.3 154.0 315.8 157.5 316.9 161.2 317.6 164.7 317.9 168.0 317.8 171.0 317.2 173.3 316.2 175.0 314.8 176.0 313.2 176.1 311.3 175.5 309.3 174.0 307.3 171.9 305.4 169.1 303.7 166.0 302.2 162.5 301.1 158.8 300.4 155.3 300.1 152.0 300.2 149.0 300.8 146.7 301.8 145.0 303.2 144.0M313.5 140.9L315.1 140.7 316.9 141.4 318.8 142.8 320.7 144.8 322.6 147.5 324.2 150.6 325.7 153.9 326.7 157.4 327.5 160.9 327.7 164.1 327.6 166.9 327.0 169.2 326.1 170.8 324.8 171.7 323.2 171.9 321.4 171.2 319.5 169.9 317.5 167.8 315.7 165.1 314.0 162.1 312.6 158.7 311.5 155.2 310.8 151.8 310.5 148.5 310.7 145.7 311.2 143.4 312.2 141.8 313.5 140.9M323.6 139.0L325.0 138.9 326.6 139.5 328.3 140.7 330.0 142.6 331.7 145.0 333.2 147.7 334.4 150.7 335.4 153.9 336.0 157.0 336.3 159.8 336.2 162.4 335.7 164.4 334.8 165.9 333.6 166.7 332.2 166.8 330.6 166.3 328.9 165.0 327.2 163.2 325.5 160.8 324.0 158.0 322.7 155.0 321.8 151.9 321.1 148.8 320.9 145.9 321.0 143.4 321.5 141.3 322.4 139.9 323.6 139.0M332.6 138.6L333.8 138.5 335.1 139.0 336.5 140.0 337.9 141.5 339.2 143.5 340.4 145.7 341.5 148.2 342.3 150.7 342.8 153.3 343.0 155.6 342.9 157.7 342.5 159.3 341.8 160.5 340.8 161.2 339.6 161.3 338.3 160.8 336.9 159.8 335.5 158.3 334.2 156.4 333.0 154.1 331.9 151.7 331.1 149.1 330.6 146.6 330.4 144.2 330.5 142.2 330.9 140.5 331.6 139.3 332.6 138.6M340.0 139.7L340.8 139.6 341.8 139.9 342.8 140.6 343.8 141.7 344.7 143.1 345.6 144.7 346.3 146.4 346.9 148.2 347.2 150.0 347.4 151.7 347.3 153.1 347.0 154.3 346.5 155.2 345.8 155.6 345.0 155.7 344.1 155.4 343.1 154.7 342.1 153.6 341.1 152.2 340.3 150.6 339.6 148.9 339.0 147.1 338.6 145.3 338.5 143.6 338.5 142.2 338.8 141.0 339.3 140.1 340.0 139.7M345.3 142.1L345.8 142.1 346.2 142.2 346.8 142.6 347.3 143.2 347.8 143.9 348.2 144.7 348.6 145.6 348.9 146.5 349.1 147.4 349.1 148.3 349.1 149.1 349.0 149.7 348.7 150.1 348.3 150.4 347.9 150.4 347.4 150.2 346.9 149.9 346.4 149.3 345.9 148.6 345.5 147.8 345.1 146.9 344.8 145.9 344.6 145.0 344.5 144.1 344.6 143.4 344.7 142.8 345.0 142.3 345.3 142.1M269.8 174.3L269.4 172.4 269.5 170.3 270.1 168.2 271.2 165.9 272.7 163.6 274.7 161.2 277.2 158.8 280.0 156.4 283.2 154.1 286.8 151.8 290.6 149.6 294.6 147.6 298.8 145.7 303.2 144.0 307.6 142.5 312.0 141.3 316.5 140.2 320.8 139.4 324.9 138.9 328.9 138.6 332.6 138.6 336.0 138.9 339.1 139.4 341.8 140.2 344.1 141.3 345.9 142.5 347.3 144.0 348.2 145.7M269.8 174.3L269.7 172.4 270.0 170.4 270.9 168.2 272.2 165.9 274.0 163.6 276.2 161.2 278.9 158.8 281.9 156.4 285.2 154.1 288.9 151.8 292.8 149.7 296.9 147.6 301.2 145.7 305.6 144.0 310.0 142.6 314.4 141.3 318.7 140.2 322.9 139.4 326.9 138.9 330.7 138.6 334.3 138.6 337.5 138.9 340.3 139.4 342.8 140.2 344.8 141.3 346.4 142.5 347.5 144.0 348.2 145.7M269.8 174.3L270.0 172.6 270.6 170.7 271.8 168.7 273.4 166.6 275.4 164.4 277.9 162.2 280.8 159.9 284.0 157.7 287.5 155.4 291.3 153.2 295.4 151.1 299.6 149.2 303.9 147.3 308.3 145.6 312.7 144.1 317.0 142.8 321.2 141.7 325.3 140.9 329.2 140.2 332.9 139.9 336.2 139.8 339.2 139.9 341.8 140.3 344.0 140.9 345.7 141.8 347.0 142.9 347.8 144.2 348.2 145.7M269.8 174.3L270.3 172.9 271.3 171.4 272.7 169.7 274.6 167.9 276.9 166.0 279.6 164.1 282.7 162.0 286.2 160.0 289.9 158.0 293.8 155.9 298.0 154.0 302.3 152.1 306.6 150.3 311.0 148.6 315.4 147.1 319.7 145.7 323.9 144.6 327.8 143.6 331.6 142.8 335.0 142.2 338.1 141.9 340.9 141.8 343.3 141.9 345.2 142.2 346.7 142.8 347.6 143.6 348.2 144.6 348.2 145.7M269.8 174.3L270.6 173.4 271.8 172.3 273.5 171.1 275.7 169.7 278.3 168.2 281.3 166.6 284.6 164.9 288.2 163.2 292.1 161.4 296.2 159.6 300.4 157.8 304.8 156.1 309.2 154.4 313.6 152.7 318.0 151.2 322.2 149.7 326.3 148.4 330.2 147.3 333.8 146.3 337.0 145.4 340.0 144.8 342.5 144.3 344.6 144.1 346.3 144.0 347.5 144.1 348.2 144.5 348.4 145.0 348.2 145.7M269.8 174.3L270.8 173.9 272.3 173.4 274.3 172.6 276.6 171.8 279.4 170.8 282.6 169.6 286.1 168.3 289.9 167.0 293.9 165.5 298.1 164.0 302.4 162.4 306.9 160.8 311.3 159.2 315.8 157.5 320.1 156.0 324.3 154.4 328.3 153.0 332.1 151.6 335.6 150.3 338.7 149.2 341.5 148.2 343.8 147.3 345.8 146.6 347.2 146.1 348.2 145.7 348.7 145.6 348.7 145.6 348.2 145.7M269.8 174.3L271.0 174.5 272.6 174.5 274.7 174.3 277.3 174.0 280.2 173.5 283.5 172.8 287.1 171.9 291.0 170.9 295.1 169.8 299.4 168.5 303.8 167.2 308.3 165.7 312.8 164.2 317.2 162.6 321.6 161.0 325.7 159.4 329.7 157.7 333.4 156.2 336.8 154.6 339.9 153.1 342.5 151.8 344.8 150.5 346.5 149.3 347.9 148.3 348.7 147.4 349.0 146.7 348.8 146.1 348.2 145.7M269.8 174.3L271.1 175.0 272.8 175.5 275.0 175.9 277.6 176.1 280.6 176.0 283.9 175.8 287.6 175.3 291.5 174.7 295.7 173.9 300.0 172.9 304.4 171.7 308.9 170.4 313.4 169.0 317.9 167.4 322.2 165.8 326.4 164.0 330.3 162.3 334.0 160.5 337.4 158.7 340.4 156.9 343.0 155.2 345.2 153.5 346.9 151.9 348.1 150.4 348.9 149.0 349.2 147.7 348.9 146.7 348.2 145.7M269.8 174.3L271.0 175.5 272.7 176.5 274.9 177.3 277.5 177.8 280.4 178.2 283.8 178.3 287.4 178.2 291.4 177.9 295.5 177.3 299.8 176.5 304.2 175.5 308.7 174.4 313.2 173.0 317.7 171.5 322.0 169.8 326.2 168.0 330.1 166.1 333.8 164.2 337.2 162.1 340.2 160.1 342.8 158.0 345.0 156.0 346.8 154.0 348.1 152.1 348.8 150.3 349.1 148.7 348.9 147.1 348.2 145.7M269.8 174.3L270.9 175.8 272.5 177.1 274.5 178.2 277.0 179.1 279.9 179.8 283.1 180.1 286.7 180.3 290.5 180.2 294.6 179.8 298.9 179.2 303.2 178.3 307.7 177.2 312.2 175.9 316.6 174.4 321.0 172.7 325.1 170.9 329.1 168.9 332.9 166.8 336.3 164.6 339.4 162.4 342.1 160.1 344.4 157.9 346.2 155.6 347.6 153.4 348.5 151.3 348.9 149.3 348.8 147.4 348.2 145.7M269.8 174.3L270.7 176.0 272.1 177.5 273.9 178.7 276.2 179.8 278.9 180.6 282.0 181.1 285.4 181.4 289.1 181.4 293.1 181.1 297.2 180.6 301.5 179.8 306.0 178.7 310.4 177.5 314.8 176.0 319.2 174.3 323.4 172.4 327.4 170.4 331.2 168.2 334.8 165.9 338.0 163.6 340.8 161.2 343.3 158.8 345.3 156.4 346.8 154.1 347.9 151.8 348.5 149.7 348.6 147.6 348.2 145.7M269.8 174.3L270.5 176.0 271.6 177.5 273.2 178.7 275.2 179.8 277.7 180.6 280.5 181.1 283.7 181.4 287.3 181.4 291.1 181.1 295.1 180.6 299.3 179.8 303.6 178.7 308.0 177.4 312.4 176.0 316.8 174.3 321.1 172.4 325.2 170.3 329.1 168.2 332.8 165.9 336.1 163.6 339.1 161.2 341.8 158.8 344.0 156.4 345.8 154.1 347.1 151.8 348.0 149.6 348.3 147.6 348.2 145.7M269.8 174.3L270.2 175.8 271.0 177.1 272.3 178.2 274.0 179.1 276.2 179.7 278.8 180.1 281.8 180.2 285.1 180.1 288.8 179.8 292.7 179.1 296.8 178.3 301.0 177.2 305.3 175.9 309.7 174.4 314.1 172.7 318.4 170.8 322.6 168.9 326.7 166.8 330.5 164.6 334.0 162.3 337.2 160.1 340.1 157.8 342.6 155.6 344.6 153.4 346.2 151.3 347.4 149.3 348.0 147.4 348.2 145.7M269.8 174.3L269.8 175.4 270.4 176.4 271.3 177.2 272.8 177.8 274.7 178.1 277.1 178.2 279.9 178.1 283.0 177.8 286.4 177.2 290.2 176.4 294.1 175.4 298.3 174.3 302.6 172.9 307.0 171.4 311.4 169.7 315.7 167.9 320.0 166.0 324.2 164.1 328.1 162.0 331.8 160.0 335.3 158.0 338.4 155.9 341.1 154.0 343.4 152.1 345.3 150.3 346.7 148.6 347.7 147.1 348.2 145.7M269.8 174.3L269.6 175.0 269.8 175.5 270.5 175.9 271.7 176.0 273.4 175.9 275.5 175.7 278.0 175.2 281.0 174.6 284.2 173.7 287.8 172.7 291.7 171.6 295.8 170.3 300.0 168.8 304.4 167.3 308.8 165.6 313.2 163.9 317.6 162.2 321.8 160.4 325.9 158.6 329.8 156.8 333.4 155.1 336.7 153.4 339.7 151.8 342.3 150.3 344.5 148.9 346.2 147.7 347.4 146.6 348.2 145.7M269.8 174.3L269.3 174.4 269.3 174.4 269.8 174.3 270.8 173.9 272.2 173.4 274.2 172.7 276.5 171.8 279.3 170.8 282.4 169.7 285.9 168.4 289.7 167.0 293.7 165.6 297.9 164.0 302.2 162.5 306.7 160.8 311.1 159.2 315.6 157.6 319.9 156.0 324.1 154.5 328.1 153.0 331.9 151.7 335.4 150.4 338.6 149.2 341.4 148.2 343.7 147.4 345.7 146.6 347.2 146.1 348.2 145.7M269.8 174.3L269.2 173.9 269.0 173.3 269.3 172.6 270.1 171.7 271.5 170.7 273.2 169.5 275.5 168.2 278.1 166.9 281.2 165.4 284.6 163.8 288.3 162.3 292.3 160.6 296.4 159.0 300.8 157.4 305.2 155.8 309.7 154.3 314.2 152.8 318.6 151.5 322.9 150.2 327.0 149.1 330.9 148.1 334.5 147.2 337.8 146.5 340.7 146.0 343.3 145.7 345.4 145.5 347.0 145.5 348.2 145.7M269.8 174.3L269.1 173.3 268.8 172.3 269.1 171.0 269.9 169.6 271.1 168.1 272.8 166.5 275.0 164.8 277.6 163.1 280.6 161.3 284.0 159.5 287.7 157.7 291.6 156.0 295.8 154.2 300.1 152.6 304.6 151.0 309.1 149.6 313.6 148.3 318.0 147.1 322.3 146.1 326.5 145.3 330.4 144.7 334.1 144.2 337.4 144.0 340.4 143.9 343.0 144.1 345.2 144.5 346.9 145.0 348.2 145.7M269.8 174.3L269.1 172.9 268.9 171.3 269.2 169.7 269.9 167.9 271.2 166.0 273.0 164.0 275.2 162.0 277.8 159.9 280.8 157.9 284.2 155.8 287.9 153.9 291.8 152.0 296.0 150.2 300.3 148.5 304.8 147.0 309.3 145.6 313.8 144.5 318.2 143.5 322.5 142.7 326.6 142.1 330.6 141.8 334.2 141.7 337.6 141.8 340.5 142.2 343.1 142.7 345.3 143.5 347.0 144.5 348.2 145.7M269.8 174.3L269.2 172.6 269.1 170.7 269.5 168.7 270.4 166.6 271.8 164.4 273.6 162.1 275.9 159.9 278.6 157.6 281.7 155.4 285.1 153.2 288.9 151.1 292.9 149.1 297.0 147.3 301.4 145.6 305.8 144.1 310.3 142.8 314.8 141.7 319.1 140.8 323.4 140.2 327.5 139.8 331.3 139.7 334.9 139.9 338.1 140.2 341.0 140.9 343.5 141.8 345.5 142.9 347.1 144.2 348.2 145.7" fill="none" stroke="#c6c6c6" stroke-width="0.6"/><path d="M266.9 171.5L267.1 171.5 267.3 171.7 267.5 172.0 267.7 172.3 267.9 172.8 268.0 173.4 268.1 173.9 268.2 174.5 268.2 175.0 268.1 175.5 268.1 176.0 267.9 176.3 267.8 176.5 267.6 176.6 267.4 176.6 267.2 176.4 267.0 176.1 266.8 175.7 266.6 175.3 266.5 174.7 266.4 174.2 266.3 173.6 266.3 173.0 266.3 172.5 266.4 172.1 266.5 171.8 266.7 171.6 266.9 171.5M269.5 168.7L269.9 168.7 270.3 169.1 270.7 169.6 271.1 170.4 271.4 171.3 271.7 172.3 271.9 173.4 272.0 174.5 272.0 175.6 272.0 176.5 271.8 177.3 271.6 178.0 271.3 178.4 270.9 178.6 270.5 178.5 270.1 178.2 269.7 177.6 269.3 176.9 269.0 176.0 268.7 175.0 268.5 173.9 268.4 172.8 268.4 171.7 268.5 170.7 268.6 169.9 268.9 169.3 269.2 168.9 269.5 168.7M274.0 166.0L274.5 166.1 275.1 166.5 275.7 167.3 276.2 168.3 276.7 169.6 277.1 171.1 277.3 172.6 277.5 174.2 277.5 175.7 277.4 177.1 277.2 178.2 276.9 179.1 276.4 179.7 275.9 180.0 275.4 179.9 274.8 179.4 274.2 178.6 273.7 177.6 273.2 176.3 272.8 174.8 272.5 173.3 272.4 171.7 272.4 170.2 272.5 168.9 272.7 167.7 273.0 166.8 273.5 166.2 274.0 166.0M279.9 163.5L280.6 163.6 281.3 164.2 282.0 165.1 282.7 166.4 283.2 168.0 283.7 169.8 284.0 171.7 284.2 173.6 284.3 175.4 284.2 177.1 283.9 178.5 283.5 179.6 282.9 180.4 282.3 180.7 281.6 180.5 280.9 180.0 280.2 179.1 279.6 177.8 279.0 176.2 278.5 174.4 278.2 172.5 278.0 170.6 277.9 168.7 278.1 167.1 278.3 165.6 278.8 164.5 279.3 163.8 279.9 163.5M286.9 161.5L287.7 161.7 288.5 162.3 289.3 163.3 290.0 164.8 290.7 166.5 291.2 168.5 291.6 170.6 291.8 172.8 291.8 174.8 291.7 176.7 291.4 178.3 290.9 179.5 290.3 180.3 289.6 180.6 288.9 180.5 288.1 179.9 287.3 178.8 286.6 177.4 285.9 175.6 285.4 173.7 285.0 171.5 284.8 169.4 284.8 167.3 284.9 165.5 285.2 163.9 285.7 162.7 286.3 161.9 286.9 161.5M294.6 160.1L295.4 160.2 296.2 160.9 297.0 162.0 297.8 163.5 298.4 165.3 299.0 167.3 299.4 169.5 299.6 171.7 299.7 173.9 299.5 175.8 299.2 177.4 298.7 178.7 298.1 179.5 297.4 179.9 296.6 179.8 295.8 179.1 295.0 178.0 294.2 176.5 293.6 174.7 293.0 172.7 292.6 170.5 292.4 168.3 292.3 166.1 292.5 164.2 292.8 162.6 293.3 161.3 293.9 160.5 294.6 160.1M302.4 159.4L303.1 159.5 303.9 160.1 304.7 161.2 305.4 162.6 306.1 164.4 306.6 166.3 307.0 168.5 307.2 170.6 307.2 172.7 307.1 174.5 306.8 176.1 306.3 177.3 305.7 178.1 305.1 178.5 304.3 178.3 303.5 177.7 302.7 176.7 302.0 175.2 301.3 173.5 300.8 171.5 300.4 169.4 300.2 167.2 300.2 165.2 300.3 163.3 300.6 161.7 301.1 160.5 301.7 159.7 302.4 159.4M309.7 159.3L310.4 159.5 311.1 160.0 311.8 160.9 312.4 162.2 313.0 163.8 313.5 165.6 313.8 167.5 314.0 169.4 314.1 171.3 313.9 172.9 313.7 174.4 313.2 175.5 312.7 176.2 312.1 176.5 311.4 176.4 310.7 175.8 310.0 174.9 309.3 173.6 308.8 172.0 308.3 170.2 308.0 168.3 307.8 166.4 307.7 164.6 307.8 162.9 308.1 161.5 308.5 160.4 309.1 159.6 309.7 159.3M316.1 160.0L316.6 160.1 317.2 160.6 317.8 161.4 318.3 162.4 318.8 163.7 319.2 165.2 319.5 166.7 319.6 168.3 319.6 169.8 319.5 171.1 319.3 172.3 319.0 173.2 318.5 173.8 318.0 174.0 317.5 173.9 316.9 173.5 316.3 172.7 315.8 171.7 315.3 170.4 314.9 168.9 314.7 167.4 314.5 165.8 314.5 164.3 314.6 162.9 314.8 161.8 315.1 160.9 315.6 160.3 316.1 160.0M321.1 161.4L321.5 161.5 321.9 161.8 322.3 162.4 322.7 163.1 323.0 164.0 323.3 165.0 323.5 166.1 323.6 167.2 323.6 168.3 323.5 169.3 323.4 170.1 323.1 170.7 322.8 171.1 322.5 171.3 322.1 171.3 321.7 170.9 321.3 170.4 320.9 169.6 320.6 168.7 320.3 167.7 320.1 166.6 320.0 165.5 320.0 164.4 320.0 163.5 320.2 162.7 320.4 162.0 320.7 161.6 321.1 161.4M324.4 163.4L324.6 163.4 324.8 163.6 325.0 163.9 325.2 164.3 325.4 164.7 325.5 165.3 325.6 165.8 325.7 166.4 325.7 167.0 325.7 167.5 325.6 167.9 325.5 168.2 325.3 168.4 325.1 168.5 324.9 168.5 324.7 168.3 324.5 168.0 324.3 167.7 324.1 167.2 324.0 166.6 323.9 166.1 323.8 165.5 323.8 165.0 323.9 164.5 323.9 164.0 324.1 163.7 324.2 163.5 324.4 163.4M266.2 174.2L266.3 173.0 266.7 171.9 267.4 170.7 268.6 169.5 270.0 168.3 271.9 167.1 274.0 166.0 276.3 164.9 279.0 163.8 281.8 162.9 284.9 162.0 288.0 161.3 291.3 160.6 294.6 160.1 298.0 159.7 301.3 159.4 304.5 159.3 307.7 159.3 310.7 159.4 313.5 159.6 316.1 160.0 318.4 160.6 320.5 161.2 322.2 161.9 323.6 162.8 324.7 163.7 325.4 164.7 325.8 165.8M266.2 174.2L266.4 173.1 266.9 172.0 267.8 170.8 269.1 169.6 270.6 168.5 272.5 167.3 274.7 166.2 277.2 165.1 279.9 164.1 282.8 163.2 285.9 162.4 289.1 161.6 292.4 161.0 295.7 160.4 299.1 160.0 302.4 159.7 305.6 159.6 308.7 159.6 311.6 159.7 314.3 159.9 316.9 160.3 319.1 160.8 321.1 161.4 322.7 162.1 324.0 162.9 325.0 163.8 325.6 164.8 325.8 165.8M266.2 174.2L266.5 173.2 267.2 172.2 268.2 171.2 269.5 170.2 271.2 169.1 273.3 168.1 275.6 167.1 278.1 166.1 280.9 165.2 283.9 164.3 287.0 163.6 290.2 162.8 293.5 162.2 296.9 161.7 300.2 161.3 303.5 161.0 306.7 160.8 309.7 160.7 312.6 160.8 315.2 160.9 317.7 161.2 319.8 161.6 321.7 162.0 323.2 162.6 324.4 163.3 325.2 164.1 325.7 164.9 325.8 165.8M266.2 174.2L266.6 173.5 267.4 172.7 268.5 171.9 270.0 171.1 271.8 170.2 273.9 169.4 276.3 168.6 278.9 167.8 281.8 167.0 284.8 166.2 288.0 165.5 291.2 164.9 294.6 164.3 297.9 163.8 301.2 163.4 304.5 163.0 307.6 162.8 310.7 162.6 313.5 162.5 316.1 162.5 318.4 162.7 320.5 162.9 322.2 163.2 323.7 163.5 324.7 164.0 325.5 164.5 325.8 165.1 325.8 165.8M266.2 174.2L266.7 173.8 267.6 173.3 268.8 172.8 270.4 172.2 272.3 171.7 274.5 171.1 276.9 170.5 279.6 169.9 282.5 169.3 285.6 168.7 288.8 168.1 292.1 167.5 295.4 167.0 298.8 166.5 302.1 166.0 305.3 165.6 308.5 165.3 311.4 165.0 314.2 164.8 316.7 164.6 319.0 164.6 321.0 164.5 322.7 164.6 324.0 164.7 325.0 164.9 325.7 165.1 325.9 165.4 325.8 165.8M266.2 174.2L266.8 174.1 267.7 174.0 269.0 173.8 270.6 173.6 272.6 173.3 274.8 173.0 277.3 172.6 280.1 172.2 283.0 171.8 286.1 171.4 289.4 170.9 292.7 170.5 296.0 170.0 299.4 169.5 302.7 169.1 305.9 168.6 309.0 168.2 312.0 167.8 314.7 167.4 317.2 167.0 319.5 166.7 321.4 166.4 323.0 166.2 324.3 166.0 325.2 165.9 325.8 165.8 326.0 165.8 325.8 165.8M266.2 174.2L266.8 174.5 267.8 174.7 269.1 174.8 270.8 174.9 272.7 174.9 275.0 174.9 277.5 174.8 280.3 174.6 283.2 174.4 286.4 174.2 289.6 173.8 292.9 173.5 296.3 173.1 299.7 172.6 303.0 172.1 306.2 171.6 309.3 171.1 312.2 170.5 314.9 170.0 317.4 169.4 319.6 168.9 321.6 168.4 323.2 167.8 324.4 167.4 325.3 166.9 325.8 166.5 326.0 166.1 325.8 165.8M266.2 174.2L266.8 174.8 267.8 175.3 269.1 175.7 270.7 176.1 272.7 176.4 274.9 176.7 277.5 176.8 280.2 176.9 283.2 176.8 286.3 176.7 289.5 176.5 292.8 176.2 296.2 175.9 299.6 175.4 302.9 174.9 306.1 174.4 309.2 173.7 312.1 173.1 314.9 172.4 317.3 171.6 319.6 170.9 321.5 170.1 323.1 169.3 324.4 168.6 325.3 167.8 325.8 167.1 326.0 166.4 325.8 165.8M266.2 174.2L266.8 175.0 267.7 175.8 268.9 176.5 270.5 177.1 272.4 177.7 274.7 178.1 277.1 178.4 279.9 178.7 282.8 178.8 285.9 178.8 289.1 178.7 292.4 178.5 295.8 178.2 299.1 177.7 302.4 177.2 305.7 176.6 308.8 175.9 311.7 175.2 314.5 174.3 317.0 173.4 319.3 172.5 321.2 171.5 322.9 170.6 324.2 169.6 325.1 168.6 325.7 167.6 325.9 166.7 325.8 165.8M266.2 174.2L266.7 175.2 267.5 176.1 268.7 177.0 270.2 177.8 272.0 178.5 274.2 179.1 276.6 179.5 279.3 179.9 282.2 180.1 285.2 180.2 288.4 180.1 291.7 180.0 295.0 179.7 298.4 179.3 301.7 178.7 304.9 178.1 308.1 177.4 311.1 176.5 313.8 175.6 316.4 174.6 318.7 173.6 320.8 172.5 322.5 171.4 323.9 170.3 324.9 169.1 325.6 168.0 325.9 166.9 325.8 165.8M266.2 174.2L266.6 175.3 267.3 176.3 268.4 177.2 269.8 178.1 271.5 178.8 273.6 179.4 275.9 180.0 278.5 180.4 281.3 180.6 284.3 180.7 287.5 180.7 290.7 180.6 294.0 180.3 297.4 179.9 300.7 179.4 304.0 178.7 307.1 178.0 310.2 177.1 313.0 176.2 315.7 175.1 318.0 174.0 320.1 172.9 322.0 171.7 323.4 170.5 324.6 169.3 325.3 168.1 325.7 167.0 325.8 165.8M266.2 174.2L266.4 175.2 267.0 176.2 268.0 177.1 269.3 177.9 270.9 178.6 272.9 179.2 275.1 179.7 277.7 180.1 280.4 180.3 283.3 180.4 286.4 180.4 289.6 180.3 292.9 180.0 296.3 179.6 299.6 179.0 302.9 178.4 306.1 177.6 309.2 176.8 312.1 175.9 314.8 174.9 317.3 173.8 319.5 172.7 321.4 171.5 322.9 170.4 324.2 169.2 325.1 168.0 325.6 166.9 325.8 165.8M266.2 174.2L266.3 175.1 266.8 175.9 267.6 176.7 268.8 177.4 270.3 178.0 272.2 178.4 274.3 178.8 276.8 179.1 279.4 179.2 282.3 179.3 285.3 179.2 288.5 179.0 291.8 178.7 295.1 178.3 298.5 177.8 301.8 177.2 305.0 176.4 308.1 175.7 311.1 174.8 313.9 173.9 316.4 172.9 318.7 171.9 320.8 170.9 322.5 169.8 323.8 168.8 324.8 167.8 325.5 166.8 325.8 165.8M266.2 174.2L266.2 174.9 266.5 175.5 267.3 176.0 268.3 176.5 269.8 176.8 271.5 177.1 273.6 177.3 275.9 177.5 278.5 177.5 281.3 177.4 284.4 177.2 287.5 177.0 290.8 176.6 294.1 176.2 297.4 175.7 300.8 175.1 304.0 174.5 307.2 173.8 310.2 173.0 313.1 172.2 315.7 171.4 318.1 170.6 320.2 169.8 322.0 168.9 323.5 168.1 324.6 167.3 325.4 166.5 325.8 165.8M266.2 174.2L266.1 174.6 266.3 174.9 267.0 175.1 268.0 175.3 269.3 175.4 271.0 175.5 273.0 175.4 275.3 175.4 277.8 175.2 280.6 175.0 283.5 174.7 286.7 174.4 289.9 174.0 293.2 173.5 296.6 173.0 299.9 172.5 303.2 171.9 306.4 171.3 309.5 170.7 312.4 170.1 315.1 169.5 317.5 168.9 319.7 168.3 321.6 167.8 323.2 167.2 324.4 166.7 325.3 166.2 325.8 165.8M266.2 174.2L266.0 174.2 266.2 174.2 266.8 174.1 267.7 174.0 269.0 173.8 270.6 173.6 272.5 173.3 274.8 173.0 277.3 172.6 280.0 172.2 283.0 171.8 286.1 171.4 289.3 170.9 292.6 170.5 296.0 170.0 299.3 169.5 302.6 169.1 305.9 168.6 309.0 168.2 311.9 167.8 314.7 167.4 317.2 167.0 319.4 166.7 321.4 166.4 323.0 166.2 324.3 166.0 325.2 165.9 325.8 165.8M266.2 174.2L266.0 173.9 266.2 173.5 266.7 173.1 267.6 172.6 268.8 172.2 270.4 171.6 272.4 171.1 274.6 170.6 277.1 170.0 279.8 169.5 282.7 168.9 285.8 168.4 289.0 167.9 292.3 167.4 295.7 166.9 299.1 166.5 302.4 166.2 305.6 165.8 308.8 165.6 311.7 165.4 314.5 165.2 317.0 165.1 319.3 165.1 321.2 165.1 322.9 165.2 324.2 165.3 325.2 165.5 325.8 165.8M266.2 174.2L266.0 173.6 266.2 172.9 266.7 172.2 267.6 171.4 268.9 170.7 270.5 169.9 272.4 169.1 274.7 168.4 277.1 167.6 279.9 166.9 282.8 166.3 285.9 165.6 289.1 165.1 292.4 164.6 295.8 164.1 299.2 163.8 302.5 163.5 305.7 163.3 308.8 163.2 311.8 163.1 314.5 163.2 317.1 163.3 319.3 163.6 321.3 163.9 322.9 164.3 324.2 164.7 325.2 165.2 325.8 165.8M266.2 174.2L266.1 173.3 266.3 172.4 266.9 171.4 267.8 170.4 269.1 169.4 270.8 168.5 272.7 167.5 275.0 166.6 277.5 165.7 280.3 164.8 283.2 164.1 286.3 163.4 289.6 162.8 292.9 162.3 296.2 161.8 299.6 161.5 302.9 161.3 306.1 161.2 309.2 161.2 312.1 161.3 314.9 161.6 317.3 161.9 319.6 162.3 321.5 162.9 323.1 163.5 324.3 164.2 325.2 165.0 325.8 165.8M266.2 174.2L266.1 173.1 266.4 172.0 267.1 170.9 268.1 169.7 269.5 168.6 271.2 167.5 273.3 166.4 275.6 165.4 278.2 164.4 280.9 163.5 283.9 162.6 287.1 161.9 290.3 161.3 293.6 160.7 297.0 160.3 300.3 160.0 303.6 159.9 306.8 159.8 309.8 159.9 312.7 160.1 315.4 160.5 317.8 160.9 320.0 161.5 321.8 162.2 323.3 163.0 324.5 163.9 325.3 164.8 325.8 165.8" fill="none" stroke="#c6c6c6" stroke-width="0.6"/><path d="M235.0 125.7L235.2 126.1 235.2 126.7 235.0 127.3 234.7 127.9 234.2 128.6 233.6 129.2 232.8 129.8 232.0 130.3 231.2 130.6 230.5 130.9 229.7 131.0 229.1 130.9 228.6 130.8 228.3 130.4 228.1 130.0 228.1 129.5 228.3 128.9 228.6 128.2 229.1 127.6 229.7 126.9 230.5 126.4 231.2 125.9 232.0 125.5 232.8 125.3 233.6 125.2 234.2 125.2 234.7 125.4 235.0 125.7M239.8 125.8L240.1 126.6 240.1 127.6 239.8 128.8 239.1 130.0 238.1 131.3 236.9 132.5 235.5 133.6 234.0 134.6 232.5 135.3 230.9 135.8 229.5 136.0 228.3 135.9 227.4 135.5 226.7 134.9 226.3 134.1 226.3 133.1 226.7 131.9 227.4 130.6 228.3 129.4 229.5 128.2 230.9 127.1 232.5 126.1 234.0 125.4 235.5 124.9 236.9 124.7 238.1 124.8 239.1 125.1 239.8 125.8M245.0 127.5L245.5 128.7 245.5 130.1 245.0 131.8 244.1 133.5 242.7 135.3 241.0 137.0 239.0 138.6 236.9 139.9 234.7 140.9 232.5 141.6 230.5 141.9 228.8 141.8 227.4 141.3 226.5 140.4 226.0 139.2 226.0 137.8 226.5 136.1 227.4 134.4 228.8 132.6 230.5 130.9 232.5 129.3 234.7 128.0 236.9 127.0 239.0 126.3 241.0 126.0 242.7 126.1 244.1 126.6 245.0 127.5M250.4 130.7L251.0 132.2 251.0 134.0 250.4 136.0 249.2 138.1 247.6 140.3 245.5 142.4 243.0 144.3 240.4 146.0 237.7 147.2 235.1 148.0 232.7 148.4 230.6 148.3 228.9 147.7 227.7 146.6 227.1 145.1 227.1 143.3 227.7 141.3 228.9 139.2 230.5 137.0 232.7 134.9 235.1 133.0 237.7 131.3 240.4 130.1 243.0 129.3 245.4 128.9 247.6 129.0 249.2 129.6 250.4 130.7M255.5 135.3L256.2 136.9 256.2 138.9 255.5 141.1 254.2 143.5 252.4 146.0 250.0 148.3 247.3 150.5 244.4 152.3 241.4 153.7 238.5 154.6 235.8 155.0 233.4 154.9 231.5 154.2 230.2 153.0 229.6 151.4 229.6 149.4 230.2 147.1 231.5 144.7 233.4 142.3 235.7 139.9 238.5 137.8 241.4 136.0 244.4 134.6 247.3 133.6 250.0 133.2 252.4 133.4 254.2 134.1 255.5 135.3M260.1 140.8L260.8 142.5 260.8 144.6 260.1 146.9 258.8 149.4 256.8 151.9 254.4 154.3 251.6 156.6 248.6 158.4 245.4 159.9 242.4 160.8 239.6 161.3 237.2 161.1 235.2 160.4 233.9 159.2 233.2 157.5 233.2 155.4 233.9 153.1 235.2 150.6 237.2 148.1 239.6 145.7 242.4 143.4 245.4 141.6 248.6 140.1 251.6 139.2 254.4 138.7 256.8 138.9 258.8 139.6 260.1 140.8M263.8 147.0L264.4 148.6 264.4 150.6 263.8 152.9 262.5 155.3 260.6 157.7 258.3 160.1 255.5 162.2 252.6 164.0 249.6 165.4 246.7 166.4 244.0 166.8 241.6 166.6 239.8 165.9 238.5 164.7 237.8 163.1 237.8 161.1 238.5 158.9 239.8 156.5 241.6 154.0 244.0 151.7 246.7 149.5 249.6 147.7 252.6 146.3 255.5 145.4 258.2 145.0 260.6 145.1 262.5 145.8 263.8 147.0M266.3 153.4L266.9 154.9 266.9 156.7 266.3 158.7 265.1 160.8 263.5 163.0 261.3 165.1 258.9 167.0 256.3 168.7 253.6 169.9 251.0 170.7 248.6 171.1 246.4 171.0 244.8 170.4 243.6 169.3 243.0 167.8 243.0 166.0 243.6 164.0 244.8 161.9 246.4 159.7 248.5 157.6 251.0 155.7 253.6 154.0 256.3 152.8 258.9 152.0 261.3 151.6 263.4 151.7 265.1 152.3 266.3 153.4M267.5 159.6L268.0 160.8 268.0 162.2 267.5 163.9 266.6 165.6 265.2 167.4 263.5 169.1 261.5 170.7 259.3 172.0 257.1 173.0 255.0 173.7 253.0 174.0 251.3 173.9 249.9 173.4 249.0 172.5 248.5 171.3 248.5 169.9 249.0 168.2 249.9 166.5 251.3 164.7 253.0 163.0 255.0 161.4 257.1 160.1 259.3 159.1 261.5 158.4 263.5 158.1 265.2 158.2 266.6 158.7 267.5 159.6M267.3 165.1L267.7 165.9 267.7 166.9 267.3 168.1 266.6 169.4 265.7 170.6 264.5 171.8 263.1 172.9 261.5 173.9 260.0 174.6 258.5 175.1 257.1 175.3 255.9 175.2 254.9 174.9 254.2 174.2 253.9 173.4 253.9 172.4 254.2 171.2 254.9 170.0 255.9 168.7 257.1 167.5 258.5 166.4 260.0 165.4 261.5 164.7 263.1 164.2 264.5 164.0 265.7 164.1 266.6 164.5 267.3 165.1M265.7 169.6L265.9 170.0 265.9 170.5 265.7 171.1 265.4 171.8 264.9 172.4 264.3 173.1 263.5 173.6 262.8 174.1 262.0 174.5 261.2 174.7 260.4 174.8 259.8 174.8 259.3 174.6 259.0 174.3 258.8 173.9 258.8 173.3 259.0 172.7 259.3 172.1 259.8 171.4 260.4 170.8 261.2 170.2 262.0 169.7 262.8 169.4 263.5 169.1 264.3 169.0 264.9 169.1 265.4 169.2 265.7 169.6M231.1 127.3L232.7 126.4 234.4 125.8 236.3 125.5 238.4 125.6 240.5 125.9 242.7 126.5 245.0 127.5 247.3 128.7 249.6 130.2 251.9 131.9 254.1 133.8 256.2 136.0 258.2 138.3 260.1 140.8 261.8 143.4 263.3 146.1 264.6 148.8 265.7 151.6 266.6 154.3 267.2 157.0 267.5 159.6 267.6 162.0 267.4 164.3 267.0 166.5 266.3 168.4 265.4 170.1 264.3 171.5 262.9 172.7M231.1 127.3L232.8 126.7 234.6 126.4 236.6 126.4 238.7 126.6 240.9 127.2 243.2 128.1 245.6 129.2 247.9 130.6 250.3 132.2 252.6 134.1 254.9 136.2 257.0 138.4 259.0 140.8 260.9 143.3 262.6 145.9 264.1 148.5 265.4 151.2 266.4 153.8 267.2 156.4 267.8 158.9 268.1 161.3 268.1 163.6 267.8 165.7 267.3 167.5 266.6 169.2 265.6 170.6 264.3 171.8 262.9 172.7M231.1 127.3L232.7 127.0 234.5 127.1 236.4 127.4 238.4 128.0 240.6 128.9 242.9 130.0 245.2 131.4 247.5 133.1 249.8 134.9 252.1 136.9 254.3 139.1 256.4 141.5 258.4 143.9 260.3 146.4 262.0 149.0 263.5 151.6 264.8 154.1 265.9 156.6 266.7 159.1 267.3 161.4 267.6 163.5 267.7 165.5 267.5 167.3 267.1 168.9 266.4 170.2 265.5 171.3 264.3 172.2 262.9 172.7M231.1 127.3L232.5 127.4 234.0 127.8 235.8 128.5 237.6 129.5 239.6 130.7 241.7 132.2 243.8 133.9 246.0 135.8 248.2 137.8 250.4 140.1 252.5 142.4 254.6 144.9 256.6 147.4 258.4 149.9 260.1 152.4 261.7 155.0 263.0 157.4 264.2 159.8 265.1 162.0 265.8 164.1 266.3 166.0 266.5 167.7 266.5 169.2 266.3 170.4 265.8 171.4 265.0 172.1 264.1 172.5 262.9 172.7M231.1 127.3L232.1 127.8 233.4 128.6 234.8 129.7 236.3 131.0 238.0 132.6 239.8 134.4 241.7 136.3 243.7 138.5 245.7 140.8 247.7 143.2 249.7 145.7 251.7 148.3 253.6 150.8 255.4 153.4 257.1 155.9 258.7 158.4 260.2 160.7 261.5 162.9 262.6 165.0 263.5 166.8 264.2 168.5 264.7 169.9 264.9 171.0 265.0 171.9 264.8 172.5 264.4 172.9 263.7 172.9 262.9 172.7M231.1 127.3L231.7 128.2 232.5 129.3 233.5 130.7 234.7 132.4 236.0 134.3 237.4 136.3 239.0 138.6 240.7 141.0 242.4 143.5 244.2 146.1 246.1 148.7 247.9 151.3 249.8 154.0 251.6 156.6 253.3 159.1 255.0 161.4 256.6 163.7 258.0 165.8 259.3 167.6 260.5 169.3 261.5 170.7 262.3 171.8 262.9 172.7 263.3 173.3 263.5 173.6 263.5 173.6 263.3 173.3 262.9 172.7M231.1 127.3L231.2 128.5 231.6 129.9 232.1 131.6 232.8 133.5 233.7 135.6 234.8 137.9 236.0 140.4 237.3 142.9 238.8 145.6 240.4 148.3 242.0 151.1 243.8 153.8 245.5 156.5 247.3 159.1 249.1 161.6 250.8 163.9 252.5 166.1 254.2 168.0 255.7 169.8 257.2 171.2 258.5 172.5 259.6 173.4 260.6 174.0 261.5 174.4 262.1 174.4 262.6 174.1 262.8 173.6 262.9 172.7M231.1 127.3L230.8 128.6 230.6 130.2 230.7 132.1 230.9 134.2 231.4 136.5 232.1 138.9 232.9 141.5 234.0 144.2 235.2 147.0 236.5 149.8 238.0 152.6 239.6 155.4 241.3 158.1 243.0 160.7 244.8 163.2 246.6 165.5 248.5 167.6 250.3 169.5 252.1 171.1 253.8 172.5 255.4 173.6 256.9 174.4 258.3 174.9 259.6 175.1 260.7 175.0 261.6 174.5 262.3 173.8 262.9 172.7M231.1 127.3L230.3 128.7 229.7 130.4 229.4 132.3 229.2 134.4 229.3 136.8 229.6 139.3 230.2 141.9 230.9 144.7 231.8 147.5 233.0 150.3 234.3 153.1 235.8 155.9 237.4 158.7 239.1 161.3 240.9 163.7 242.8 166.0 244.8 168.1 246.8 170.0 248.8 171.6 250.7 173.0 252.6 174.0 254.5 174.8 256.3 175.2 257.9 175.3 259.4 175.2 260.7 174.6 261.9 173.8 262.9 172.7M231.1 127.3L230.0 128.6 229.0 130.3 228.3 132.1 227.9 134.2 227.7 136.5 227.7 139.0 227.9 141.6 228.5 144.3 229.2 147.0 230.2 149.8 231.3 152.7 232.7 155.4 234.2 158.1 236.0 160.8 237.8 163.2 239.8 165.5 241.8 167.6 243.9 169.5 246.1 171.2 248.3 172.6 250.4 173.7 252.5 174.5 254.6 174.9 256.5 175.1 258.4 175.0 260.0 174.5 261.6 173.8 262.9 172.7M231.1 127.3L229.7 128.5 228.6 129.9 227.7 131.6 227.0 133.5 226.6 135.7 226.4 138.0 226.5 140.4 226.8 143.0 227.4 145.7 228.3 148.4 229.4 151.2 230.7 153.9 232.2 156.6 233.9 159.2 235.8 161.7 237.8 164.0 239.9 166.2 242.1 168.1 244.4 169.8 246.7 171.3 249.0 172.5 251.3 173.5 253.5 174.1 255.6 174.4 257.7 174.5 259.6 174.2 261.3 173.6 262.9 172.7M231.1 127.3L229.7 128.2 228.4 129.4 227.4 130.8 226.7 132.5 226.2 134.3 225.9 136.4 225.9 138.7 226.2 141.1 226.8 143.6 227.6 146.2 228.6 148.8 229.9 151.5 231.4 154.1 233.1 156.7 235.0 159.2 237.0 161.6 239.1 163.8 241.4 165.9 243.7 167.8 246.1 169.4 248.4 170.8 250.8 171.9 253.1 172.8 255.3 173.4 257.4 173.6 259.4 173.6 261.2 173.3 262.9 172.7M231.1 127.3L229.7 127.8 228.5 128.7 227.6 129.8 226.9 131.1 226.5 132.7 226.3 134.5 226.4 136.5 226.7 138.6 227.3 140.9 228.1 143.4 229.2 145.9 230.5 148.4 232.0 151.0 233.7 153.6 235.6 156.1 237.6 158.5 239.7 160.9 241.9 163.1 244.2 165.1 246.5 166.9 248.8 168.6 251.1 170.0 253.4 171.1 255.6 172.0 257.6 172.6 259.5 172.9 261.3 173.0 262.9 172.7M231.1 127.3L229.9 127.5 229.0 127.9 228.2 128.6 227.7 129.6 227.5 130.8 227.5 132.3 227.7 134.0 228.2 135.9 228.9 138.0 229.8 140.2 231.0 142.6 232.3 145.0 233.9 147.6 235.6 150.1 237.4 152.6 239.4 155.1 241.5 157.6 243.6 159.9 245.8 162.2 248.0 164.2 250.2 166.1 252.3 167.8 254.4 169.3 256.4 170.5 258.2 171.5 260.0 172.2 261.5 172.6 262.9 172.7M231.1 127.3L230.3 127.1 229.6 127.1 229.2 127.5 229.0 128.1 229.1 129.0 229.3 130.1 229.8 131.5 230.5 133.2 231.4 135.0 232.5 137.1 233.8 139.3 235.3 141.6 236.9 144.1 238.6 146.6 240.4 149.2 242.3 151.7 244.3 154.3 246.3 156.8 248.3 159.2 250.3 161.5 252.3 163.7 254.2 165.6 256.0 167.4 257.7 169.0 259.2 170.3 260.6 171.4 261.9 172.2 262.9 172.7M231.1 127.3L230.7 126.7 230.5 126.4 230.5 126.4 230.7 126.7 231.1 127.3 231.7 128.2 232.5 129.3 233.5 130.7 234.7 132.4 236.0 134.2 237.4 136.3 239.0 138.6 240.7 140.9 242.4 143.4 244.2 146.0 246.1 148.7 247.9 151.3 249.8 153.9 251.6 156.5 253.3 159.0 255.0 161.4 256.6 163.7 258.0 165.7 259.3 167.6 260.5 169.3 261.5 170.7 262.3 171.8 262.9 172.7M231.1 127.3L231.2 126.4 231.4 125.9 231.9 125.6 232.5 125.6 233.4 126.0 234.4 126.6 235.5 127.5 236.8 128.8 238.3 130.2 239.8 132.0 241.5 133.9 243.2 136.1 244.9 138.4 246.7 140.9 248.5 143.5 250.2 146.2 252.0 148.9 253.6 151.7 255.2 154.4 256.7 157.1 258.0 159.6 259.2 162.1 260.3 164.4 261.2 166.5 261.9 168.4 262.4 170.1 262.8 171.5 262.9 172.7M231.1 127.3L231.7 126.2 232.4 125.5 233.3 125.0 234.4 124.9 235.7 125.1 237.1 125.6 238.6 126.4 240.2 127.5 241.9 128.9 243.7 130.5 245.5 132.4 247.4 134.5 249.2 136.8 251.0 139.3 252.7 141.9 254.4 144.6 256.0 147.4 257.5 150.2 258.8 153.0 260.0 155.8 261.1 158.5 261.9 161.1 262.6 163.5 263.1 165.8 263.3 167.9 263.4 169.8 263.2 171.4 262.9 172.7M231.1 127.3L232.1 126.2 233.3 125.4 234.6 124.8 236.1 124.7 237.7 124.8 239.5 125.2 241.4 126.0 243.3 127.0 245.2 128.4 247.2 130.0 249.2 131.9 251.2 134.0 253.1 136.3 254.9 138.7 256.6 141.3 258.2 144.1 259.7 146.9 261.0 149.7 262.2 152.5 263.1 155.3 263.8 158.1 264.4 160.7 264.7 163.2 264.8 165.6 264.6 167.7 264.3 169.6 263.7 171.3 262.9 172.7M231.1 127.3L232.4 126.2 234.0 125.5 235.6 125.0 237.5 124.9 239.4 125.1 241.5 125.5 243.6 126.3 245.7 127.4 247.9 128.8 250.1 130.5 252.2 132.4 254.2 134.5 256.2 136.8 258.0 139.2 259.8 141.9 261.3 144.6 262.7 147.3 263.8 150.2 264.8 153.0 265.5 155.7 266.1 158.4 266.3 161.0 266.3 163.5 266.1 165.8 265.7 167.9 265.0 169.7 264.0 171.4 262.9 172.7" fill="none" stroke="#c6c6c6" stroke-width="0.6"/><path d="M268.5 171.4L268.8 171.1 269.2 170.9 269.7 170.8 270.4 170.8 271.1 171.0 271.8 171.2 272.5 171.6 273.2 172.1 273.8 172.6 274.3 173.1 274.6 173.6 274.8 174.1 274.9 174.6 274.8 175.0 274.5 175.3 274.0 175.5 273.5 175.6 272.9 175.5 272.2 175.4 271.4 175.1 270.7 174.8 270.0 174.3 269.4 173.8 269.0 173.3 268.6 172.7 268.4 172.2 268.4 171.8 268.5 171.4M266.9 167.3L267.5 166.7 268.3 166.3 269.4 166.2 270.6 166.2 271.9 166.5 273.4 167.1 274.8 167.8 276.1 168.6 277.2 169.6 278.1 170.6 278.8 171.6 279.2 172.6 279.3 173.5 279.1 174.3 278.5 174.9 277.7 175.3 276.6 175.4 275.4 175.3 274.1 175.0 272.6 174.5 271.2 173.8 269.9 173.0 268.8 172.0 267.9 171.0 267.2 169.9 266.8 168.9 266.7 168.0 266.9 167.3M266.6 162.0L267.4 161.2 268.6 160.7 270.0 160.4 271.8 160.5 273.7 161.0 275.7 161.7 277.7 162.7 279.5 163.9 281.2 165.3 282.5 166.7 283.4 168.2 284.0 169.6 284.1 170.8 283.8 171.9 283.0 172.8 281.9 173.3 280.4 173.5 278.6 173.4 276.7 173.0 274.7 172.3 272.7 171.3 270.9 170.0 269.3 168.7 267.9 167.2 267.0 165.8 266.4 164.4 266.3 163.1 266.6 162.0M267.6 155.9L268.5 154.9 269.9 154.3 271.8 154.0 273.9 154.1 276.2 154.6 278.7 155.5 281.1 156.8 283.4 158.2 285.4 159.9 287.0 161.7 288.2 163.5 288.8 165.2 289.0 166.7 288.6 168.1 287.6 169.1 286.2 169.7 284.4 170.0 282.2 169.9 279.9 169.4 277.5 168.5 275.0 167.2 272.8 165.8 270.8 164.1 269.2 162.3 268.0 160.5 267.3 158.8 267.2 157.3 267.6 155.9M269.7 149.5L270.7 148.3 272.3 147.6 274.4 147.3 276.8 147.4 279.4 148.0 282.1 149.0 284.8 150.4 287.3 152.0 289.5 153.9 291.4 155.8 292.7 157.8 293.4 159.8 293.6 161.5 293.1 163.0 292.1 164.1 290.5 164.8 288.5 165.1 286.1 165.0 283.4 164.4 280.7 163.4 278.0 162.1 275.5 160.4 273.3 158.6 271.5 156.6 270.1 154.6 269.4 152.7 269.2 150.9 269.7 149.5M272.9 143.0L274.0 141.8 275.6 141.1 277.7 140.7 280.2 140.9 282.9 141.5 285.7 142.5 288.5 143.9 291.1 145.6 293.4 147.6 295.3 149.6 296.7 151.7 297.4 153.7 297.6 155.5 297.1 157.0 296.0 158.2 294.4 158.9 292.3 159.3 289.8 159.1 287.1 158.5 284.3 157.5 281.5 156.1 278.9 154.4 276.6 152.4 274.7 150.4 273.3 148.3 272.6 146.3 272.4 144.5 272.9 143.0M276.9 137.0L277.9 135.9 279.5 135.2 281.5 134.9 283.9 135.0 286.6 135.6 289.3 136.6 292.0 137.9 294.5 139.6 296.7 141.4 298.5 143.4 299.9 145.4 300.6 147.3 300.8 149.1 300.3 150.5 299.3 151.7 297.7 152.4 295.6 152.7 293.2 152.6 290.6 152.0 287.9 151.0 285.2 149.6 282.7 148.0 280.5 146.1 278.6 144.2 277.3 142.2 276.6 140.2 276.4 138.5 276.9 137.0M281.4 131.9L282.4 130.9 283.8 130.3 285.6 130.0 287.8 130.1 290.1 130.6 292.5 131.5 295.0 132.8 297.2 134.2 299.2 135.9 300.8 137.7 302.0 139.5 302.7 141.2 302.8 142.7 302.4 144.1 301.5 145.1 300.1 145.7 298.2 146.0 296.1 145.9 293.8 145.4 291.3 144.5 288.9 143.2 286.6 141.8 284.6 140.1 283.0 138.3 281.8 136.5 281.2 134.8 281.0 133.3 281.4 131.9M286.2 128.1L287.0 127.2 288.1 126.7 289.6 126.5 291.4 126.6 293.3 127.0 295.3 127.7 297.3 128.7 299.1 130.0 300.7 131.3 302.1 132.8 303.0 134.2 303.6 135.6 303.7 136.9 303.4 138.0 302.6 138.8 301.4 139.3 300.0 139.6 298.2 139.5 296.3 139.0 294.3 138.3 292.3 137.3 290.5 136.1 288.8 134.7 287.5 133.3 286.6 131.8 286.0 130.4 285.9 129.2 286.2 128.1M290.9 125.7L291.5 125.1 292.3 124.7 293.4 124.6 294.6 124.7 295.9 125.0 297.4 125.5 298.8 126.2 300.1 127.0 301.2 128.0 302.1 129.0 302.8 130.1 303.2 131.1 303.3 132.0 303.1 132.7 302.5 133.3 301.7 133.7 300.6 133.8 299.4 133.8 298.1 133.5 296.6 132.9 295.2 132.2 293.9 131.4 292.8 130.4 291.9 129.4 291.2 128.4 290.8 127.4 290.7 126.5 290.9 125.7M295.2 125.0L295.5 124.7 296.0 124.5 296.5 124.4 297.1 124.5 297.8 124.6 298.6 124.9 299.3 125.2 300.0 125.7 300.6 126.2 301.0 126.7 301.4 127.3 301.6 127.8 301.6 128.2 301.5 128.6 301.2 128.9 300.8 129.1 300.3 129.2 299.6 129.2 298.9 129.0 298.2 128.8 297.5 128.4 296.8 127.9 296.2 127.4 295.7 126.9 295.4 126.4 295.2 125.9 295.1 125.4 295.2 125.0M271.1 174.0L269.9 173.1 268.8 171.8 267.9 170.3 267.3 168.6 266.8 166.6 266.6 164.4 266.6 162.0 266.9 159.5 267.4 156.8 268.1 154.1 269.0 151.3 270.1 148.5 271.4 145.7 272.9 143.0 274.5 140.4 276.3 137.8 278.1 135.5 280.1 133.3 282.1 131.3 284.2 129.6 286.2 128.1 288.3 126.9 290.3 126.0 292.2 125.3 294.1 125.0 295.8 125.0 297.4 125.4 298.9 126.0M271.1 174.0L270.1 172.9 269.2 171.5 268.5 169.8 268.0 167.9 267.7 165.8 267.7 163.4 267.8 160.9 268.2 158.3 268.8 155.5 269.6 152.7 270.6 149.9 271.7 147.0 273.1 144.2 274.6 141.5 276.2 138.8 277.9 136.3 279.7 134.0 281.6 131.9 283.5 130.0 285.5 128.4 287.4 127.0 289.3 125.9 291.2 125.1 293.0 124.7 294.6 124.5 296.2 124.7 297.6 125.2 298.9 126.0M271.1 174.0L270.4 172.8 269.8 171.3 269.4 169.6 269.2 167.6 269.1 165.4 269.3 163.0 269.7 160.4 270.3 157.8 271.1 155.0 272.0 152.1 273.1 149.2 274.4 146.3 275.7 143.5 277.2 140.8 278.8 138.1 280.5 135.7 282.3 133.4 284.0 131.3 285.8 129.4 287.6 127.8 289.3 126.5 291.0 125.5 292.6 124.8 294.1 124.4 295.5 124.3 296.8 124.5 297.9 125.1 298.9 126.0M271.1 174.0L270.7 172.8 270.5 171.4 270.5 169.7 270.7 167.7 271.0 165.5 271.5 163.1 272.2 160.6 273.0 157.9 274.0 155.1 275.1 152.3 276.4 149.4 277.7 146.5 279.2 143.7 280.7 141.0 282.3 138.4 283.9 135.9 285.5 133.6 287.1 131.5 288.7 129.6 290.3 128.0 291.8 126.7 293.2 125.6 294.4 124.9 295.6 124.5 296.7 124.4 297.6 124.6 298.3 125.1 298.9 126.0M271.1 174.0L271.2 173.0 271.4 171.6 271.8 170.0 272.3 168.2 273.0 166.1 273.9 163.8 274.9 161.4 276.0 158.8 277.3 156.1 278.6 153.3 280.0 150.4 281.5 147.6 283.0 144.8 284.6 142.1 286.1 139.4 287.7 136.9 289.2 134.6 290.6 132.4 292.0 130.5 293.3 128.8 294.5 127.4 295.6 126.3 296.5 125.5 297.3 124.9 297.9 124.7 298.4 124.8 298.7 125.3 298.9 126.0M271.1 174.0L271.6 173.2 272.3 172.0 273.1 170.7 274.0 169.0 275.1 167.1 276.3 165.0 277.7 162.7 279.1 160.2 280.6 157.6 282.1 155.0 283.7 152.2 285.3 149.4 286.9 146.7 288.5 143.9 290.0 141.3 291.5 138.7 292.9 136.4 294.2 134.1 295.3 132.1 296.4 130.3 297.3 128.7 298.0 127.5 298.6 126.5 299.0 125.7 299.2 125.3 299.3 125.3 299.2 125.5 298.9 126.0M271.1 174.0L272.0 173.4 273.1 172.6 274.3 171.5 275.6 170.1 277.0 168.4 278.6 166.5 280.2 164.4 281.9 162.1 283.6 159.7 285.4 157.2 287.1 154.5 288.8 151.8 290.5 149.1 292.1 146.4 293.6 143.7 295.0 141.1 296.3 138.7 297.4 136.3 298.4 134.2 299.2 132.2 299.8 130.5 300.2 129.0 300.5 127.8 300.6 126.8 300.4 126.2 300.1 125.8 299.6 125.7 298.9 126.0M271.1 174.0L272.3 173.8 273.7 173.2 275.2 172.4 276.8 171.3 278.6 169.9 280.4 168.3 282.2 166.4 284.1 164.3 286.1 162.1 288.0 159.7 289.8 157.2 291.6 154.6 293.3 151.9 295.0 149.2 296.4 146.5 297.8 143.9 299.0 141.3 300.0 138.9 300.8 136.6 301.4 134.4 301.8 132.5 302.0 130.7 302.0 129.3 301.8 128.0 301.4 127.1 300.7 126.4 299.9 126.1 298.9 126.0M271.1 174.0L272.6 174.1 274.1 173.9 275.8 173.3 277.7 172.5 279.6 171.4 281.6 170.1 283.6 168.5 285.6 166.6 287.7 164.5 289.7 162.3 291.6 159.9 293.5 157.4 295.2 154.8 296.9 152.1 298.3 149.4 299.7 146.7 300.8 144.1 301.7 141.5 302.4 139.0 302.9 136.7 303.2 134.5 303.2 132.5 303.0 130.8 302.6 129.3 302.0 128.0 301.1 127.1 300.1 126.4 298.9 126.0M271.1 174.0L272.6 174.4 274.3 174.5 276.1 174.2 278.0 173.7 280.0 172.9 282.0 171.7 284.1 170.4 286.2 168.7 288.3 166.8 290.4 164.7 292.3 162.4 294.2 160.0 296.0 157.4 297.6 154.8 299.1 152.1 300.4 149.3 301.5 146.6 302.4 143.9 303.1 141.3 303.5 138.8 303.7 136.4 303.7 134.2 303.4 132.2 303.0 130.5 302.2 128.9 301.3 127.7 300.2 126.7 298.9 126.0M271.1 174.0L272.6 174.6 274.2 175.0 275.9 175.0 277.8 174.7 279.7 174.0 281.7 173.1 283.8 171.9 285.8 170.4 287.9 168.7 289.9 166.7 291.9 164.5 293.7 162.2 295.5 159.6 297.1 157.0 298.6 154.3 299.9 151.5 301.0 148.7 301.9 145.9 302.6 143.2 303.1 140.5 303.4 138.0 303.4 135.6 303.2 133.4 302.7 131.4 302.1 129.7 301.2 128.2 300.1 126.9 298.9 126.0M271.1 174.0L272.4 174.8 273.8 175.3 275.4 175.5 277.0 175.3 278.8 174.9 280.7 174.1 282.6 173.0 284.5 171.6 286.5 170.0 288.4 168.1 290.3 166.0 292.1 163.7 293.8 161.2 295.4 158.5 296.9 155.8 298.3 153.0 299.4 150.1 300.4 147.3 301.2 144.5 301.8 141.7 302.2 139.1 302.3 136.6 302.3 134.2 302.0 132.1 301.5 130.2 300.8 128.5 299.9 127.1 298.9 126.0M271.1 174.0L272.1 174.9 273.2 175.5 274.5 175.7 275.9 175.6 277.4 175.2 279.0 174.5 280.7 173.5 282.4 172.2 284.2 170.6 286.0 168.7 287.7 166.6 289.5 164.3 291.2 161.9 292.8 159.2 294.3 156.5 295.6 153.7 296.9 150.8 298.0 147.9 298.9 145.0 299.7 142.2 300.3 139.6 300.7 137.0 300.9 134.6 300.8 132.4 300.6 130.4 300.2 128.7 299.6 127.2 298.9 126.0M271.1 174.0L271.7 174.9 272.4 175.4 273.3 175.6 274.4 175.5 275.6 175.1 276.8 174.4 278.2 173.3 279.7 172.0 281.3 170.4 282.9 168.5 284.5 166.4 286.1 164.1 287.7 161.6 289.3 159.0 290.8 156.3 292.3 153.5 293.6 150.6 294.9 147.7 296.0 144.9 297.0 142.1 297.8 139.4 298.5 136.9 299.0 134.5 299.3 132.3 299.5 130.3 299.5 128.6 299.3 127.2 298.9 126.0M271.1 174.0L271.3 174.7 271.6 175.2 272.1 175.3 272.7 175.1 273.5 174.5 274.4 173.7 275.5 172.6 276.7 171.2 278.0 169.5 279.4 167.6 280.8 165.4 282.3 163.1 283.9 160.6 285.4 157.9 287.0 155.2 288.5 152.4 290.0 149.6 291.4 146.7 292.7 143.9 294.0 141.2 295.1 138.6 296.1 136.2 297.0 133.9 297.7 131.8 298.2 130.0 298.6 128.4 298.8 127.0 298.9 126.0M271.1 174.0L270.8 174.5 270.7 174.7 270.8 174.7 271.0 174.3 271.4 173.5 272.0 172.5 272.7 171.3 273.6 169.7 274.7 167.9 275.8 165.9 277.1 163.6 278.5 161.3 280.0 158.7 281.5 156.1 283.1 153.3 284.7 150.6 286.3 147.8 287.9 145.0 289.4 142.4 290.9 139.8 292.3 137.3 293.7 135.0 294.9 132.9 296.0 131.0 296.9 129.3 297.7 128.0 298.4 126.8 298.9 126.0M271.1 174.0L270.4 174.3 269.9 174.2 269.6 173.8 269.4 173.2 269.5 172.2 269.8 171.0 270.2 169.5 270.8 167.8 271.6 165.8 272.6 163.7 273.7 161.3 275.0 158.9 276.4 156.3 277.9 153.6 279.5 150.9 281.2 148.2 282.9 145.5 284.6 142.8 286.4 140.3 288.1 137.9 289.8 135.6 291.4 133.5 293.0 131.6 294.4 129.9 295.7 128.5 296.9 127.4 298.0 126.6 298.9 126.0M271.1 174.0L270.1 173.9 269.3 173.6 268.6 172.9 268.2 172.0 268.0 170.7 268.0 169.3 268.2 167.5 268.6 165.6 269.2 163.4 270.0 161.1 271.0 158.7 272.2 156.1 273.6 153.5 275.0 150.8 276.7 148.1 278.4 145.4 280.2 142.8 282.0 140.3 283.9 137.9 285.9 135.7 287.8 133.6 289.6 131.7 291.4 130.1 293.2 128.7 294.8 127.6 296.3 126.8 297.7 126.2 298.9 126.0M271.1 174.0L269.9 173.6 268.9 172.9 268.0 172.0 267.4 170.7 267.0 169.2 266.8 167.5 266.8 165.5 267.1 163.3 267.6 161.0 268.3 158.5 269.2 155.9 270.3 153.3 271.7 150.6 273.1 147.9 274.8 145.2 276.5 142.6 278.4 140.1 280.3 137.7 282.3 135.5 284.4 133.4 286.4 131.5 288.4 129.9 290.4 128.6 292.3 127.5 294.2 126.7 295.9 126.1 297.4 125.9 298.9 126.0M271.1 174.0L269.8 173.3 268.7 172.3 267.8 171.1 267.0 169.5 266.6 167.8 266.3 165.8 266.3 163.6 266.5 161.2 266.9 158.7 267.6 156.1 268.5 153.4 269.6 150.7 270.9 147.9 272.4 145.2 274.0 142.6 275.8 140.0 277.7 137.6 279.6 135.3 281.7 133.2 283.8 131.3 285.9 129.6 288.0 128.3 290.0 127.1 292.0 126.3 293.9 125.8 295.7 125.5 297.4 125.6 298.9 126.0" fill="none" stroke="#c6c6c6" stroke-width="0.6"/><path d="M265.5 176.5L315.5 183.6M265.5 176.5L313.3 185.7M265.5 176.5L310.6 187.6M265.5 176.5L307.4 189.4M265.5 176.5L303.8 191.0M265.5 176.5L299.7 192.5M265.5 176.5L295.2 193.8M265.5 176.5L290.5 195.0M265.5 176.5L285.4 195.9M265.5 176.5L280.2 196.6M265.5 176.5L274.7 197.1M265.5 176.5L269.2 197.3M265.5 176.5L263.6 197.4M265.5 176.5L258.1 197.2M265.5 176.5L252.6 196.8M265.5 176.5L247.3 196.1M265.5 176.5L242.2 195.3M265.5 176.5L237.3 194.2M265.5 176.5L232.7 193.0M265.5 176.5L228.5 191.5M265.5 176.5L224.7 189.9M265.5 176.5L221.4 188.2M265.5 176.5L218.5 186.3M265.5 176.5L216.2 184.3" fill="none" stroke="#c6c6c6" stroke-width="0.5"/><line x1="267.8" y1="0" x2="267.8" y2="178.5" stroke="#e4e85c" stroke-width="0.75"/><line x1="265.5" y1="176.5" x2="58.3" y2="272.7" stroke="#bc2c2c" stroke-width="0.85"/><defs><linearGradient id="zg" x1="0" y1="0" x2="1" y2="0"><stop offset="0" stop-color="#2a6fd6"/><stop offset="0.35" stop-color="#2233c8"/><stop offset="1" stop-color="#7a3fc0"/></linearGradient></defs><line x1="265.5" y1="176.5" x2="423.4" y2="224.7" stroke="url(#zg)" stroke-width="0.85"/><line x1="6.3" y1="242.5" x2="144.4" y2="285.9" stroke="#2180d8" stroke-width="1.15"/><line x1="65.2" y1="213.5" x2="207.5" y2="258.3" stroke="#2180d8" stroke-width="1.15"/><line x1="124.9" y1="187.4" x2="265.5" y2="231.3" stroke="#2180d8" stroke-width="1.15"/><line x1="166.5" y1="165.3" x2="313.7" y2="211.3" stroke="#2180d8" stroke-width="1.15"/><line x1="190.9" y1="151.5" x2="287" y2="181.7" stroke="#2180d8" stroke-width="1.15"/><line x1="239.7" y1="127.7" x2="397.5" y2="177.1" stroke="#2180d8" stroke-width="1.15"/><text x="0" y="0" font-family="'Liberation Sans', sans-serif" font-size="27" fill="#c42c2c" transform="translate(43.2 289) rotate(-7) scale(0.56 1)" stroke="#ffffff" stroke-width="1.1">X</text></svg></div>
<div class="t" style="left:69px;top:7px;font-size:21.2px;font-weight:700;color:#d8d8d8;transform:matrix(0.9637,0.0006,0,1,0.30,0.22);">KEYSIGHT</div>
<div class="t" style="left:70px;top:30px;font-size:11.1px;color:#cdcdcd;letter-spacing:1.134px;transform:matrix(1.0000,0.0006,0,1,1.00,0.01);">TECHNOLOGIES</div>
<div class="t" style="left:217px;top:14px;font-size:22.6px;font-weight:700;color:#d2d2d2;transform:matrix(0.9100,0.0006,0,1,0.29,0.08);">LABOperations</div>
<div class="t" style="left:1518px;top:14px;font-size:18.6px;color:#d2d2d2;transform:matrix(1.0109,0.0006,0,1,0.80,0.63);-webkit-text-stroke:0.3px #d2d2d2;">Notifications</div>
<div class="t" style="left:1699px;top:14px;font-size:18.6px;color:#d2d2d2;transform:matrix(0.9798,0.0006,0,1,0.80,0.74);-webkit-text-stroke:0.3px #d2d2d2;">Settings</div>
<div class="t" style="left:1844px;top:14px;font-size:18.6px;color:#d2d2d2;transform:matrix(0.9941,0.0006,0,1,0.35,0.63);-webkit-text-stroke:0.3px #d2d2d2;">Profile</div>
<div class="t" style="left:25px;top:69px;font-size:22.7px;color:#cfcfcf;transform:matrix(0.9626,0.0006,0,1,0.26,0.64);-webkit-text-stroke:0.2px #cfcfcf;">Resource Management</div>
<div class="t" style="left:278px;top:69px;font-size:22.7px;color:#cfcfcf;transform:matrix(0.9679,0.0006,0,1,0.24,0.64);-webkit-text-stroke:0.2px #cfcfcf;">Planning &amp; Coordination</div>
<div class="t" style="left:540px;top:69px;font-size:22.7px;color:#cfcfcf;transform:matrix(1.0121,0.0006,0,1,0.43,0.62);-webkit-text-stroke:0.2px #cfcfcf;">Monitoring</div>
<div class="t" style="left:672px;top:69px;font-size:22.7px;color:#4a8ffa;transform:matrix(0.9424,0.0006,0,1,0.63,0.33);-webkit-text-stroke:0.2px #4a8ffa;text-decoration:underline;text-decoration-thickness:1.1px;text-underline-offset:2.2px;">Orders</div>
<div class="t" style="left:23px;top:143px;font-size:19.5px;font-weight:700;color:#d2d2d2;transform:matrix(0.9920,0.0006,0,1,0.62,0.80);">Measurements</div>
<div class="t" style="left:1351px;top:143px;font-size:18.4px;color:#f0f0f0;transform:matrix(0.9592,0.0006,0,1,0.17,0.48);-webkit-text-stroke:0.25px #f0f0f0;">Search</div>
<div class="t" style="left:1459px;top:143px;font-size:19.5px;font-weight:700;color:#d2d2d2;transform:matrix(0.9843,0.0006,0,1,0.29,0.80);">Preview</div>
<div class="t" style="left:1453px;top:200px;font-size:16.0px;color:#d4d4d4;transform:matrix(1.0363,0.0006,0,1,0.35,0.80);-webkit-text-stroke:0.5px #d4d4d4;">Visualization</div>
<div class="t" style="left:1453px;top:555px;font-size:16.0px;color:#d4d4d4;transform:matrix(1.0281,0.0006,0,1,0.42,0.36);-webkit-text-stroke:0.5px #d4d4d4;">Test Configuration</div>
<div class="t" style="left:25px;top:205px;font-size:16.5px;font-weight:700;color:#d2d2d2;transform:matrix(0.9332,0.0006,0,1,0.52,0.12);">Filters</div>
<div class="t" style="left:25px;top:584px;font-size:16.5px;font-weight:700;color:#d2d2d2;transform:matrix(0.9101,0.0006,0,1,0.59,0.70);">By Date</div>
<div class="t" style="left:33px;top:247px;font-size:17.5px;color:#f2f2f2;transform:matrix(0.9524,0.0006,0,1,0.79,0.83);">Services</div>
<div class="t" style="left:153px;top:248px;font-size:14.4px;color:#ababab;transform:matrix(1.0292,0.0006,0,1,0.60,0.88);">Select...</div>
<div class="t" style="left:33px;top:303px;font-size:17.5px;color:#f2f2f2;transform:matrix(0.9767,0.0006,0,1,0.79,0.91);">Car Line</div>
<div class="t" style="left:153px;top:304px;font-size:14.4px;color:#ababab;transform:matrix(1.0292,0.0006,0,1,0.60,0.88);">Select...</div>
<div class="t" style="left:33px;top:359px;font-size:17.5px;color:#f2f2f2;transform:matrix(0.9856,0.0006,0,1,0.79,0.85);">System</div>
<div class="t" style="left:153px;top:360px;font-size:14.4px;color:#ababab;transform:matrix(1.0292,0.0006,0,1,0.60,0.88);">Select...</div>
<div class="t" style="left:33px;top:415px;font-size:17.5px;color:#f2f2f2;transform:matrix(0.9970,0.0006,0,1,0.79,0.85);">Signal Path</div>
<div class="t" style="left:153px;top:416px;font-size:14.4px;color:#ababab;transform:matrix(1.0292,0.0006,0,1,0.60,0.88);">Select...</div>
<div class="t" style="left:33px;top:471px;font-size:17.5px;color:#f2f2f2;transform:matrix(1.0250,0.0006,0,1,0.79,0.84);">Category</div>
<div class="t" style="left:153px;top:471px;font-size:18.2px;color:#f2f2f2;transform:matrix(1.0276,0.0006,0,1,0.41,0.35);">Amplifier</div>
<div class="t" style="left:33px;top:527px;font-size:17.5px;color:#f2f2f2;transform:matrix(1.0402,0.0006,0,1,0.79,0.85);">Component</div>
<div class="t" style="left:153px;top:528px;font-size:14.4px;color:#ababab;transform:matrix(1.0292,0.0006,0,1,0.60,0.88);">Select...</div>
<div class="t" style="left:33px;top:629px;font-size:13.4px;color:#dedede;transform:matrix(1.0493,0.0006,0,1,0.88,0.61);-webkit-text-stroke:0.35px #dedede;">From</div>
<div class="t" style="left:268px;top:625px;font-size:13.4px;color:#dedede;transform:matrix(1.0327,0.0006,0,1,0.26,0.90);-webkit-text-stroke:0.35px #dedede;">To</div>
<div class="t" style="left:1465px;top:584px;font-size:16.0px;color:#d6d6d6;transform:matrix(0.9828,0.0006,0,1,0.57,0.19);-webkit-text-stroke:0.4px #d6d6d6;">Car Line</div>
<div class="t" style="left:1629px;top:584px;font-size:16.0px;color:#d0d0d0;transform:matrix(0.9782,0.0006,0,1,0.43,0.57);">3A19-PFL</div>
<div class="t" style="left:1465px;top:613px;font-size:16.0px;color:#d6d6d6;transform:matrix(1.0115,0.0006,0,1,0.57,0.27);-webkit-text-stroke:0.4px #d6d6d6;">System</div>
<div class="t" style="left:1629px;top:613px;font-size:16.0px;color:#d0d0d0;transform:matrix(0.9589,0.0006,0,1,0.43,0.56);">3419-GLO</div>
<div class="t" style="left:1465px;top:642px;font-size:16.0px;color:#d6d6d6;transform:matrix(1.0064,0.0006,0,1,0.57,0.27);-webkit-text-stroke:0.4px #d6d6d6;">Signal Path</div>
<div class="t" style="left:1629px;top:642px;font-size:16.0px;color:#d0d0d0;transform:matrix(0.9177,0.0006,0,1,0.43,0.50);">GLO</div>
<div class="t" style="left:1465px;top:671px;font-size:16.0px;color:#d6d6d6;transform:matrix(1.0032,0.0006,0,1,0.57,0.28);-webkit-text-stroke:0.4px #d6d6d6;">Service</div>
<div class="t" style="left:1629px;top:671px;font-size:16.0px;color:#d0d0d0;transform:matrix(0.9386,0.0006,0,1,0.43,0.49);">GLO-3A</div>
<div class="t" style="left:1465px;top:700px;font-size:16.0px;color:#d6d6d6;transform:matrix(1.0134,0.0006,0,1,0.57,0.32);-webkit-text-stroke:0.4px #d6d6d6;">Vehicle</div>
<div class="t" style="left:1629px;top:700px;font-size:16.0px;color:#d0d0d0;transform:matrix(1.0269,0.0006,0,1,0.43,0.53);">3A</div>
<div class="t" style="left:1465px;top:729px;font-size:16.0px;color:#d6d6d6;transform:matrix(0.9996,0.0006,0,1,0.57,0.16);-webkit-text-stroke:0.4px #d6d6d6;">Test Order</div>
<div class="t" style="left:1629px;top:729px;font-size:16.0px;color:#d0d0d0;transform:matrix(0.9829,0.0006,0,1,0.43,0.59);">2019-TO AE34FLKM</div>
<div class="t" style="left:1465px;top:758px;font-size:16.0px;color:#d6d6d6;transform:matrix(1.0311,0.0006,0,1,0.57,0.16);-webkit-text-stroke:0.4px #d6d6d6;">Test Site</div>
<div class="t" style="left:1629px;top:758px;font-size:16.0px;color:#d0d0d0;transform:matrix(0.9528,0.0006,0,1,0.43,0.59);">DE-BO RotaPlate 2</div>
<div class="t" style="left:1465px;top:787px;font-size:16.0px;color:#d6d6d6;transform:matrix(1.0266,0.0006,0,1,0.57,0.16);-webkit-text-stroke:0.4px #d6d6d6;">Test Status</div>
<div class="t" style="left:1629px;top:787px;font-size:16.0px;color:#d0d0d0;transform:matrix(1.0047,0.0006,0,1,0.43,0.59);">Done</div>
<div class="t" style="left:1465px;top:816px;font-size:16.0px;color:#d6d6d6;transform:matrix(1.0055,0.0006,0,1,0.57,0.27);-webkit-text-stroke:0.4px #d6d6d6;">System Property</div>
<div class="t" style="left:1629px;top:816px;font-size:16.0px;color:#d0d0d0;transform:matrix(1.1117,0.0006,0,1,0.43,0.63);">N/A</div>
<div class="t" style="left:1465px;top:845px;font-size:16.0px;color:#d6d6d6;transform:matrix(0.9946,0.0006,0,1,0.57,0.18);-webkit-text-stroke:0.4px #d6d6d6;">Result Type</div>
<div class="t" style="left:1629px;top:845px;font-size:16.0px;color:#d0d0d0;transform:matrix(1.0023,0.0006,0,1,0.43,0.35);">3D Antenna Pattern</div>
<div class="t" style="left:1465px;top:874px;font-size:16.0px;color:#d6d6d6;transform:matrix(1.0231,0.0006,0,1,0.57,0.19);-webkit-text-stroke:0.4px #d6d6d6;">Post Processing</div>
<div class="t" style="left:1629px;top:874px;font-size:16.0px;color:#d0d0d0;transform:matrix(1.0015,0.0006,0,1,0.43,0.60);">Required</div>
<div class="t" style="left:1465px;top:903px;font-size:16.0px;color:#d6d6d6;transform:matrix(0.9933,0.0006,0,1,0.57,0.16);-webkit-text-stroke:0.4px #d6d6d6;">Execution Date</div>
<div class="t" style="left:1629px;top:903px;font-size:16.0px;color:#d0d0d0;transform:matrix(1.0160,0.0006,0,1,0.43,0.58);">04.05.2019</div>
</div></body></html>
